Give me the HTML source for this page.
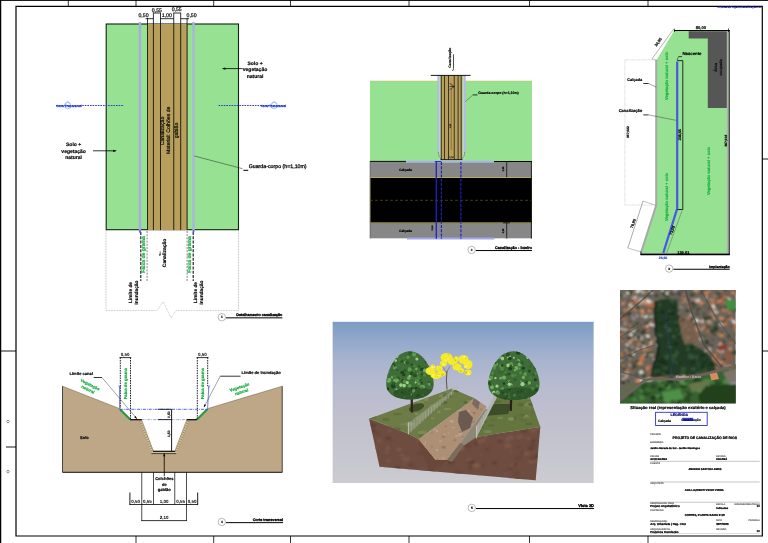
<!DOCTYPE html>
<html lang="pt-BR"><head><meta charset="utf-8"><title>Projeto de Canalização de Rios</title>
<style>
html,body{margin:0;padding:0;background:#fff;overflow:hidden}
svg{display:block;opacity:0.999;text-rendering:geometricPrecision;font-family:'Liberation Sans', sans-serif;}
</style></head><body>
<svg width="768" height="543" viewBox="0 0 768 543">
<defs>
<linearGradient id="sky" x1="0" y1="0" x2="0" y2="1">
<stop offset="0" stop-color="#7b9bc4"/><stop offset="0.12" stop-color="#93a9cb"/><stop offset="0.25" stop-color="#aab4cf"/><stop offset="0.4" stop-color="#b8bbcf"/><stop offset="0.6" stop-color="#c0c0ce"/><stop offset="1" stop-color="#cbcbd0"/>
</linearGradient>
<filter id="b1" x="-10%" y="-10%" width="120%" height="120%"><feGaussianBlur stdDeviation="0.6"/></filter>
<filter id="b3" x="-5%" y="-5%" width="110%" height="110%"><feGaussianBlur stdDeviation="0.85"/></filter>
<filter id="b2" x="-10%" y="-10%" width="120%" height="120%"><feGaussianBlur stdDeviation="1.2"/></filter>
</defs>
<rect x="0" y="0" width="768" height="543" fill="#fff" stroke="none" stroke-width="0"/>
<line x1="0" y1="0.4" x2="768" y2="0.4" stroke="#000" stroke-width="1.0"/>
<line x1="0.6" y1="0" x2="0.6" y2="543" stroke="#000" stroke-width="1.3"/>
<path d="M16 6.3 L762.3 6.3 L762.3 536 L16 536 Z" fill="none" stroke="#000" stroke-width="1.2"/>
<line x1="68.3" y1="0" x2="68.3" y2="6.3" stroke="#000" stroke-width="0.8"/>
<line x1="136" y1="0" x2="136" y2="6.3" stroke="#000" stroke-width="0.8"/>
<line x1="213.7" y1="0" x2="213.7" y2="6.3" stroke="#000" stroke-width="0.8"/>
<line x1="290.5" y1="0" x2="290.5" y2="6.3" stroke="#000" stroke-width="0.8"/>
<line x1="409" y1="0" x2="409" y2="6.3" stroke="#000" stroke-width="0.8"/>
<line x1="529.5" y1="0" x2="529.5" y2="6.3" stroke="#000" stroke-width="0.8"/>
<line x1="648" y1="0" x2="648" y2="6.3" stroke="#000" stroke-width="0.8"/>
<line x1="136" y1="536" x2="136" y2="543" stroke="#000" stroke-width="0.8"/>
<line x1="213.7" y1="536" x2="213.7" y2="543" stroke="#000" stroke-width="0.8"/>
<line x1="290.5" y1="536" x2="290.5" y2="543" stroke="#000" stroke-width="0.8"/>
<line x1="409" y1="536" x2="409" y2="543" stroke="#000" stroke-width="0.8"/>
<line x1="529.5" y1="536" x2="529.5" y2="543" stroke="#000" stroke-width="0.8"/>
<line x1="648" y1="536" x2="648" y2="543" stroke="#000" stroke-width="0.8"/>
<line x1="0" y1="351" x2="16" y2="351" stroke="#000" stroke-width="0.9"/>
<line x1="6" y1="447" x2="16" y2="447" stroke="#000" stroke-width="0.9"/>
<line x1="762" y1="159" x2="768" y2="159" stroke="#000" stroke-width="0.9"/>
<line x1="762" y1="351" x2="768" y2="351" stroke="#000" stroke-width="0.9"/>
<circle cx="8" cy="421.6" r="1.25" fill="none" stroke="#333" stroke-width="0.5"/>
<circle cx="8" cy="471.6" r="1.25" fill="none" stroke="#333" stroke-width="0.5"/>
<text x="761.5" y="8.4" font-size="2.85" text-anchor="end" fill="#1c1c90" font-weight="bold" stroke="#1c1c90" stroke-width="0.16">C:\Users\Projeto\Canalização.rvt</text>
<rect x="106.2" y="24" width="132.3" height="205.7" fill="#97e193" stroke="#102410" stroke-width="1.1"/>
<rect x="147.3" y="24" width="40" height="206" fill="#b8a05c" stroke="none" stroke-width="0"/>
<line x1="147.5" y1="24" x2="147.5" y2="230" stroke="#000" stroke-width="0.8"/>
<line x1="153.4" y1="24" x2="153.4" y2="230" stroke="#000" stroke-width="0.8"/>
<line x1="160.5" y1="24" x2="160.5" y2="230" stroke="#000" stroke-width="0.8"/>
<line x1="173.75" y1="24" x2="173.75" y2="230" stroke="#000" stroke-width="0.8"/>
<line x1="180.7" y1="24" x2="180.7" y2="230" stroke="#000" stroke-width="0.8"/>
<line x1="187.1" y1="24" x2="187.1" y2="230" stroke="#000" stroke-width="0.8"/>
<line x1="139.9" y1="22" x2="139.9" y2="232" stroke="#a9a9e6" stroke-width="2.3"/>
<line x1="193.5" y1="22" x2="193.5" y2="232" stroke="#a9b4e2" stroke-width="2.3"/>
<line x1="147.5" y1="18" x2="147.5" y2="24" stroke="#000" stroke-width="0.8"/>
<line x1="187.1" y1="18" x2="187.1" y2="24" stroke="#000" stroke-width="0.8"/>
<line x1="153.4" y1="12.6" x2="153.4" y2="24" stroke="#000" stroke-width="0.8"/>
<line x1="160.5" y1="12.6" x2="160.5" y2="24" stroke="#000" stroke-width="0.8"/>
<line x1="173.75" y1="12.6" x2="173.75" y2="24" stroke="#000" stroke-width="0.8"/>
<line x1="180.7" y1="12.6" x2="180.7" y2="24" stroke="#000" stroke-width="0.8"/>
<line x1="145.5" y1="18.7" x2="153.4" y2="18.7" stroke="#000" stroke-width="0.8"/>
<line x1="160.5" y1="18.7" x2="173.75" y2="18.7" stroke="#000" stroke-width="0.8"/>
<line x1="180.7" y1="18.7" x2="189" y2="18.7" stroke="#000" stroke-width="0.8"/>
<line x1="153.4" y1="13" x2="160.5" y2="13" stroke="#000" stroke-width="0.8"/>
<line x1="173.75" y1="13" x2="180.7" y2="13" stroke="#000" stroke-width="0.8"/>
<text x="143.5" y="17.4" font-size="5.2" text-anchor="middle" fill="#000" font-weight="normal" stroke="#000" stroke-width="0.18">0,50</text>
<text x="156.9" y="11.6" font-size="5.2" text-anchor="middle" fill="#000" font-weight="normal" stroke="#000" stroke-width="0.18">0,55</text>
<text x="166.8" y="17.4" font-size="5.2" text-anchor="middle" fill="#000" font-weight="normal" stroke="#000" stroke-width="0.18">1,00</text>
<text x="176.7" y="10.9" font-size="5.2" text-anchor="middle" fill="#000" font-weight="normal" stroke="#000" stroke-width="0.18">0,55</text>
<text x="191.6" y="17.4" font-size="5.2" text-anchor="middle" fill="#000" font-weight="normal" stroke="#000" stroke-width="0.18">0,50</text>
<text x="163.1" y="131" font-size="5.2" text-anchor="middle" fill="#000" font-weight="normal" transform="rotate(-90 163.1 131)" dominant-baseline="central" stroke="#000" stroke-width="0.18">Canalização</text>
<text x="169.3" y="130.3" font-size="5.2" text-anchor="middle" fill="#000" font-weight="normal" transform="rotate(-90 169.3 130.3)" dominant-baseline="central" stroke="#000" stroke-width="0.18">Material: Colhões de</text>
<text x="176.5" y="130.5" font-size="5.2" text-anchor="middle" fill="#000" font-weight="normal" transform="rotate(-90 176.5 130.5)" dominant-baseline="central" stroke="#000" stroke-width="0.18">gabião</text>
<text x="255" y="65.0" font-size="5" text-anchor="middle" fill="#000" font-weight="bold" stroke="#000" stroke-width="0.16">Solo +</text>
<text x="255" y="71.4" font-size="5" text-anchor="middle" fill="#000" font-weight="bold" stroke="#000" stroke-width="0.16">vegetação</text>
<text x="255" y="77.8" font-size="5" text-anchor="middle" fill="#000" font-weight="bold" stroke="#000" stroke-width="0.16">natural</text>
<line x1="223" y1="68.6" x2="242.5" y2="68.6" stroke="#000" stroke-width="0.8"/>
<path d="M221.8 68.6 L225.4 67.5 L225.4 69.7 Z" fill="#000" stroke="none" stroke-width="0"/>
<text x="73.6" y="146.2" font-size="5" text-anchor="middle" fill="#000" font-weight="bold" stroke="#000" stroke-width="0.16">Solo +</text>
<text x="73.6" y="152.5" font-size="5" text-anchor="middle" fill="#000" font-weight="bold" stroke="#000" stroke-width="0.16">vegetação</text>
<text x="73.6" y="158.79999999999998" font-size="5" text-anchor="middle" fill="#000" font-weight="bold" stroke="#000" stroke-width="0.16">natural</text>
<line x1="93" y1="150.8" x2="115.5" y2="150.8" stroke="#000" stroke-width="0.8"/>
<path d="M116.8 150.8 L113.2 149.7 L113.2 151.9 Z" fill="#000" stroke="none" stroke-width="0"/>
<line x1="56.2" y1="105.5" x2="124" y2="105.5" stroke="#2a3bd8" stroke-width="1.1" stroke-dasharray="1.6 1"/>
<line x1="218.5" y1="105.5" x2="286" y2="105.5" stroke="#2a3bd8" stroke-width="1.1" stroke-dasharray="1.6 1"/>
<circle cx="67.7" cy="105.6" r="3.2" fill="none" stroke="#7ab0f0" stroke-width="0.7"/>
<path d="M65.3 103.4 L67.7 101.2 L70.10000000000001 103.4" fill="none" stroke="#7ab0f0" stroke-width="0.6"/>
<circle cx="274.2" cy="105.6" r="3.2" fill="none" stroke="#7ab0f0" stroke-width="0.7"/>
<path d="M271.8 103.4 L274.2 101.2 L276.59999999999997 103.4" fill="none" stroke="#7ab0f0" stroke-width="0.6"/>
<text x="56.2" y="106.6" font-size="3.0" text-anchor="start" fill="#2a3bd8" font-weight="bold" stroke="#2a3bd8" stroke-width="0.25">Corte Transversal</text>
<text x="286" y="106.6" font-size="3.0" text-anchor="end" fill="#2a3bd8" font-weight="bold" stroke="#2a3bd8" stroke-width="0.25">Corte Transversal</text>
<line x1="194.3" y1="156" x2="242.6" y2="168.7" stroke="#2a3a2a" stroke-width="0.55"/>
<line x1="243.3" y1="170.3" x2="248.2" y2="170.3" stroke="#000" stroke-width="1.0"/>
<text x="248.7" y="168" font-size="5.25" text-anchor="start" fill="#000" font-weight="normal" stroke="#000" stroke-width="0.25">Guarda-corpo (h=1,10m)</text>
<line x1="106" y1="230" x2="106" y2="310.5" stroke="#777" stroke-width="0.5" stroke-dasharray="0.8 0.8"/>
<line x1="238.5" y1="230" x2="238.5" y2="310.5" stroke="#777" stroke-width="0.5" stroke-dasharray="0.8 0.8"/>
<path d="M106 310.5 L157 310.5 L163.2 301.6 L171 318 L176 310.5 L238.5 310.5" fill="none" stroke="#888" stroke-width="0.5" stroke-dasharray="0.8 0.8"/>
<line x1="140.8" y1="232" x2="140.8" y2="281" stroke="#111" stroke-width="1.1" stroke-dasharray="3 1.3"/>
<line x1="193.2" y1="232" x2="193.2" y2="281" stroke="#111" stroke-width="1.1" stroke-dasharray="3 1.3"/>
<line x1="147.1" y1="231" x2="147.1" y2="282" stroke="#666" stroke-width="0.8" stroke-dasharray="2 1.2"/>
<line x1="187.1" y1="231" x2="187.1" y2="282" stroke="#666" stroke-width="0.8" stroke-dasharray="2 1.2"/>
<line x1="140" y1="230" x2="140" y2="233" stroke="#5555cc" stroke-width="1.2"/>
<line x1="193.5" y1="230" x2="193.5" y2="233" stroke="#5555cc" stroke-width="1.2"/>
<text x="144" y="254.5" font-size="5" text-anchor="middle" fill="#14a83a" font-weight="bold" transform="rotate(-90 144 254.5)" dominant-baseline="central" stroke="#14a83a" stroke-width="0.16">Faixa de grama</text>
<text x="189.8" y="254.5" font-size="5" text-anchor="middle" fill="#14a83a" font-weight="bold" transform="rotate(-90 189.8 254.5)" dominant-baseline="central" stroke="#14a83a" stroke-width="0.16">Faixa de grama</text>
<text x="165.2" y="253" font-size="4.9" text-anchor="middle" fill="#000" font-weight="bold" transform="rotate(-90 165.2 253)" dominant-baseline="central" stroke="#000" stroke-width="0.16">Canalização</text>
<text x="159.9" y="253.5" font-size="3.4" text-anchor="middle" fill="#000" font-weight="bold" transform="rotate(-90 159.9 253.5)" dominant-baseline="central" stroke="#000" stroke-width="0.16">&lt;--</text>
<text x="131.8" y="292.5" font-size="4.8" text-anchor="middle" fill="#000" font-weight="bold" transform="rotate(-90 131.8 292.5)" dominant-baseline="central" stroke="#000" stroke-width="0.16">Limite de</text>
<text x="137.5" y="292.5" font-size="4.8" text-anchor="middle" fill="#000" font-weight="bold" transform="rotate(-90 137.5 292.5)" dominant-baseline="central" stroke="#000" stroke-width="0.16">Inundação</text>
<text x="196.3" y="292.5" font-size="4.8" text-anchor="middle" fill="#000" font-weight="bold" transform="rotate(-90 196.3 292.5)" dominant-baseline="central" stroke="#000" stroke-width="0.16">Limite de</text>
<text x="202.3" y="292.5" font-size="4.8" text-anchor="middle" fill="#000" font-weight="bold" transform="rotate(-90 202.3 292.5)" dominant-baseline="central" stroke="#000" stroke-width="0.16">Inundação</text>
<circle cx="221.8" cy="317.2" r="3.7" fill="#fff" stroke="#777" stroke-width="0.5"/>
<text x="221.8" y="318.4" font-size="3.2" text-anchor="middle" fill="#000" font-weight="bold" stroke="#000" stroke-width="0.16">1</text>
<line x1="226.0" y1="317.84999999999997" x2="282.4" y2="317.84999999999997" stroke="#000" stroke-width="1.0"/>
<text x="282.4" y="316.2" font-size="3.7" text-anchor="end" fill="#000" font-weight="bold" stroke="#000" stroke-width="0.3">Detalhamento canalização</text>
<path d="M62.5 386.2 L119.75 408.7 L129.75 419.5 L141 419.5 L153.5 451.2 L174.75 451.2 L187.25 419.5 L197.25 419.5 L207.25 408.7 L282.25 386.2 L282.25 472.3 L62.5 472.3 Z" fill="#bda786" stroke="none" stroke-width="0"/>
<path d="M62.5 386.2 L119.75 408.7" fill="none" stroke="#6b5a3a" stroke-width="0.5"/>
<path d="M207.25 408.7 L282.25 386.2" fill="none" stroke="#6b5a3a" stroke-width="0.5"/>
<line x1="62.5" y1="386.2" x2="62.5" y2="472.3" stroke="#222" stroke-width="0.8"/>
<line x1="282.25" y1="386.2" x2="282.25" y2="472.3" stroke="#222" stroke-width="0.8"/>
<line x1="62.5" y1="472.3" x2="282.25" y2="472.3" stroke="#111" stroke-width="1.0"/>
<path d="M141.8 420.2 L153.2 450.8 L175 450.8 L186.6 420.2 L189.2 420.2 L177 453.6 L151.2 453.6 L139.2 420.2 Z" fill="#cdbd98" stroke="none" stroke-width="0"/>
<line x1="139.0" y1="421.9" x2="142.0" y2="420.4" stroke="#6b5a3a" stroke-width="0.45"/>
<line x1="189.4" y1="421.9" x2="186.4" y2="420.4" stroke="#6b5a3a" stroke-width="0.45"/>
<line x1="139.87692307692308" y1="424.17692307692306" x2="142.87692307692308" y2="422.67692307692306" stroke="#6b5a3a" stroke-width="0.45"/>
<line x1="188.52307692307693" y1="424.17692307692306" x2="185.52307692307693" y2="422.67692307692306" stroke="#6b5a3a" stroke-width="0.45"/>
<line x1="140.75384615384615" y1="426.45384615384614" x2="143.75384615384615" y2="424.95384615384614" stroke="#6b5a3a" stroke-width="0.45"/>
<line x1="187.64615384615385" y1="426.45384615384614" x2="184.64615384615385" y2="424.95384615384614" stroke="#6b5a3a" stroke-width="0.45"/>
<line x1="141.63076923076923" y1="428.7307692307692" x2="144.63076923076923" y2="427.2307692307692" stroke="#6b5a3a" stroke-width="0.45"/>
<line x1="186.76923076923077" y1="428.7307692307692" x2="183.76923076923077" y2="427.2307692307692" stroke="#6b5a3a" stroke-width="0.45"/>
<line x1="142.5076923076923" y1="431.0076923076923" x2="145.5076923076923" y2="429.5076923076923" stroke="#6b5a3a" stroke-width="0.45"/>
<line x1="185.8923076923077" y1="431.0076923076923" x2="182.8923076923077" y2="429.5076923076923" stroke="#6b5a3a" stroke-width="0.45"/>
<line x1="143.3846153846154" y1="433.28461538461534" x2="146.3846153846154" y2="431.78461538461534" stroke="#6b5a3a" stroke-width="0.45"/>
<line x1="185.01538461538462" y1="433.28461538461534" x2="182.01538461538462" y2="431.78461538461534" stroke="#6b5a3a" stroke-width="0.45"/>
<line x1="144.26153846153846" y1="435.5615384615384" x2="147.26153846153846" y2="434.0615384615384" stroke="#6b5a3a" stroke-width="0.45"/>
<line x1="184.13846153846154" y1="435.5615384615384" x2="181.13846153846154" y2="434.0615384615384" stroke="#6b5a3a" stroke-width="0.45"/>
<line x1="145.13846153846154" y1="437.8384615384615" x2="148.13846153846154" y2="436.3384615384615" stroke="#6b5a3a" stroke-width="0.45"/>
<line x1="183.26153846153846" y1="437.8384615384615" x2="180.26153846153846" y2="436.3384615384615" stroke="#6b5a3a" stroke-width="0.45"/>
<line x1="146.01538461538462" y1="440.1153846153846" x2="149.01538461538462" y2="438.6153846153846" stroke="#6b5a3a" stroke-width="0.45"/>
<line x1="182.3846153846154" y1="440.1153846153846" x2="179.3846153846154" y2="438.6153846153846" stroke="#6b5a3a" stroke-width="0.45"/>
<line x1="146.8923076923077" y1="442.39230769230767" x2="149.8923076923077" y2="440.89230769230767" stroke="#6b5a3a" stroke-width="0.45"/>
<line x1="181.5076923076923" y1="442.39230769230767" x2="178.5076923076923" y2="440.89230769230767" stroke="#6b5a3a" stroke-width="0.45"/>
<line x1="147.76923076923077" y1="444.66923076923075" x2="150.76923076923077" y2="443.16923076923075" stroke="#6b5a3a" stroke-width="0.45"/>
<line x1="180.63076923076923" y1="444.66923076923075" x2="177.63076923076923" y2="443.16923076923075" stroke="#6b5a3a" stroke-width="0.45"/>
<line x1="148.64615384615385" y1="446.94615384615383" x2="151.64615384615385" y2="445.44615384615383" stroke="#6b5a3a" stroke-width="0.45"/>
<line x1="179.75384615384615" y1="446.94615384615383" x2="176.75384615384615" y2="445.44615384615383" stroke="#6b5a3a" stroke-width="0.45"/>
<line x1="149.52307692307693" y1="449.2230769230769" x2="152.52307692307693" y2="447.7230769230769" stroke="#6b5a3a" stroke-width="0.45"/>
<line x1="178.87692307692308" y1="449.2230769230769" x2="175.87692307692308" y2="447.7230769230769" stroke="#6b5a3a" stroke-width="0.45"/>
<line x1="150.4" y1="451.5" x2="153.4" y2="450.0" stroke="#6b5a3a" stroke-width="0.45"/>
<line x1="178.0" y1="451.5" x2="175.0" y2="450.0" stroke="#6b5a3a" stroke-width="0.45"/>
<line x1="141.9" y1="420.3" x2="153.2" y2="450.9" stroke="#8a7850" stroke-width="0.5"/>
<line x1="186.5" y1="420.3" x2="175" y2="450.9" stroke="#8a7850" stroke-width="0.5"/>
<line x1="153" y1="451.3" x2="175.2" y2="451.3" stroke="#000" stroke-width="1.1"/>
<line x1="151.3" y1="453.6" x2="176.3" y2="453.6" stroke="#111" stroke-width="0.7"/>
<line x1="130" y1="419.7" x2="141.9" y2="419.7" stroke="#000" stroke-width="1.2"/>
<line x1="186.6" y1="419.7" x2="197.2" y2="419.7" stroke="#000" stroke-width="1.2"/>
<line x1="119.9" y1="409.2" x2="130.2" y2="419.4" stroke="#259a3a" stroke-width="2.1"/>
<line x1="207.3" y1="409.2" x2="197" y2="419.4" stroke="#259a3a" stroke-width="2.1"/>
<line x1="119.75" y1="409.3" x2="207.5" y2="409.3" stroke="#2a3bd8" stroke-width="0.8" stroke-dasharray="3 1 0.8 1"/>
<line x1="141.5" y1="419.6" x2="187" y2="419.6" stroke="#5a6ae0" stroke-width="0.6" stroke-dasharray="3 1 0.8 1"/>
<line x1="158" y1="409.3" x2="171.6" y2="409.3" stroke="#000" stroke-width="0.8"/>
<line x1="158" y1="419.6" x2="171.6" y2="419.6" stroke="#000" stroke-width="0.8"/>
<line x1="119.7" y1="386" x2="119.7" y2="409" stroke="#6a6ae8" stroke-width="0.9"/>
<line x1="208.8" y1="386" x2="207.6" y2="409" stroke="#6a6ae8" stroke-width="0.9"/>
<path d="M118.6 385 L119.7 388.5 L120.8 385" fill="none" stroke="#6a6ae8" stroke-width="0.5"/>
<path d="M207.7 385 L208.7 388.5 L209.9 385" fill="none" stroke="#6a6ae8" stroke-width="0.5"/>
<line x1="120.3" y1="357.5" x2="120.3" y2="408" stroke="#111" stroke-width="0.9" stroke-dasharray="1.6 0.9"/>
<line x1="130.5" y1="357.5" x2="130.5" y2="419" stroke="#111" stroke-width="0.9" stroke-dasharray="1.6 0.9"/>
<line x1="197.3" y1="357.5" x2="197.3" y2="419" stroke="#111" stroke-width="0.9" stroke-dasharray="1.6 0.9"/>
<line x1="207.7" y1="357.5" x2="207.7" y2="386" stroke="#111" stroke-width="0.9" stroke-dasharray="1.6 0.9"/>
<line x1="119.5" y1="357.6" x2="131.2" y2="357.6" stroke="#000" stroke-width="0.8"/>
<line x1="196.5" y1="357.6" x2="208.5" y2="357.6" stroke="#000" stroke-width="0.8"/>
<text x="125.2" y="356.2" font-size="4.5" text-anchor="middle" fill="#000" font-weight="bold" stroke="none">0,50</text>
<text x="202.4" y="356.2" font-size="4.5" text-anchor="middle" fill="#000" font-weight="bold" stroke="none">0,50</text>
<text x="125.6" y="383.7" font-size="4.3" text-anchor="middle" fill="#14a83a" font-weight="bold" transform="rotate(-90 125.6 383.7)" dominant-baseline="central" stroke="#14a83a" stroke-width="0.16">Faixa de grama</text>
<text x="202.6" y="383.7" font-size="4.3" text-anchor="middle" fill="#14a83a" font-weight="bold" transform="rotate(-90 202.6 383.7)" dominant-baseline="central" stroke="#14a83a" stroke-width="0.16">Faixa de grama</text>
<text x="69.5" y="374.5" font-size="4.05" text-anchor="start" fill="#000" font-weight="bold" stroke="#000" stroke-width="0.16">Limite canal</text>
<line x1="93.7" y1="377.5" x2="102" y2="377.5" stroke="#000" stroke-width="0.8"/>
<line x1="102" y1="377.5" x2="136.8" y2="418.7" stroke="#333" stroke-width="0.45"/>
<path d="M137.3 419.3 L134.2 417.3 L135.6 416.1 Z" fill="#000" stroke="none" stroke-width="0"/>
<text x="280.7" y="373.5" font-size="4.05" text-anchor="end" fill="#000" font-weight="bold" stroke="#000" stroke-width="0.16">Limite de inundação</text>
<line x1="220.2" y1="376.2" x2="240.5" y2="376.2" stroke="#000" stroke-width="0.8"/>
<line x1="220.2" y1="376.2" x2="204.2" y2="406.8" stroke="#333" stroke-width="0.45"/>
<path d="M203.8 407.6 L204.3 404.2 L206 405.1 Z" fill="#000" stroke="none" stroke-width="0"/>
<text x="89.5" y="386" font-size="4.2" text-anchor="middle" fill="#14a83a" font-weight="bold" transform="rotate(27 89.5 386)" stroke="#14a83a" stroke-width="0.16">Vegetação</text>
<text x="87.3" y="390.6" font-size="4.2" text-anchor="middle" fill="#14a83a" font-weight="bold" transform="rotate(27 87.3 390.6)" stroke="#14a83a" stroke-width="0.16">natural</text>
<text x="240" y="388.5" font-size="4.2" text-anchor="middle" fill="#14a83a" font-weight="bold" transform="rotate(-19 240 388.5)" stroke="#14a83a" stroke-width="0.16">Vegetação</text>
<text x="242" y="393.3" font-size="4.2" text-anchor="middle" fill="#14a83a" font-weight="bold" transform="rotate(-19 242 393.3)" stroke="#14a83a" stroke-width="0.16">natural</text>
<text x="84.4" y="439" font-size="4.0" text-anchor="middle" fill="#000" font-weight="bold" stroke="#000" stroke-width="0.16">Solo</text>
<line x1="171.6" y1="409.2" x2="171.6" y2="451" stroke="#000" stroke-width="0.9"/>
<text x="168.9" y="414.6" font-size="3.4" text-anchor="middle" fill="#000" font-weight="bold" transform="rotate(-90 168.9 414.6)" dominant-baseline="central" stroke="#000" stroke-width="0.16">0,50</text>
<text x="168.9" y="433.7" font-size="3.4" text-anchor="middle" fill="#000" font-weight="bold" transform="rotate(-90 168.9 433.7)" dominant-baseline="central" stroke="#000" stroke-width="0.16">1,50</text>
<line x1="164.25" y1="454" x2="164.25" y2="476.3" stroke="#000" stroke-width="0.8"/>
<path d="M164.25 453 L163.1 456.2 L165.4 456.2 Z" fill="#000" stroke="none" stroke-width="0"/>
<text x="164.3" y="480.2" font-size="4.05" text-anchor="middle" fill="#000" font-weight="bold" stroke="#000" stroke-width="0.16">Colchões</text>
<text x="164.3" y="485.5" font-size="4.05" text-anchor="middle" fill="#000" font-weight="bold" stroke="#000" stroke-width="0.16">de</text>
<text x="164.3" y="490.8" font-size="4.05" text-anchor="middle" fill="#000" font-weight="bold" stroke="#000" stroke-width="0.16">gabião</text>
<line x1="141.75" y1="472.3" x2="141.75" y2="520.8" stroke="#000" stroke-width="0.7"/>
<line x1="186.5" y1="472.3" x2="186.5" y2="520.8" stroke="#000" stroke-width="0.7"/>
<line x1="153.5" y1="472.3" x2="153.5" y2="504.5" stroke="#000" stroke-width="0.7"/>
<line x1="174.75" y1="472.3" x2="174.75" y2="504.5" stroke="#000" stroke-width="0.7"/>
<line x1="129.5" y1="504.5" x2="198" y2="504.5" stroke="#000" stroke-width="0.8"/>
<line x1="129.9" y1="492.5" x2="129.9" y2="504.8" stroke="#000" stroke-width="0.9"/>
<line x1="197.7" y1="492.5" x2="197.7" y2="504.8" stroke="#000" stroke-width="0.9"/>
<text x="135.7" y="502.5" font-size="4.5" text-anchor="middle" fill="#000" font-weight="bold" stroke="none">0,50</text>
<text x="147.5" y="502.5" font-size="4.5" text-anchor="middle" fill="#000" font-weight="bold" stroke="none">0,55</text>
<text x="164.2" y="502.5" font-size="4.5" text-anchor="middle" fill="#000" font-weight="bold" stroke="none">1,00</text>
<text x="180.6" y="502.5" font-size="4.5" text-anchor="middle" fill="#000" font-weight="bold" stroke="none">0,55</text>
<text x="192.2" y="502.5" font-size="4.5" text-anchor="middle" fill="#000" font-weight="bold" stroke="none">0,50</text>
<line x1="141.3" y1="520.6" x2="187" y2="520.6" stroke="#000" stroke-width="0.8"/>
<text x="164.2" y="519" font-size="4.5" text-anchor="middle" fill="#000" font-weight="bold" stroke="none">2,10</text>
<circle cx="221.8" cy="522" r="3.7" fill="#fff" stroke="#777" stroke-width="0.5"/>
<text x="221.8" y="523.2" font-size="3.2" text-anchor="middle" fill="#000" font-weight="bold" stroke="#000" stroke-width="0.16">4</text>
<line x1="226.0" y1="522.65" x2="283" y2="522.65" stroke="#000" stroke-width="1.0"/>
<text x="283" y="521.0" font-size="3.7" text-anchor="end" fill="#000" font-weight="bold" stroke="#000" stroke-width="0.3">Corte transversal</text>
<rect x="370" y="81" width="162" height="80" fill="#97e193" stroke="none" stroke-width="0"/>
<line x1="370" y1="81.1" x2="532" y2="81.1" stroke="#c9c06a" stroke-width="0.6"/>
<rect x="438.8" y="75.4" width="26" height="84.2" fill="#b5e0c0" stroke="none" stroke-width="0"/>
<rect x="440.6" y="75.4" width="21.8" height="84.2" fill="#b8a05c" stroke="none" stroke-width="0"/>
<line x1="438.3" y1="75.4" x2="438.3" y2="153" stroke="#b4b8ea" stroke-width="1.9"/>
<line x1="464.8" y1="75.4" x2="464.8" y2="153" stroke="#b4b8ea" stroke-width="1.9"/>
<path d="M438.3 152 Q438.6 157.5 441.3 159.6" fill="none" stroke="#4a7a4a" stroke-width="0.6"/>
<path d="M464.8 152 Q464.5 157.5 461.8 159.6" fill="none" stroke="#4a7a4a" stroke-width="0.6"/>
<line x1="441.3" y1="75.4" x2="441.3" y2="159.6" stroke="#111" stroke-width="0.75"/>
<line x1="444.5" y1="75.4" x2="444.5" y2="159.6" stroke="#111" stroke-width="0.75"/>
<line x1="448.5" y1="75.4" x2="448.5" y2="159.6" stroke="#111" stroke-width="0.75"/>
<line x1="454.25" y1="75.4" x2="454.25" y2="159.6" stroke="#111" stroke-width="0.75"/>
<line x1="458.1" y1="75.4" x2="458.1" y2="159.6" stroke="#111" stroke-width="0.75"/>
<line x1="461.2" y1="75.4" x2="461.2" y2="159.6" stroke="#111" stroke-width="0.75"/>
<line x1="430.7" y1="75.4" x2="470.6" y2="75.4" stroke="#000" stroke-width="0.9"/>
<line x1="440.6" y1="159.6" x2="462.4" y2="159.6" stroke="#000" stroke-width="0.8"/>
<text x="449.7" y="57.7" font-size="3.5" text-anchor="middle" fill="#000" font-weight="bold" transform="rotate(-90 449.7 57.7)" dominant-baseline="central" stroke="#000" stroke-width="0.16">Canalização</text>
<path d="M453.5 54.4 L453.5 68.5 Q453.4 70.3 452.3 71" fill="none" stroke="#000" stroke-width="0.7"/>
<path d="M449.6 83.6 A2.9 2.9 0 0 1 449.6 89.4" fill="none" stroke="#222" stroke-width="0.7"/>
<line x1="449.5" y1="86.5" x2="454" y2="86.5" stroke="#222" stroke-width="0.6"/>
<path d="M455 86.5 L452.8 85.3 L452.8 87.7 Z" fill="#222" stroke="none" stroke-width="0"/>
<line x1="451.3" y1="89" x2="451.3" y2="150" stroke="#4a3c12" stroke-width="0.4"/>
<text x="451.4" y="126" font-size="2.2" text-anchor="middle" fill="#2a2208" font-weight="bold" transform="rotate(-90 451.4 126)" dominant-baseline="central" stroke="#2a2208" stroke-width="0.16">1,00</text>
<text x="451.5" y="158.3" font-size="2.2" text-anchor="middle" fill="#2a2208" font-weight="bold" stroke="#2a2208" stroke-width="0.16">1,00</text>
<text x="478.2" y="94" font-size="3.5" text-anchor="start" fill="#000" font-weight="bold" stroke="#000" stroke-width="0.16">Guarda-corpo (h=1,10m)</text>
<line x1="472.8" y1="94.9" x2="477.5" y2="94.9" stroke="#000" stroke-width="0.8"/>
<line x1="472.8" y1="94.9" x2="465.3" y2="101.8" stroke="#333" stroke-width="0.45"/>
<rect x="370" y="161" width="161.6" height="16.5" fill="#878787" stroke="none" stroke-width="0"/>
<rect x="370" y="223" width="161.6" height="15.3" fill="#878787" stroke="none" stroke-width="0"/>
<rect x="370" y="177.2" width="162" height="46" fill="#000" stroke="none" stroke-width="0"/>
<line x1="370" y1="177.5" x2="532" y2="177.5" stroke="#b5ad58" stroke-width="1.0"/>
<line x1="370" y1="222.9" x2="532" y2="222.9" stroke="#b5ad58" stroke-width="1.0"/>
<line x1="370.4" y1="177.6" x2="370.4" y2="222.7" stroke="#b0a23a" stroke-width="0.6"/>
<line x1="531.6" y1="177.6" x2="531.6" y2="222.7" stroke="#b0a23a" stroke-width="0.6"/>
<line x1="370" y1="200.3" x2="532" y2="200.3" stroke="#5e5518" stroke-width="0.7" stroke-dasharray="3 2"/>
<line x1="406" y1="161.7" x2="494" y2="161.7" stroke="#adb2ea" stroke-width="2.0"/>
<line x1="407" y1="238.5" x2="494.4" y2="238.5" stroke="#a4a6ee" stroke-width="2.0"/>
<line x1="370" y1="161.4" x2="406" y2="161.4" stroke="#111" stroke-width="1.0"/>
<line x1="494" y1="161.5" x2="532" y2="161.5" stroke="#000" stroke-width="1.0"/>
<line x1="370" y1="161" x2="370" y2="238.6" stroke="#444" stroke-width="0.5"/>
<line x1="531.4" y1="161" x2="531.4" y2="238.6" stroke="#111" stroke-width="0.9"/>
<text x="405.5" y="171.2" font-size="3.4" text-anchor="middle" fill="#000" font-weight="bold" stroke="#000" stroke-width="0.16">Calçada</text>
<text x="405.5" y="231.6" font-size="3.4" text-anchor="middle" fill="#000" font-weight="bold" stroke="#000" stroke-width="0.16">Calçada</text>
<line x1="436.3" y1="161.5" x2="436.3" y2="238.8" stroke="#1c22c8" stroke-width="1.3"/>
<line x1="434.8" y1="161.6" x2="441.3" y2="161.6" stroke="#1c22c8" stroke-width="1.0"/>
<line x1="441.4" y1="162" x2="441.4" y2="238.8" stroke="#1c22c8" stroke-width="1.15" stroke-dasharray="3 1.2"/>
<line x1="460.9" y1="162" x2="460.9" y2="238.8" stroke="#1c22c8" stroke-width="1.15" stroke-dasharray="3 1.2"/>
<line x1="506.7" y1="161.2" x2="506.7" y2="177.2" stroke="#111" stroke-width="0.8"/>
<line x1="506.7" y1="223" x2="506.7" y2="238.6" stroke="#111" stroke-width="0.8"/>
<line x1="503" y1="222.8" x2="510" y2="222.8" stroke="#111" stroke-width="0.9"/>
<text x="503.4" y="169" font-size="2.4" text-anchor="middle" fill="#000" font-weight="bold" transform="rotate(-90 503.4 169)" dominant-baseline="central" stroke="#000" stroke-width="0.16">2,00</text>
<text x="503.4" y="231" font-size="2.4" text-anchor="middle" fill="#000" font-weight="bold" transform="rotate(-90 503.4 231)" dominant-baseline="central" stroke="#000" stroke-width="0.16">2,00</text>
<text x="432.8" y="228" font-size="2.2" text-anchor="middle" fill="#111" font-weight="bold" transform="rotate(-90 432.8 228)" dominant-baseline="central" stroke="#111" stroke-width="0.16">12,00</text>
<circle cx="471.6" cy="249.9" r="3.7" fill="#fff" stroke="#777" stroke-width="0.5"/>
<text x="471.6" y="251.1" font-size="3.2" text-anchor="middle" fill="#000" font-weight="bold" stroke="#000" stroke-width="0.16">2</text>
<line x1="475.8" y1="250.55" x2="532" y2="250.55" stroke="#000" stroke-width="1.0"/>
<text x="532" y="248.9" font-size="3.8" text-anchor="end" fill="#000" font-weight="bold" stroke="#000" stroke-width="0.3">Canalização - bueiro</text>
<path d="M674.3 30.5 L728.6 30.5 L728.6 253.2 L641.3 253.2 L656.7 205.4 L656.7 59.8 Z" fill="#97e193" stroke="none" stroke-width="0"/>
<path d="M656.2 59.8 L656.2 205.3 L641 252.6" fill="none" stroke="#a8a8a8" stroke-width="2.0"/>
<line x1="727.6" y1="31" x2="727.6" y2="253" stroke="#b0b0b0" stroke-width="1.6"/>
<path d="M688.7 31.3 L726.8 31.3 L726.8 108.1 L707.8 108.1 L707.8 38.6 L688.7 38.6 Z" fill="#565656" stroke="none" stroke-width="0"/>
<text x="715.3" y="67.4" font-size="3.9" text-anchor="middle" fill="#111" font-weight="bold" transform="rotate(-90 715.3 67.4)" dominant-baseline="central" stroke="#111" stroke-width="0.16">Área</text>
<text x="720.2" y="67.4" font-size="3.9" text-anchor="middle" fill="#111" font-weight="bold" transform="rotate(-90 720.2 67.4)" dominant-baseline="central" stroke="#111" stroke-width="0.16">ocupada</text>
<line x1="674" y1="30.5" x2="729.8" y2="30.5" stroke="#000" stroke-width="1.2"/>
<line x1="729.2" y1="30" x2="729.2" y2="254.5" stroke="#000" stroke-width="1.0"/>
<line x1="640.5" y1="254.3" x2="729.8" y2="254.3" stroke="#000" stroke-width="1.8"/>
<line x1="640.9" y1="251.5" x2="640.9" y2="255" stroke="#000" stroke-width="0.8"/>
<line x1="674.4" y1="28.8" x2="674.4" y2="32" stroke="#000" stroke-width="0.7"/>
<line x1="728.5" y1="28.5" x2="728.5" y2="32" stroke="#000" stroke-width="0.7"/>
<text x="700.9" y="28.6" font-size="4.1" text-anchor="middle" fill="#000" font-weight="bold" stroke="#000" stroke-width="0.16">80,00</text>
<line x1="652" y1="58.9" x2="674" y2="28.5" stroke="#555" stroke-width="0.45"/>
<line x1="652" y1="58.9" x2="656.5" y2="60.3" stroke="#777" stroke-width="0.35"/>
<text x="658.4" y="42.4" font-size="3.8" text-anchor="middle" fill="#000" font-weight="bold" transform="rotate(-54 658.4 42.4)" dominant-baseline="central" stroke="#000" stroke-width="0.16">34,55</text>
<text x="682.4" y="55" font-size="4.3" text-anchor="start" fill="#000" font-weight="bold" stroke="#000" stroke-width="0.16">Nascente</text>
<line x1="678.6" y1="56.6" x2="682" y2="56.6" stroke="#000" stroke-width="0.7"/>
<line x1="678.6" y1="56.6" x2="677" y2="60" stroke="#000" stroke-width="0.5"/>
<path d="M677.2 61.5 L677.2 208.7 L663.3 252.9" fill="none" stroke="#4758e6" stroke-width="2.2"/>
<path d="M677.2 60.6 L682.8 60.6 L682.8 209.5 L677.6 209.5" fill="none" stroke="#000" stroke-width="0.8"/>
<line x1="682.2" y1="210.4" x2="666.7" y2="252.9" stroke="#444" stroke-width="0.4"/>
<text x="679.8" y="134.7" font-size="3.6" text-anchor="middle" fill="#000" font-weight="bold" transform="rotate(-90 679.8 134.7)" dominant-baseline="central" stroke="#000" stroke-width="0.16">236,55</text>
<text x="672.5" y="230.4" font-size="3.8" text-anchor="middle" fill="#000" font-weight="bold" transform="rotate(-72.5 672.5 230.4)" dominant-baseline="central" stroke="#000" stroke-width="0.16">73,05</text>
<text x="666" y="76" font-size="4.1" text-anchor="middle" fill="#18b240" font-weight="bold" transform="rotate(-90 666 76)" dominant-baseline="central" stroke="#18b240" stroke-width="0.16">Vegetação natural + solo</text>
<text x="666" y="197" font-size="4.1" text-anchor="middle" fill="#18b240" font-weight="bold" transform="rotate(-90 666 197)" dominant-baseline="central" stroke="#18b240" stroke-width="0.16">Vegetação natural + solo</text>
<text x="708.4" y="171" font-size="4.1" text-anchor="middle" fill="#18b240" font-weight="bold" transform="rotate(-90 708.4 171)" dominant-baseline="central" stroke="#18b240" stroke-width="0.16">Vegetação natural + solo</text>
<text x="642.3" y="80.6" font-size="3.95" text-anchor="end" fill="#000" font-weight="bold" stroke="#000" stroke-width="0.16">Calçada</text>
<line x1="643.3" y1="83.5" x2="648.6" y2="83.5" stroke="#000" stroke-width="0.8"/>
<line x1="648.6" y1="83.5" x2="656.3" y2="87.2" stroke="#333" stroke-width="0.45"/>
<text x="642.3" y="112.4" font-size="4.1" text-anchor="end" fill="#000" font-weight="bold" stroke="#000" stroke-width="0.16">Canalização</text>
<line x1="643.3" y1="114.9" x2="648.6" y2="114.9" stroke="#000" stroke-width="0.8"/>
<line x1="648.6" y1="114.9" x2="676" y2="120.3" stroke="#333" stroke-width="0.45"/>
<line x1="624.9" y1="59.8" x2="624.9" y2="205" stroke="#999" stroke-width="0.4" stroke-dasharray="0.7 0.5"/>
<line x1="624.9" y1="59.8" x2="655" y2="59.8" stroke="#999" stroke-width="0.4" stroke-dasharray="0.7 0.5"/>
<line x1="624.9" y1="205" x2="655.5" y2="205" stroke="#999" stroke-width="0.4" stroke-dasharray="0.7 0.5"/>
<text x="627.9" y="132" font-size="3.3" text-anchor="middle" fill="#000" font-weight="bold" transform="rotate(-90 627.9 132)" dominant-baseline="central" stroke="#000" stroke-width="0.16">367,922</text>
<text x="726.4" y="140.6" font-size="3.3" text-anchor="middle" fill="#000" font-weight="bold" transform="rotate(-90 726.4 140.6)" dominant-baseline="central" stroke="#000" stroke-width="0.16">367,916</text>
<line x1="643" y1="201" x2="627.8" y2="248.1" stroke="#444" stroke-width="0.45"/>
<line x1="643" y1="201" x2="655.7" y2="205.4" stroke="#666" stroke-width="0.4"/>
<line x1="627.8" y1="248.1" x2="640" y2="251.7" stroke="#666" stroke-width="0.4"/>
<text x="633.4" y="223.6" font-size="3.8" text-anchor="middle" fill="#000" font-weight="bold" transform="rotate(-72 633.4 223.6)" dominant-baseline="central" stroke="#000" stroke-width="0.16">76,95</text>
<text x="683.3" y="253.5" font-size="4" text-anchor="middle" fill="#000" font-weight="bold" stroke="#000" stroke-width="0.16">139,01</text>
<text x="663" y="259.2" font-size="3.4" text-anchor="middle" fill="#2a3bd8" font-weight="bold" stroke="#2a3bd8" stroke-width="0.16">26,60</text>
<circle cx="669.2" cy="268.6" r="3.7" fill="#fff" stroke="#777" stroke-width="0.5"/>
<text x="669.2" y="269.8" font-size="3.2" text-anchor="middle" fill="#000" font-weight="bold" stroke="#000" stroke-width="0.16">3</text>
<line x1="673.4000000000001" y1="269.25" x2="729.7" y2="269.25" stroke="#000" stroke-width="1.0"/>
<text x="729.7" y="267.6" font-size="3.5" text-anchor="end" fill="#000" font-weight="bold" stroke="#000" stroke-width="0.3">Implantação</text>
<clipPath id="cph"><rect x="620" y="290" width="115.79999999999995" height="113.5"/></clipPath>
<clipPath id="cfo"><path d="M654 302 L664 298.5 L677 300 L678.5 319.5 L693 345 L706 352 L714 362 L716 371 L690 375 L650 377.5 L654 362 L657.5 349 L654.5 330 Z"/></clipPath>
<g clip-path="url(#cph)">
<rect x="620" y="290" width="115.79999999999995" height="113.5" fill="#6b635a" stroke="none" stroke-width="0"/>
<g filter="url(#b3)">
<path d="M671.3 340.3l4.7 -1.7l0.9 2.4l-4.7 1.7z" fill="#a9a39c"/>
<path d="M712.7 332.5l3.6 1.7l-0.8 1.8l-3.6 -1.7z" fill="#3f4f33"/>
<path d="M634.7 338.4l4.4 2.0l-1.2 2.6l-4.4 -2.0z" fill="#59524c"/>
<path d="M695.0 345.6l2.2 -1.2l0.8 1.4l-2.2 1.2z" fill="#d08a5c"/>
<path d="M622.2 370.2l3.8 1.0l-0.8 3.0l-3.8 -1.0z" fill="#59524c"/>
<path d="M687.6 306.3l2.4 -1.3l1.0 1.9l-2.4 1.3z" fill="#b86a48"/>
<path d="M671.9 314.0l4.6 -2.4l1.7 3.2l-4.6 2.4z" fill="#e6e2da"/>
<path d="M655.1 309.5l2.6 -1.4l0.8 1.5l-2.6 1.4z" fill="#4a5a3c"/>
<path d="M630.7 315.2l2.0 -1.0l0.8 1.4l-2.0 1.0z" fill="#8f8a84"/>
<path d="M642.7 373.1l3.2 1.5l-1.5 3.2l-3.2 -1.5z" fill="#2b3825"/>
<path d="M626.6 346.9l4.0 -2.1l1.0 1.9l-4.0 2.1z" fill="#3f4f33"/>
<path d="M657.2 378.1l4.2 -1.5l0.6 1.7l-4.2 1.5z" fill="#c77248"/>
<path d="M619.3 331.5l3.3 -1.2l1.0 2.8l-3.3 1.2z" fill="#59524c"/>
<path d="M677.9 380.1l4.0 1.9l-1.0 2.2l-4.0 -1.9z" fill="#c77248"/>
<path d="M664.5 380.6l1.9 0.5l-0.9 3.2l-1.9 -0.5z" fill="#c9794f"/>
<path d="M642.8 324.9l4.2 -2.2l1.4 2.5l-4.2 2.2z" fill="#d08a5c"/>
<path d="M734.5 307.9l2.7 0.7l-0.8 3.0l-2.7 -0.7z" fill="#3f4f33"/>
<path d="M663.5 294.9l2.4 -1.3l1.3 2.5l-2.4 1.3z" fill="#2e3c27"/>
<path d="M661.8 330.4l4.8 -1.7l0.9 2.4l-4.8 1.7z" fill="#4a5a3c"/>
<path d="M639.5 302.4l4.6 -1.7l1.1 3.0l-4.6 1.7z" fill="#8f8a84"/>
<path d="M636.7 346.8l3.4 1.6l-1.3 2.7l-3.4 -1.6z" fill="#b5a590"/>
<path d="M689.1 327.4l2.3 0.6l-0.4 1.6l-2.3 -0.6z" fill="#c4beb6"/>
<path d="M705.2 324.6l3.0 1.4l-1.4 3.1l-3.0 -1.4z" fill="#3f4f33"/>
<path d="M679.3 374.9l4.6 2.2l-0.8 1.7l-4.6 -2.2z" fill="#4d4842"/>
<path d="M695.0 345.6l2.1 -0.8l0.7 1.9l-2.1 0.8z" fill="#c9794f"/>
<path d="M626.1 326.5l2.7 0.7l-0.4 1.6l-2.7 -0.7z" fill="#2e3c27"/>
<path d="M680.6 379.0l2.1 1.0l-0.8 1.7l-2.1 -1.0z" fill="#33422b"/>
<path d="M695.4 352.6l3.4 -1.8l0.9 1.7l-3.4 1.8z" fill="#c9794f"/>
<path d="M673.9 321.4l2.6 -1.4l0.8 1.5l-2.6 1.4z" fill="#b5a590"/>
<path d="M625.9 317.1l2.2 1.0l-0.7 1.6l-2.2 -1.0z" fill="#4d4842"/>
<path d="M661.3 292.2l4.7 -1.7l1.1 2.9l-4.7 1.7z" fill="#33422b"/>
<path d="M659.4 352.1l4.4 2.1l-1.4 3.0l-4.4 -2.1z" fill="#c9794f"/>
<path d="M719.7 341.6l3.5 -1.9l1.1 2.1l-3.5 1.9z" fill="#b86a48"/>
<path d="M627.4 347.8l5.0 1.3l-0.9 3.2l-5.0 -1.3z" fill="#4a5a3c"/>
<path d="M728.1 352.9l3.1 -1.6l1.2 2.2l-3.1 1.6z" fill="#3a4a30"/>
<path d="M706.4 290.8l3.7 -1.3l0.9 2.4l-3.7 1.3z" fill="#c77248"/>
<path d="M676.6 345.5l4.4 -2.3l1.0 1.9l-4.4 2.3z" fill="#2e3c27"/>
<path d="M653.5 351.4l2.6 0.7l-0.5 1.9l-2.6 -0.7z" fill="#59524c"/>
<path d="M676.7 310.6l3.0 1.4l-0.9 1.9l-3.0 -1.4z" fill="#8f8a84"/>
<path d="M721.7 323.9l3.6 -1.3l0.8 2.1l-3.6 1.3z" fill="#cf7d52"/>
<path d="M676.5 366.3l4.6 1.2l-0.8 2.9l-4.6 -1.2z" fill="#a9a39c"/>
<path d="M631.3 332.1l4.5 2.1l-1.4 3.0l-4.5 -2.1z" fill="#3a4a30"/>
<path d="M676.2 317.5l4.2 2.0l-1.5 3.2l-4.2 -2.0z" fill="#33422b"/>
<path d="M626.8 290.9l4.6 1.2l-0.4 1.6l-4.6 -1.2z" fill="#2e3c27"/>
<path d="M654.4 362.0l1.9 0.9l-0.8 1.7l-1.9 -0.9z" fill="#8f8a84"/>
<path d="M620.9 365.6l2.4 -1.3l0.9 1.7l-2.4 1.3z" fill="#c77248"/>
<path d="M670.6 346.9l3.6 -1.9l1.5 2.8l-3.6 1.9z" fill="#8f8a84"/>
<path d="M641.5 332.4l2.3 1.1l-0.7 1.5l-2.3 -1.1z" fill="#4d4842"/>
<path d="M702.1 304.7l2.7 -1.0l0.8 2.2l-2.7 1.0z" fill="#4a5a3c"/>
<path d="M718.0 353.4l2.5 1.1l-1.0 2.2l-2.5 -1.1z" fill="#cf7d52"/>
<path d="M671.1 306.4l4.7 1.3l-0.4 1.6l-4.7 -1.3z" fill="#59524c"/>
<path d="M656.5 379.8l2.0 -1.1l1.6 2.9l-2.0 1.1z" fill="#8f8a84"/>
<path d="M646.5 324.5l2.2 0.6l-0.6 2.1l-2.2 -0.6z" fill="#e6e2da"/>
<path d="M725.2 368.0l2.8 1.3l-0.7 1.6l-2.8 -1.3z" fill="#33422b"/>
<path d="M682.8 359.8l3.1 -1.7l0.8 1.5l-3.1 1.7z" fill="#2b3825"/>
<path d="M712.2 304.2l2.9 -1.1l1.1 3.0l-2.9 1.1z" fill="#b5a590"/>
<path d="M635.5 336.3l3.9 1.8l-1.4 3.0l-3.9 -1.8z" fill="#b5a590"/>
<path d="M686.2 352.4l4.3 1.1l-0.6 2.4l-4.3 -1.1z" fill="#4d4842"/>
<path d="M693.3 336.9l4.5 1.2l-0.7 2.6l-4.5 -1.2z" fill="#4a5a3c"/>
<path d="M730.5 369.4l3.7 -1.4l0.8 2.1l-3.7 1.4z" fill="#4d4842"/>
<path d="M679.8 341.6l2.3 -1.2l1.3 2.4l-2.3 1.2z" fill="#4a5a3c"/>
<path d="M621.3 378.6l3.2 -1.7l1.1 2.1l-3.2 1.7z" fill="#b5a590"/>
<path d="M629.0 303.6l4.5 2.1l-1.1 2.3l-4.5 -2.1z" fill="#e6e2da"/>
<path d="M647.0 334.1l2.8 1.3l-1.4 3.1l-2.8 -1.3z" fill="#3a4a30"/>
<path d="M655.4 305.9l3.7 -1.4l1.2 3.2l-3.7 1.4z" fill="#c9794f"/>
<path d="M622.2 302.5l2.0 0.5l-0.6 2.1l-2.0 -0.5z" fill="#c4beb6"/>
<path d="M691.0 297.8l4.2 1.1l-0.5 1.8l-4.2 -1.1z" fill="#8f8a84"/>
<path d="M700.6 370.2l1.9 -0.7l1.0 2.7l-1.9 0.7z" fill="#4d4842"/>
<path d="M642.1 347.0l3.8 -1.4l0.9 2.5l-3.8 1.4z" fill="#c4beb6"/>
<path d="M725.8 346.7l3.0 0.8l-0.5 1.9l-3.0 -0.8z" fill="#8f8a84"/>
<path d="M643.7 381.3l4.5 -1.7l0.6 1.8l-4.5 1.7z" fill="#cf7d52"/>
<path d="M703.6 312.3l2.1 1.0l-1.4 3.0l-2.1 -1.0z" fill="#4d4842"/>
<path d="M711.1 299.8l2.9 -1.5l1.4 2.6l-2.9 1.5z" fill="#c77248"/>
<path d="M641.7 351.8l4.3 -2.3l1.7 3.1l-4.3 2.3z" fill="#3a4a30"/>
<path d="M692.8 320.1l4.6 -2.4l1.5 2.9l-4.6 2.4z" fill="#b5a590"/>
<path d="M630.5 291.5l3.4 1.6l-1.1 2.4l-3.4 -1.6z" fill="#cf7d52"/>
<path d="M640.3 298.7l2.5 0.7l-0.5 1.9l-2.5 -0.7z" fill="#c77248"/>
<path d="M686.3 300.6l3.7 -2.0l0.8 1.5l-3.7 2.0z" fill="#33422b"/>
<path d="M664.0 327.9l3.0 0.8l-0.5 2.0l-3.0 -0.8z" fill="#c9794f"/>
<path d="M692.7 291.8l2.6 0.7l-0.6 2.3l-2.6 -0.7z" fill="#2e3c27"/>
<path d="M665.7 306.2l2.2 -1.2l1.2 2.3l-2.2 1.2z" fill="#33422b"/>
<path d="M723.2 363.0l3.9 1.8l-1.4 3.0l-3.9 -1.8z" fill="#8f8a84"/>
<path d="M677.4 379.9l4.0 -2.1l1.0 1.9l-4.0 2.1z" fill="#a9a39c"/>
<path d="M714.0 325.9l4.7 1.3l-0.9 3.2l-4.7 -1.3z" fill="#2b3825"/>
<path d="M708.1 325.9l4.2 1.1l-0.5 1.7l-4.2 -1.1z" fill="#3f4f33"/>
<path d="M673.2 289.0l2.8 -1.5l1.4 2.5l-2.8 1.5z" fill="#c4beb6"/>
<path d="M650.2 377.9l2.7 1.2l-0.9 1.8l-2.7 -1.2z" fill="#a9a39c"/>
<path d="M680.8 324.4l4.6 -2.4l1.4 2.5l-4.6 2.4z" fill="#4a5a3c"/>
<path d="M733.5 290.1l3.8 1.0l-0.8 3.0l-3.8 -1.0z" fill="#59524c"/>
<path d="M665.3 292.7l2.3 -1.2l1.1 2.1l-2.3 1.2z" fill="#e6e2da"/>
<path d="M647.6 372.7l3.3 -1.8l1.2 2.3l-3.3 1.8z" fill="#59524c"/>
<path d="M713.4 295.1l3.5 -1.8l1.5 2.8l-3.5 1.8z" fill="#4a5a3c"/>
<path d="M727.6 303.0l3.2 1.5l-0.8 1.8l-3.2 -1.5z" fill="#4d4842"/>
<path d="M690.0 293.5l4.6 2.1l-1.0 2.2l-4.6 -2.1z" fill="#3f4f33"/>
<path d="M661.1 314.7l4.0 1.1l-0.7 2.6l-4.0 -1.1z" fill="#3f4f33"/>
<path d="M621.2 360.2l3.5 1.6l-1.2 2.6l-3.5 -1.6z" fill="#4a5a3c"/>
<path d="M624.2 317.5l3.2 0.8l-0.7 2.7l-3.2 -0.8z" fill="#b86a48"/>
<path d="M712.0 308.9l4.0 -1.5l0.7 2.0l-4.0 1.5z" fill="#d08a5c"/>
<path d="M679.7 375.6l4.1 -1.5l0.9 2.4l-4.1 1.5z" fill="#c77248"/>
<path d="M623.9 327.0l2.3 0.6l-0.9 3.2l-2.3 -0.6z" fill="#3a4a30"/>
<path d="M636.2 322.0l2.4 0.6l-0.6 2.4l-2.4 -0.6z" fill="#2b3825"/>
<path d="M660.9 357.6l4.5 1.2l-0.5 1.8l-4.5 -1.2z" fill="#cf7d52"/>
<path d="M646.1 298.6l4.7 1.3l-0.8 3.1l-4.7 -1.3z" fill="#e6e2da"/>
<path d="M650.0 352.1l3.7 1.0l-0.7 2.7l-3.7 -1.0z" fill="#c4beb6"/>
<path d="M640.4 311.3l4.5 -2.4l1.6 3.0l-4.5 2.4z" fill="#d08a5c"/>
<path d="M619.1 312.3l2.0 -0.7l0.6 1.6l-2.0 0.7z" fill="#4d4842"/>
<path d="M650.8 358.7l4.6 -1.7l0.7 1.8l-4.6 1.7z" fill="#2e3c27"/>
<path d="M675.0 321.1l2.9 -1.1l0.9 2.4l-2.9 1.1z" fill="#b86a48"/>
<path d="M712.5 329.8l4.4 -1.6l1.1 3.1l-4.4 1.6z" fill="#59524c"/>
<path d="M668.0 312.1l4.4 1.2l-0.6 2.3l-4.4 -1.2z" fill="#3f4f33"/>
<path d="M682.6 357.8l4.8 1.3l-0.6 2.4l-4.8 -1.3z" fill="#c77248"/>
<path d="M672.4 318.3l3.4 1.6l-1.0 2.2l-3.4 -1.6z" fill="#59524c"/>
<path d="M653.2 360.5l2.0 -1.1l1.0 1.8l-2.0 1.1z" fill="#3f4f33"/>
<path d="M676.3 359.4l2.9 -1.0l1.2 3.2l-2.9 1.0z" fill="#2e3c27"/>
<path d="M695.4 318.6l4.4 2.1l-0.9 2.0l-4.4 -2.1z" fill="#e6e2da"/>
<path d="M669.6 363.1l2.7 1.3l-0.9 2.0l-2.7 -1.3z" fill="#3a4a30"/>
<path d="M647.3 321.8l2.9 1.3l-1.0 2.1l-2.9 -1.3z" fill="#4a5a3c"/>
<path d="M711.8 357.1l3.0 -1.1l0.8 2.2l-3.0 1.1z" fill="#a9a39c"/>
<path d="M638.8 359.0l4.3 -2.3l1.0 1.9l-4.3 2.3z" fill="#c4beb6"/>
<path d="M678.7 338.9l3.5 1.6l-1.5 3.2l-3.5 -1.6z" fill="#b86a48"/>
<path d="M686.6 316.6l3.6 1.0l-0.6 2.2l-3.6 -1.0z" fill="#c77248"/>
<path d="M723.9 295.9l3.7 1.7l-0.8 1.7l-3.7 -1.7z" fill="#c4beb6"/>
<path d="M701.9 333.7l4.4 2.1l-1.0 2.1l-4.4 -2.1z" fill="#4a5a3c"/>
<path d="M659.3 363.5l2.8 1.3l-0.8 1.7l-2.8 -1.3z" fill="#4d4842"/>
<path d="M712.8 294.8l3.8 1.0l-0.4 1.6l-3.8 -1.0z" fill="#c9794f"/>
<path d="M712.9 366.0l4.3 -2.3l1.7 3.1l-4.3 2.3z" fill="#3a4a30"/>
<path d="M660.6 288.9l2.2 -0.8l1.2 3.2l-2.2 0.8z" fill="#c4beb6"/>
<path d="M705.3 380.7l3.0 -1.1l0.7 1.8l-3.0 1.1z" fill="#4a5a3c"/>
<path d="M668.1 315.3l4.9 1.3l-0.4 1.7l-4.9 -1.3z" fill="#c77248"/>
<path d="M653.8 302.5l4.5 2.1l-1.4 3.1l-4.5 -2.1z" fill="#c9794f"/>
<path d="M686.8 373.0l2.0 -0.7l0.6 1.7l-2.0 0.7z" fill="#2e3c27"/>
<path d="M643.6 310.0l4.0 -1.5l1.0 2.6l-4.0 1.5z" fill="#59524c"/>
<path d="M639.8 314.3l2.5 0.7l-0.8 3.0l-2.5 -0.7z" fill="#4d4842"/>
<path d="M729.0 339.5l4.3 2.0l-1.1 2.3l-4.3 -2.0z" fill="#33422b"/>
<path d="M695.8 360.2l2.1 1.0l-1.4 3.0l-2.1 -1.0z" fill="#d08a5c"/>
<path d="M643.6 300.6l4.4 1.2l-0.9 3.4l-4.4 -1.2z" fill="#d08a5c"/>
<path d="M695.5 310.2l2.0 0.5l-0.7 2.5l-2.0 -0.5z" fill="#59524c"/>
<path d="M711.9 354.7l3.7 -1.3l0.7 1.8l-3.7 1.3z" fill="#33422b"/>
<path d="M635.1 372.9l4.4 1.2l-0.5 1.8l-4.4 -1.2z" fill="#3a4a30"/>
<path d="M681.0 302.1l4.2 -1.5l0.5 1.5l-4.2 1.5z" fill="#cf7d52"/>
<path d="M627.7 313.2l3.9 1.8l-0.8 1.6l-3.9 -1.8z" fill="#59524c"/>
<path d="M627.8 358.0l3.3 -1.8l1.2 2.3l-3.3 1.8z" fill="#8f8a84"/>
<path d="M667.1 373.7l2.2 -0.8l1.1 3.1l-2.2 0.8z" fill="#d08a5c"/>
<path d="M682.0 337.2l2.4 0.6l-0.8 3.2l-2.4 -0.6z" fill="#33422b"/>
<path d="M654.6 295.1l2.6 -1.4l1.2 2.2l-2.6 1.4z" fill="#2e3c27"/>
<path d="M626.8 301.1l3.7 -1.9l1.4 2.6l-3.7 1.9z" fill="#59524c"/>
<path d="M619.5 323.3l3.8 -2.0l1.0 1.8l-3.8 2.0z" fill="#59524c"/>
<path d="M708.9 368.0l4.4 -1.6l1.0 2.9l-4.4 1.6z" fill="#3f4f33"/>
<path d="M692.0 375.7l4.0 1.9l-1.5 3.2l-4.0 -1.9z" fill="#4d4842"/>
<path d="M696.5 312.0l2.5 0.7l-0.8 3.0l-2.5 -0.7z" fill="#3f4f33"/>
<path d="M729.3 340.6l3.9 1.8l-1.0 2.1l-3.9 -1.8z" fill="#b86a48"/>
<path d="M630.0 346.1l2.3 -0.8l1.0 2.7l-2.3 0.8z" fill="#a9a39c"/>
<path d="M640.8 291.4l3.1 -1.6l1.4 2.7l-3.1 1.6z" fill="#c4beb6"/>
<path d="M621.8 380.3l3.3 0.9l-0.8 3.0l-3.3 -0.9z" fill="#2b3825"/>
<path d="M727.2 301.0l2.4 1.1l-0.8 1.7l-2.4 -1.1z" fill="#b5a590"/>
<path d="M657.0 326.5l2.0 0.5l-0.6 2.3l-2.0 -0.5z" fill="#c4beb6"/>
<path d="M695.8 344.9l2.0 0.5l-0.6 2.2l-2.0 -0.5z" fill="#3f4f33"/>
<path d="M694.7 297.9l3.1 0.8l-0.7 2.5l-3.1 -0.8z" fill="#c77248"/>
<path d="M690.0 302.8l4.2 -1.5l1.2 3.2l-4.2 1.5z" fill="#2e3c27"/>
<path d="M690.1 336.0l3.6 -1.3l0.7 1.9l-3.6 1.3z" fill="#c9794f"/>
<path d="M691.9 306.5l2.1 1.0l-0.9 1.9l-2.1 -1.0z" fill="#33422b"/>
<path d="M656.8 374.9l2.8 -1.5l1.2 2.2l-2.8 1.5z" fill="#59524c"/>
<path d="M732.7 300.7l4.3 -2.3l1.3 2.4l-4.3 2.3z" fill="#4d4842"/>
<path d="M725.8 303.8l4.2 1.1l-0.9 3.3l-4.2 -1.1z" fill="#cf7d52"/>
<path d="M632.4 365.1l2.7 -1.0l1.2 3.2l-2.7 1.0z" fill="#2e3c27"/>
<path d="M715.9 305.4l3.3 -1.8l0.8 1.5l-3.3 1.8z" fill="#4a5a3c"/>
<path d="M639.2 380.3l4.8 1.3l-0.8 2.8l-4.8 -1.3z" fill="#4a5a3c"/>
<path d="M690.5 347.9l4.0 1.9l-0.8 1.7l-4.0 -1.9z" fill="#59524c"/>
<path d="M621.9 337.4l2.3 0.6l-0.6 2.3l-2.3 -0.6z" fill="#3a4a30"/>
<path d="M633.5 310.8l4.4 -2.3l0.8 1.5l-4.4 2.3z" fill="#cf7d52"/>
<path d="M665.5 334.5l2.1 1.0l-1.0 2.1l-2.1 -1.0z" fill="#3f4f33"/>
<path d="M675.2 381.0l4.2 2.0l-1.4 3.0l-4.2 -2.0z" fill="#2b3825"/>
<path d="M631.8 298.7l4.5 2.1l-1.0 2.0l-4.5 -2.1z" fill="#2b3825"/>
<path d="M724.5 318.0l2.0 0.9l-1.3 2.8l-2.0 -0.9z" fill="#4a5a3c"/>
<path d="M688.4 358.3l2.6 -1.4l1.3 2.5l-2.6 1.4z" fill="#c4beb6"/>
<path d="M632.7 329.8l3.2 -1.7l1.1 2.1l-3.2 1.7z" fill="#b5a590"/>
<path d="M699.9 337.2l2.5 1.2l-0.9 2.0l-2.5 -1.2z" fill="#c4beb6"/>
<path d="M721.6 381.4l4.2 1.1l-0.9 3.2l-4.2 -1.1z" fill="#4d4842"/>
<path d="M667.6 363.3l2.4 -1.3l1.5 2.7l-2.4 1.3z" fill="#b86a48"/>
<path d="M629.6 362.1l2.2 1.0l-1.1 2.4l-2.2 -1.0z" fill="#c9794f"/>
<path d="M652.9 356.1l1.9 0.9l-0.8 1.8l-1.9 -0.9z" fill="#59524c"/>
<path d="M714.1 325.1l2.8 -1.5l1.3 2.4l-2.8 1.5z" fill="#3f4f33"/>
<path d="M621.7 372.0l2.7 1.3l-1.1 2.4l-2.7 -1.3z" fill="#8f8a84"/>
<path d="M641.9 368.3l4.1 1.1l-0.4 1.7l-4.1 -1.1z" fill="#2e3c27"/>
<path d="M723.9 289.5l3.8 -1.4l1.0 2.8l-3.8 1.4z" fill="#4d4842"/>
<path d="M692.5 305.9l4.3 -2.3l0.8 1.5l-4.3 2.3z" fill="#3f4f33"/>
<path d="M703.5 317.3l4.6 -1.7l1.1 3.1l-4.6 1.7z" fill="#33422b"/>
<path d="M700.0 375.7l3.2 -1.2l0.6 1.7l-3.2 1.2z" fill="#3f4f33"/>
<path d="M632.2 352.6l2.8 0.7l-0.8 2.9l-2.8 -0.7z" fill="#e6e2da"/>
<path d="M661.9 349.9l4.5 -1.7l1.0 2.6l-4.5 1.7z" fill="#3f4f33"/>
<path d="M723.5 304.9l2.4 -1.3l0.9 1.6l-2.4 1.3z" fill="#59524c"/>
<path d="M733.8 329.2l3.3 -1.7l1.2 2.4l-3.3 1.7z" fill="#c9794f"/>
<path d="M688.6 314.6l2.5 -1.3l1.5 2.8l-2.5 1.3z" fill="#a9a39c"/>
<path d="M651.6 358.7l2.5 -1.3l1.0 1.9l-2.5 1.3z" fill="#a9a39c"/>
<path d="M711.1 302.1l4.4 2.1l-1.2 2.6l-4.4 -2.1z" fill="#c9794f"/>
<path d="M727.5 334.7l2.5 0.7l-0.7 2.6l-2.5 -0.7z" fill="#33422b"/>
<path d="M695.5 361.2l3.4 -1.2l0.9 2.5l-3.4 1.2z" fill="#a9a39c"/>
<path d="M631.2 328.7l4.0 1.1l-0.7 2.6l-4.0 -1.1z" fill="#c4beb6"/>
<path d="M648.6 338.9l4.6 1.2l-0.7 2.7l-4.6 -1.2z" fill="#d08a5c"/>
<path d="M641.9 378.8l2.0 -0.7l0.9 2.3l-2.0 0.7z" fill="#33422b"/>
<path d="M635.9 289.7l3.3 1.5l-1.0 2.2l-3.3 -1.5z" fill="#e6e2da"/>
<path d="M718.9 290.9l2.2 -0.8l0.7 1.8l-2.2 0.8z" fill="#cf7d52"/>
<path d="M624.4 327.8l4.1 1.1l-0.8 3.1l-4.1 -1.1z" fill="#b5a590"/>
<path d="M628.4 364.7l2.4 -0.9l0.7 2.0l-2.4 0.9z" fill="#b5a590"/>
<path d="M699.4 365.7l4.1 1.9l-0.7 1.6l-4.1 -1.9z" fill="#59524c"/>
<path d="M660.9 308.2l4.6 2.2l-0.7 1.5l-4.6 -2.2z" fill="#cf7d52"/>
<path d="M635.0 330.6l4.1 -1.5l0.6 1.6l-4.1 1.5z" fill="#2b3825"/>
<path d="M722.9 301.2l3.0 1.4l-0.9 2.0l-3.0 -1.4z" fill="#b86a48"/>
<path d="M732.5 351.6l4.0 -1.5l1.2 3.3l-4.0 1.5z" fill="#3f4f33"/>
<path d="M647.8 339.6l2.6 -0.9l0.9 2.4l-2.6 0.9z" fill="#2e3c27"/>
<path d="M654.4 376.5l4.7 -1.7l0.7 1.9l-4.7 1.7z" fill="#4a5a3c"/>
<path d="M686.9 381.0l4.1 -1.5l0.9 2.6l-4.1 1.5z" fill="#59524c"/>
<path d="M719.3 375.5l2.4 -1.3l1.1 2.1l-2.4 1.3z" fill="#8f8a84"/>
<path d="M667.3 311.0l4.1 1.9l-1.4 2.9l-4.1 -1.9z" fill="#8f8a84"/>
<path d="M665.1 343.5l4.0 1.9l-1.1 2.3l-4.0 -1.9z" fill="#a9a39c"/>
<path d="M719.6 307.1l3.1 0.8l-0.5 1.7l-3.1 -0.8z" fill="#2e3c27"/>
<path d="M729.8 346.1l3.3 1.5l-1.3 2.8l-3.3 -1.5z" fill="#8f8a84"/>
<path d="M649.6 321.8l2.4 0.6l-0.9 3.4l-2.4 -0.6z" fill="#cf7d52"/>
<path d="M708.2 355.6l4.7 1.3l-0.4 1.6l-4.7 -1.3z" fill="#4a5a3c"/>
<path d="M671.0 367.9l2.8 -1.5l1.0 1.9l-2.8 1.5z" fill="#3f4f33"/>
<path d="M664.4 310.3l2.0 -0.7l0.7 1.8l-2.0 0.7z" fill="#d08a5c"/>
<path d="M642.6 326.4l3.4 0.9l-0.8 2.9l-3.4 -0.9z" fill="#33422b"/>
<path d="M703.5 350.3l2.4 0.6l-0.5 1.9l-2.4 -0.6z" fill="#4d4842"/>
<path d="M702.0 325.9l3.0 -1.1l1.1 3.1l-3.0 1.1z" fill="#c77248"/>
<path d="M652.4 320.3l2.4 -1.3l0.8 1.5l-2.4 1.3z" fill="#b5a590"/>
<path d="M684.7 363.6l4.5 -2.4l1.0 1.9l-4.5 2.4z" fill="#8f8a84"/>
<path d="M683.7 321.0l2.3 0.6l-0.8 3.0l-2.3 -0.6z" fill="#c4beb6"/>
<path d="M710.3 312.3l4.1 1.9l-0.8 1.7l-4.1 -1.9z" fill="#d08a5c"/>
<path d="M675.7 375.0l2.7 -1.0l1.0 2.8l-2.7 1.0z" fill="#a9a39c"/>
<path d="M727.0 306.9l4.2 -1.5l0.8 2.2l-4.2 1.5z" fill="#3a4a30"/>
<path d="M629.0 320.0l3.2 0.9l-0.5 1.8l-3.2 -0.9z" fill="#4d4842"/>
<path d="M654.3 373.5l4.3 -2.3l0.9 1.6l-4.3 2.3z" fill="#4a5a3c"/>
<path d="M650.0 323.3l4.5 1.2l-0.6 2.1l-4.5 -1.2z" fill="#e6e2da"/>
<path d="M626.5 291.3l2.9 0.8l-0.6 2.3l-2.9 -0.8z" fill="#e6e2da"/>
<path d="M714.0 370.9l3.9 1.0l-0.6 2.3l-3.9 -1.0z" fill="#2e3c27"/>
<path d="M621.7 354.1l2.4 -1.3l0.8 1.5l-2.4 1.3z" fill="#4d4842"/>
<path d="M666.4 326.9l2.6 1.2l-1.4 3.0l-2.6 -1.2z" fill="#4a5a3c"/>
<path d="M731.8 324.0l4.4 1.2l-0.8 2.9l-4.4 -1.2z" fill="#3f4f33"/>
<path d="M676.3 332.2l2.0 0.5l-0.7 2.7l-2.0 -0.5z" fill="#c4beb6"/>
<path d="M648.4 308.6l3.3 1.5l-1.5 3.1l-3.3 -1.5z" fill="#c9794f"/>
<path d="M646.2 334.2l3.9 1.1l-0.7 2.6l-3.9 -1.1z" fill="#e6e2da"/>
<path d="M658.8 370.9l2.7 1.3l-1.3 2.7l-2.7 -1.3z" fill="#a9a39c"/>
<path d="M731.5 365.1l2.3 1.1l-1.2 2.6l-2.3 -1.1z" fill="#3f4f33"/>
<path d="M661.5 314.7l4.1 -1.5l0.9 2.5l-4.1 1.5z" fill="#c4beb6"/>
<path d="M660.7 354.0l4.4 -2.3l1.4 2.7l-4.4 2.3z" fill="#b86a48"/>
<path d="M714.3 370.8l2.7 1.3l-1.4 3.0l-2.7 -1.3z" fill="#d08a5c"/>
<path d="M637.2 369.0l4.6 1.2l-0.4 1.6l-4.6 -1.2z" fill="#4a5a3c"/>
<path d="M677.8 362.5l3.1 0.8l-0.8 2.9l-3.1 -0.8z" fill="#2e3c27"/>
<path d="M702.3 318.6l2.9 -1.0l1.1 2.9l-2.9 1.0z" fill="#2b3825"/>
<path d="M693.5 299.7l4.1 -1.5l0.7 2.0l-4.1 1.5z" fill="#cf7d52"/>
<path d="M641.7 346.1l2.6 -1.4l1.4 2.6l-2.6 1.4z" fill="#b5a590"/>
<path d="M687.0 376.0l4.9 1.3l-0.5 1.8l-4.9 -1.3z" fill="#2b3825"/>
<path d="M647.7 350.2l3.0 -1.1l1.0 2.8l-3.0 1.1z" fill="#d08a5c"/>
<path d="M636.5 381.3l4.6 1.2l-0.5 1.9l-4.6 -1.2z" fill="#4d4842"/>
<path d="M735.0 299.2l2.8 1.3l-0.7 1.5l-2.8 -1.3z" fill="#a9a39c"/>
<path d="M662.0 316.9l4.4 1.2l-0.8 3.2l-4.4 -1.2z" fill="#c4beb6"/>
<path d="M664.1 345.8l4.0 1.9l-1.5 3.2l-4.0 -1.9z" fill="#8f8a84"/>
<path d="M682.3 362.8l2.2 -1.2l0.9 1.7l-2.2 1.2z" fill="#4d4842"/>
<path d="M728.0 311.5l3.4 0.9l-0.5 1.8l-3.4 -0.9z" fill="#c9794f"/>
<path d="M649.8 341.2l2.8 0.7l-0.6 2.3l-2.8 -0.7z" fill="#c4beb6"/>
<path d="M627.5 306.8l3.5 -1.3l0.9 2.6l-3.5 1.3z" fill="#b86a48"/>
<path d="M618.8 359.1l4.0 1.1l-0.4 1.6l-4.0 -1.1z" fill="#b5a590"/>
<path d="M634.5 361.8l4.6 -2.4l1.1 2.1l-4.6 2.4z" fill="#2b3825"/>
<path d="M659.4 340.3l3.7 1.0l-0.5 2.0l-3.7 -1.0z" fill="#e6e2da"/>
<path d="M640.2 315.2l2.5 -1.3l1.5 2.8l-2.5 1.3z" fill="#a9a39c"/>
<path d="M719.0 376.3l3.6 1.0l-0.8 2.8l-3.6 -1.0z" fill="#2e3c27"/>
<path d="M620.8 340.0l2.1 -0.8l0.9 2.4l-2.1 0.8z" fill="#b86a48"/>
<path d="M731.0 289.0l3.3 1.6l-1.4 2.9l-3.3 -1.6z" fill="#4a5a3c"/>
<path d="M654.3 337.7l3.6 -1.9l1.5 2.8l-3.6 1.9z" fill="#b5a590"/>
<path d="M665.4 353.9l2.5 -1.3l1.6 3.0l-2.5 1.3z" fill="#c9794f"/>
<path d="M685.9 309.2l3.1 0.8l-0.6 2.3l-3.1 -0.8z" fill="#2e3c27"/>
<path d="M691.8 330.1l2.9 0.8l-0.4 1.7l-2.9 -0.8z" fill="#c77248"/>
<path d="M649.2 308.0l2.4 -0.9l0.6 1.6l-2.4 0.9z" fill="#4d4842"/>
<path d="M653.9 307.3l3.0 0.8l-0.5 1.8l-3.0 -0.8z" fill="#2e3c27"/>
<path d="M639.5 290.1l2.9 -1.5l0.8 1.5l-2.9 1.5z" fill="#33422b"/>
<path d="M730.0 366.5l4.2 -1.5l0.6 1.5l-4.2 1.5z" fill="#33422b"/>
<path d="M625.8 343.1l3.5 1.6l-0.9 2.0l-3.5 -1.6z" fill="#c4beb6"/>
<path d="M676.8 361.0l4.3 -2.3l1.5 2.8l-4.3 2.3z" fill="#4a5a3c"/>
<path d="M729.6 318.1l2.3 -1.2l1.1 2.0l-2.3 1.2z" fill="#cf7d52"/>
<path d="M704.0 349.9l4.7 1.3l-0.4 1.7l-4.7 -1.3z" fill="#59524c"/>
<path d="M718.9 346.8l3.2 -1.7l1.3 2.4l-3.2 1.7z" fill="#c77248"/>
<path d="M716.7 352.5l3.1 1.5l-1.2 2.7l-3.1 -1.5z" fill="#4a5a3c"/>
<path d="M677.1 323.1l3.3 -1.8l0.8 1.5l-3.3 1.8z" fill="#3a4a30"/>
<path d="M691.9 329.8l3.8 1.0l-0.7 2.7l-3.8 -1.0z" fill="#cf7d52"/>
<path d="M681.3 318.7l2.6 -1.0l1.0 2.7l-2.6 1.0z" fill="#b5a590"/>
<path d="M734.6 325.6l4.3 2.0l-0.8 1.7l-4.3 -2.0z" fill="#c77248"/>
<path d="M645.6 366.6l3.6 -1.9l1.6 3.1l-3.6 1.9z" fill="#c77248"/>
<path d="M678.3 380.9l2.1 0.6l-0.9 3.2l-2.1 -0.6z" fill="#e6e2da"/>
<path d="M679.0 320.6l2.4 1.1l-0.7 1.5l-2.4 -1.1z" fill="#8f8a84"/>
<path d="M675.6 377.9l2.5 1.2l-0.8 1.6l-2.5 -1.2z" fill="#b5a590"/>
<path d="M721.3 294.7l3.2 -1.7l0.8 1.5l-3.2 1.7z" fill="#cf7d52"/>
<path d="M713.6 304.7l2.9 -1.0l1.2 3.2l-2.9 1.0z" fill="#3f4f33"/>
<path d="M631.8 305.0l2.9 1.4l-1.4 3.0l-2.9 -1.4z" fill="#b5a590"/>
<path d="M626.5 380.4l2.5 -0.9l1.0 2.7l-2.5 0.9z" fill="#4d4842"/>
<path d="M696.7 328.3l2.0 0.5l-0.6 2.2l-2.0 -0.5z" fill="#e6e2da"/>
<path d="M695.5 307.5l2.5 -0.9l1.1 2.9l-2.5 0.9z" fill="#59524c"/>
<path d="M622.9 314.0l2.7 0.7l-0.6 2.2l-2.7 -0.7z" fill="#3f4f33"/>
<path d="M641.1 381.0l4.1 1.1l-0.8 3.0l-4.1 -1.1z" fill="#3f4f33"/>
<path d="M708.7 306.7l2.2 0.6l-0.6 2.1l-2.2 -0.6z" fill="#2b3825"/>
<path d="M650.9 300.5l2.2 1.0l-0.8 1.6l-2.2 -1.0z" fill="#c4beb6"/>
<path d="M676.0 299.0l2.1 -1.1l1.6 3.0l-2.1 1.1z" fill="#59524c"/>
<path d="M644.6 332.6l2.5 -0.9l0.8 2.3l-2.5 0.9z" fill="#59524c"/>
<path d="M693.4 322.3l3.0 0.8l-0.7 2.7l-3.0 -0.8z" fill="#3f4f33"/>
<path d="M696.0 289.2l3.8 1.0l-0.4 1.6l-3.8 -1.0z" fill="#cf7d52"/>
<path d="M687.9 369.0l2.9 -1.5l1.0 1.9l-2.9 1.5z" fill="#c77248"/>
<path d="M682.3 297.3l4.7 1.3l-0.5 1.7l-4.7 -1.3z" fill="#c9794f"/>
<path d="M662.1 355.6l3.7 -1.9l1.1 2.0l-3.7 1.9z" fill="#cf7d52"/>
<path d="M673.3 321.8l3.1 -1.6l1.0 2.0l-3.1 1.6z" fill="#c4beb6"/>
<path d="M733.0 380.8l2.9 -1.5l1.5 2.9l-2.9 1.5z" fill="#d08a5c"/>
<path d="M625.8 331.2l3.1 -1.1l1.0 2.7l-3.1 1.1z" fill="#3a4a30"/>
<path d="M734.6 307.6l2.9 1.3l-0.8 1.7l-2.9 -1.3z" fill="#c77248"/>
<path d="M705.4 295.8l2.4 0.7l-0.8 2.8l-2.4 -0.7z" fill="#b5a590"/>
<path d="M709.4 299.2l3.4 0.9l-0.4 1.6l-3.4 -0.9z" fill="#c9794f"/>
<path d="M630.8 326.6l3.4 -1.8l1.7 3.1l-3.4 1.8z" fill="#3f4f33"/>
<path d="M735.7 340.7l2.0 -1.0l1.0 1.8l-2.0 1.0z" fill="#3a4a30"/>
<path d="M678.3 315.5l4.1 1.9l-0.9 1.9l-4.1 -1.9z" fill="#59524c"/>
<path d="M624.4 308.3l3.1 1.5l-1.1 2.5l-3.1 -1.5z" fill="#cf7d52"/>
<path d="M718.2 297.8l4.4 -1.6l0.7 1.8l-4.4 1.6z" fill="#2b3825"/>
<path d="M690.8 378.1l3.8 -2.0l0.9 1.6l-3.8 2.0z" fill="#c4beb6"/>
<path d="M636.1 364.5l4.1 -1.5l1.0 2.8l-4.1 1.5z" fill="#3f4f33"/>
<path d="M680.6 290.7l2.1 -1.1l1.0 1.9l-2.1 1.1z" fill="#4a5a3c"/>
<path d="M667.0 295.3l2.6 1.2l-0.8 1.7l-2.6 -1.2z" fill="#33422b"/>
<path d="M723.5 307.0l4.9 -1.8l0.9 2.6l-4.9 1.8z" fill="#3a4a30"/>
<path d="M727.2 297.1l3.9 1.0l-0.6 2.1l-3.9 -1.0z" fill="#c4beb6"/>
<path d="M661.3 328.1l3.2 1.5l-1.0 2.1l-3.2 -1.5z" fill="#33422b"/>
<path d="M671.1 292.6l4.2 2.0l-0.7 1.6l-4.2 -2.0z" fill="#4d4842"/>
<path d="M656.0 364.5l3.7 -2.0l1.4 2.7l-3.7 2.0z" fill="#33422b"/>
<path d="M660.4 376.9l3.2 -1.7l1.2 2.3l-3.2 1.7z" fill="#2e3c27"/>
<path d="M665.9 378.3l1.9 -0.7l1.0 2.6l-1.9 0.7z" fill="#2e3c27"/>
<path d="M731.5 352.9l4.1 -2.2l0.9 1.8l-4.1 2.2z" fill="#33422b"/>
<path d="M639.6 299.0l3.9 -2.1l1.1 2.0l-3.9 2.1z" fill="#8f8a84"/>
<path d="M647.7 313.3l4.4 1.2l-0.6 2.4l-4.4 -1.2z" fill="#4a5a3c"/>
<path d="M628.6 341.5l2.2 -0.8l0.8 2.2l-2.2 0.8z" fill="#e6e2da"/>
<path d="M656.7 317.7l4.5 1.2l-0.8 3.1l-4.5 -1.2z" fill="#d08a5c"/>
<path d="M735.8 333.8l3.1 -1.1l0.6 1.7l-3.1 1.1z" fill="#33422b"/>
<path d="M693.2 290.1l4.4 -2.3l1.5 2.7l-4.4 2.3z" fill="#b5a590"/>
<path d="M667.3 351.5l4.5 -2.4l1.6 3.0l-4.5 2.4z" fill="#a9a39c"/>
<path d="M710.0 329.2l4.0 1.9l-1.0 2.1l-4.0 -1.9z" fill="#2b3825"/>
<path d="M712.4 329.6l4.3 -2.3l1.4 2.7l-4.3 2.3z" fill="#2e3c27"/>
<path d="M696.5 339.2l2.3 0.6l-0.5 1.8l-2.3 -0.6z" fill="#4d4842"/>
<path d="M631.4 369.2l2.2 -0.8l0.8 2.1l-2.2 0.8z" fill="#c77248"/>
<path d="M636.3 313.6l3.0 1.4l-1.4 3.1l-3.0 -1.4z" fill="#8f8a84"/>
<path d="M697.4 374.8l3.2 1.5l-1.3 2.7l-3.2 -1.5z" fill="#3a4a30"/>
<path d="M709.7 297.8l4.2 1.1l-0.5 1.9l-4.2 -1.1z" fill="#8f8a84"/>
<path d="M619.7 365.0l3.7 1.7l-1.0 2.1l-3.7 -1.7z" fill="#59524c"/>
<path d="M685.6 366.8l2.9 1.3l-1.2 2.5l-2.9 -1.3z" fill="#4a5a3c"/>
<path d="M656.6 353.2l2.5 1.2l-0.9 1.9l-2.5 -1.2z" fill="#d08a5c"/>
<path d="M648.3 294.0l4.4 -1.6l0.8 2.2l-4.4 1.6z" fill="#2b3825"/>
<path d="M725.0 294.1l2.3 1.1l-1.0 2.2l-2.3 -1.1z" fill="#4a5a3c"/>
<path d="M675.3 309.6l4.3 1.1l-0.5 1.7l-4.3 -1.1z" fill="#3a4a30"/>
<path d="M717.8 291.3l3.8 1.8l-1.2 2.5l-3.8 -1.8z" fill="#33422b"/>
<path d="M675.7 329.8l4.9 1.3l-0.6 2.2l-4.9 -1.3z" fill="#c77248"/>
<path d="M647.1 302.6l5.0 1.3l-0.9 3.2l-5.0 -1.3z" fill="#c77248"/>
<path d="M637.2 305.8l2.5 0.7l-0.9 3.5l-2.5 -0.7z" fill="#33422b"/>
<path d="M660.9 376.9l4.2 1.1l-0.6 2.1l-4.2 -1.1z" fill="#c77248"/>
<path d="M647.4 289.9l3.6 1.0l-0.5 2.0l-3.6 -1.0z" fill="#3f4f33"/>
<path d="M647.8 300.3l3.4 0.9l-0.6 2.1l-3.4 -0.9z" fill="#e6e2da"/>
<path d="M729.1 302.2l3.1 -1.1l1.1 3.0l-3.1 1.1z" fill="#b86a48"/>
<path d="M682.1 356.6l3.6 1.0l-0.8 2.8l-3.6 -1.0z" fill="#3f4f33"/>
<path d="M624.4 375.6l3.0 -1.1l1.1 3.0l-3.0 1.1z" fill="#b5a590"/>
<path d="M671.3 322.6l4.2 1.1l-0.9 3.4l-4.2 -1.1z" fill="#2e3c27"/>
<path d="M722.3 295.0l3.3 -1.8l1.3 2.4l-3.3 1.8z" fill="#3f4f33"/>
<path d="M724.2 297.5l3.7 1.0l-0.5 1.8l-3.7 -1.0z" fill="#3f4f33"/>
<path d="M659.7 301.2l4.7 -1.7l1.0 2.8l-4.7 1.7z" fill="#c9794f"/>
<path d="M666.7 301.4l4.3 -2.3l1.7 3.1l-4.3 2.3z" fill="#2b3825"/>
<path d="M680.1 305.3l3.3 1.6l-1.0 2.1l-3.3 -1.6z" fill="#8f8a84"/>
<path d="M721.6 297.5l2.2 1.0l-0.8 1.8l-2.2 -1.0z" fill="#c9794f"/>
<path d="M683.7 378.9l3.7 1.0l-0.5 1.8l-3.7 -1.0z" fill="#e6e2da"/>
<path d="M657.5 353.6l4.7 -1.7l1.2 3.3l-4.7 1.7z" fill="#2b3825"/>
<path d="M728.1 289.9l3.4 0.9l-0.7 2.7l-3.4 -0.9z" fill="#a9a39c"/>
<path d="M628.2 336.5l4.5 -2.4l0.8 1.5l-4.5 2.4z" fill="#3f4f33"/>
<path d="M720.4 377.5l2.0 -0.7l0.6 1.6l-2.0 0.7z" fill="#3a4a30"/>
<path d="M717.7 359.7l4.0 1.1l-0.5 1.7l-4.0 -1.1z" fill="#b86a48"/>
<path d="M730.9 308.2l3.2 0.8l-0.5 2.0l-3.2 -0.8z" fill="#33422b"/>
<path d="M643.8 324.6l4.3 -2.3l1.0 1.8l-4.3 2.3z" fill="#2e3c27"/>
<path d="M680.0 319.4l3.9 -1.4l0.9 2.4l-3.9 1.4z" fill="#2b3825"/>
<path d="M638.7 302.0l2.7 0.7l-0.7 2.5l-2.7 -0.7z" fill="#a9a39c"/>
<path d="M646.1 349.2l2.7 0.7l-0.7 2.6l-2.7 -0.7z" fill="#c9794f"/>
<path d="M639.7 309.7l2.8 -1.0l0.8 2.1l-2.8 1.0z" fill="#d08a5c"/>
<path d="M711.1 338.5l2.1 -0.8l1.1 2.9l-2.1 0.8z" fill="#59524c"/>
<path d="M643.7 326.7l5.0 1.3l-0.6 2.3l-5.0 -1.3z" fill="#b86a48"/>
<path d="M725.3 380.6l3.0 -1.1l0.6 1.8l-3.0 1.1z" fill="#33422b"/>
<path d="M734.9 307.3l4.3 -2.3l1.3 2.4l-4.3 2.3z" fill="#b5a590"/>
<path d="M732.8 373.3l1.9 -1.0l0.8 1.5l-1.9 1.0z" fill="#2b3825"/>
<path d="M725.7 301.4l2.5 -0.9l1.1 3.2l-2.5 0.9z" fill="#33422b"/>
<path d="M658.3 375.0l2.2 -1.2l1.4 2.7l-2.2 1.2z" fill="#8f8a84"/>
<path d="M646.0 353.6l2.5 1.2l-1.4 3.0l-2.5 -1.2z" fill="#2e3c27"/>
<path d="M661.9 299.2l2.5 -1.3l1.6 3.1l-2.5 1.3z" fill="#a9a39c"/>
<path d="M703.5 351.2l2.1 -1.1l1.1 2.0l-2.1 1.1z" fill="#e6e2da"/>
<path d="M680.1 338.5l3.7 1.0l-0.8 3.0l-3.7 -1.0z" fill="#b86a48"/>
<path d="M627.6 308.8l2.1 -0.8l0.8 2.1l-2.1 0.8z" fill="#a9a39c"/>
<path d="M731.7 347.7l2.1 1.0l-1.1 2.3l-2.1 -1.0z" fill="#2e3c27"/>
<path d="M689.0 367.1l3.2 1.5l-0.8 1.8l-3.2 -1.5z" fill="#c9794f"/>
<path d="M669.7 342.6l3.3 -1.8l1.0 1.9l-3.3 1.8z" fill="#a9a39c"/>
<path d="M665.3 364.9l4.6 2.1l-0.7 1.5l-4.6 -2.1z" fill="#b5a590"/>
<path d="M690.1 293.9l2.0 -0.7l0.8 2.1l-2.0 0.7z" fill="#3f4f33"/>
<path d="M732.5 319.5l4.3 2.0l-1.2 2.5l-4.3 -2.0z" fill="#e6e2da"/>
<path d="M691.5 317.6l2.8 1.3l-1.4 3.1l-2.8 -1.3z" fill="#2b3825"/>
<path d="M681.6 331.0l2.9 -1.0l1.2 3.2l-2.9 1.0z" fill="#a9a39c"/>
<path d="M673.2 340.5l4.8 1.3l-0.8 3.0l-4.8 -1.3z" fill="#c4beb6"/>
<path d="M683.4 325.7l3.7 -2.0l1.1 2.0l-3.7 2.0z" fill="#c9794f"/>
<path d="M658.9 340.3l3.3 1.5l-1.5 3.1l-3.3 -1.5z" fill="#c9794f"/>
<path d="M696.1 325.5l3.3 1.5l-1.4 3.0l-3.3 -1.5z" fill="#d08a5c"/>
<path d="M628.6 334.5l3.1 -1.7l1.4 2.5l-3.1 1.7z" fill="#e6e2da"/>
<path d="M681.4 292.7l2.6 1.2l-0.7 1.5l-2.6 -1.2z" fill="#d08a5c"/>
<path d="M648.0 372.4l3.2 -1.7l1.2 2.2l-3.2 1.7z" fill="#b86a48"/>
<path d="M675.7 333.1l2.8 0.8l-0.8 3.2l-2.8 -0.8z" fill="#8f8a84"/>
<path d="M694.2 352.5l3.2 -1.2l0.8 2.1l-3.2 1.2z" fill="#c4beb6"/>
<path d="M711.9 354.5l4.3 -1.6l1.1 3.0l-4.3 1.6z" fill="#c77248"/>
<path d="M714.0 316.4l2.5 -1.3l1.6 3.0l-2.5 1.3z" fill="#3a4a30"/>
<path d="M695.5 332.0l3.7 1.7l-1.2 2.7l-3.7 -1.7z" fill="#b86a48"/>
<path d="M733.0 302.9l2.6 1.2l-0.9 2.0l-2.6 -1.2z" fill="#3f4f33"/>
<path d="M647.9 345.1l4.2 -1.5l0.7 2.0l-4.2 1.5z" fill="#d08a5c"/>
<path d="M669.4 326.1l2.9 -1.5l1.5 2.7l-2.9 1.5z" fill="#e6e2da"/>
<path d="M729.1 347.8l3.5 0.9l-0.6 2.3l-3.5 -0.9z" fill="#d08a5c"/>
<path d="M620.7 303.1l4.0 -2.1l1.0 1.8l-4.0 2.1z" fill="#cf7d52"/>
<path d="M678.8 317.5l2.8 0.7l-0.5 1.9l-2.8 -0.7z" fill="#c77248"/>
<path d="M656.9 374.7l4.7 1.3l-0.6 2.1l-4.7 -1.3z" fill="#59524c"/>
<path d="M709.2 319.2l2.6 1.2l-1.1 2.4l-2.6 -1.2z" fill="#b86a48"/>
<path d="M622.2 368.6l3.5 -1.3l0.9 2.4l-3.5 1.3z" fill="#3f4f33"/>
<path d="M641.5 342.3l2.4 -1.3l1.1 2.0l-2.4 1.3z" fill="#33422b"/>
<path d="M624.1 321.2l3.3 1.6l-1.5 3.2l-3.3 -1.6z" fill="#8f8a84"/>
<path d="M665.9 310.0l3.1 -1.7l1.7 3.1l-3.1 1.7z" fill="#2b3825"/>
<path d="M669.0 352.1l4.3 1.1l-0.7 2.6l-4.3 -1.1z" fill="#4d4842"/>
<path d="M667.4 289.1l2.0 -1.1l0.9 1.7l-2.0 1.1z" fill="#cf7d52"/>
<path d="M639.6 378.6l4.4 1.2l-0.7 2.7l-4.4 -1.2z" fill="#e6e2da"/>
<path d="M708.3 348.6l3.9 1.8l-1.1 2.3l-3.9 -1.8z" fill="#c77248"/>
<path d="M730.1 306.1l2.5 -1.3l1.6 3.0l-2.5 1.3z" fill="#c9794f"/>
<path d="M649.7 352.9l3.1 1.4l-0.8 1.7l-3.1 -1.4z" fill="#b5a590"/>
<path d="M685.5 357.6l3.0 1.4l-1.2 2.6l-3.0 -1.4z" fill="#d08a5c"/>
<path d="M628.2 340.7l2.5 1.2l-1.2 2.5l-2.5 -1.2z" fill="#c9794f"/>
<path d="M663.1 357.5l4.1 -1.5l1.0 2.7l-4.1 1.5z" fill="#c4beb6"/>
<path d="M718.4 333.5l3.4 -1.8l1.0 2.0l-3.4 1.8z" fill="#33422b"/>
<path d="M653.8 308.7l4.3 2.0l-1.1 2.4l-4.3 -2.0z" fill="#4a5a3c"/>
<path d="M720.5 305.9l2.0 0.5l-0.5 1.7l-2.0 -0.5z" fill="#59524c"/>
<path d="M642.4 350.0l2.5 -0.9l0.8 2.3l-2.5 0.9z" fill="#c9794f"/>
<path d="M666.4 316.4l4.1 1.9l-1.1 2.3l-4.1 -1.9z" fill="#4d4842"/>
<path d="M671.6 323.2l4.4 2.1l-1.5 3.2l-4.4 -2.1z" fill="#b86a48"/>
<path d="M705.3 315.7l3.9 1.8l-1.5 3.2l-3.9 -1.8z" fill="#2b3825"/>
<path d="M643.1 315.9l3.8 1.0l-0.5 1.7l-3.8 -1.0z" fill="#4a5a3c"/>
<path d="M620.0 326.9l4.0 1.9l-0.9 1.9l-4.0 -1.9z" fill="#c4beb6"/>
<path d="M719.8 316.0l4.6 2.1l-1.3 2.8l-4.6 -2.1z" fill="#d08a5c"/>
<path d="M676.7 292.8l2.4 -1.3l1.4 2.6l-2.4 1.3z" fill="#33422b"/>
<path d="M706.0 342.1l2.5 1.2l-1.3 2.7l-2.5 -1.2z" fill="#4d4842"/>
<path d="M636.5 290.4l3.9 -2.1l1.3 2.4l-3.9 2.1z" fill="#e6e2da"/>
<path d="M707.2 320.1l4.6 2.1l-1.0 2.0l-4.6 -2.1z" fill="#b5a590"/>
<path d="M652.1 363.4l3.0 -1.6l0.9 1.7l-3.0 1.6z" fill="#59524c"/>
<path d="M672.5 340.1l3.3 0.9l-0.4 1.6l-3.3 -0.9z" fill="#2e3c27"/>
<path d="M669.0 292.8l1.9 -0.7l0.9 2.5l-1.9 0.7z" fill="#2e3c27"/>
<path d="M715.6 323.5l2.5 -1.4l1.1 2.0l-2.5 1.4z" fill="#4d4842"/>
<path d="M662.1 349.5l2.3 -0.8l0.8 2.1l-2.3 0.8z" fill="#8f8a84"/>
<path d="M639.0 299.0l2.1 -0.8l1.1 3.0l-2.1 0.8z" fill="#e6e2da"/>
<path d="M620.5 293.4l3.7 1.0l-0.8 2.8l-3.7 -1.0z" fill="#33422b"/>
<path d="M642.9 353.8l4.0 -1.4l0.8 2.1l-4.0 1.4z" fill="#b5a590"/>
<path d="M700.6 290.6l4.8 1.3l-0.8 3.1l-4.8 -1.3z" fill="#3a4a30"/>
<path d="M734.3 308.9l2.5 -0.9l1.0 2.7l-2.5 0.9z" fill="#33422b"/>
<path d="M710.8 370.9l2.4 -0.9l0.7 1.8l-2.4 0.9z" fill="#b5a590"/>
<path d="M659.8 354.0l2.5 -0.9l1.2 3.2l-2.5 0.9z" fill="#b5a590"/>
<path d="M660.9 309.4l3.8 -2.0l0.8 1.5l-3.8 2.0z" fill="#4d4842"/>
<path d="M728.9 290.3l2.8 1.3l-1.2 2.5l-2.8 -1.3z" fill="#4d4842"/>
<path d="M719.6 293.9l2.2 -0.8l0.6 1.5l-2.2 0.8z" fill="#4d4842"/>
<path d="M650.1 350.4l3.8 1.8l-0.9 2.0l-3.8 -1.8z" fill="#3f4f33"/>
<path d="M644.0 289.9l2.7 0.7l-0.4 1.6l-2.7 -0.7z" fill="#3f4f33"/>
<path d="M648.7 289.5l2.9 0.8l-0.7 2.7l-2.9 -0.8z" fill="#a9a39c"/>
<path d="M631.3 367.1l3.4 0.9l-0.7 2.5l-3.4 -0.9z" fill="#4d4842"/>
<path d="M722.5 358.5l3.8 -1.4l1.0 2.7l-3.8 1.4z" fill="#2b3825"/>
<path d="M714.2 321.9l2.7 -1.0l0.9 2.3l-2.7 1.0z" fill="#3f4f33"/>
<path d="M620.6 316.1l1.9 0.9l-1.3 2.9l-1.9 -0.9z" fill="#3f4f33"/>
<path d="M679.5 322.4l4.5 2.1l-1.1 2.5l-4.5 -2.1z" fill="#2e3c27"/>
<path d="M705.7 330.5l3.1 -1.1l0.9 2.5l-3.1 1.1z" fill="#b86a48"/>
<path d="M630.9 338.0l3.0 0.8l-0.6 2.4l-3.0 -0.8z" fill="#d08a5c"/>
<path d="M719.5 336.3l4.6 -2.4l0.8 1.5l-4.6 2.4z" fill="#c9794f"/>
<path d="M720.1 362.7l3.9 1.8l-1.3 2.8l-3.9 -1.8z" fill="#4d4842"/>
<path d="M734.6 371.8l3.4 -1.8l1.3 2.4l-3.4 1.8z" fill="#a9a39c"/>
<path d="M626.1 357.6l2.5 1.2l-1.1 2.4l-2.5 -1.2z" fill="#4d4842"/>
<path d="M713.7 380.5l4.4 -2.3l1.3 2.5l-4.4 2.3z" fill="#c4beb6"/>
<path d="M703.0 374.4l3.8 1.0l-0.5 2.0l-3.8 -1.0z" fill="#33422b"/>
<path d="M638.9 371.3l3.5 -1.3l1.2 3.3l-3.5 1.3z" fill="#e6e2da"/>
<path d="M640.2 362.5l2.6 0.7l-0.5 1.9l-2.6 -0.7z" fill="#d08a5c"/>
<path d="M703.5 354.9l4.3 -1.5l1.0 2.7l-4.3 1.5z" fill="#b5a590"/>
<path d="M694.0 380.0l4.3 -1.6l1.2 3.2l-4.3 1.6z" fill="#33422b"/>
<path d="M692.8 345.5l4.8 1.3l-0.4 1.6l-4.8 -1.3z" fill="#4a5a3c"/>
<path d="M721.5 349.4l2.9 1.4l-1.2 2.6l-2.9 -1.4z" fill="#b5a590"/>
<path d="M695.1 291.3l3.7 -1.3l0.7 2.0l-3.7 1.3z" fill="#b86a48"/>
<path d="M625.8 305.4l2.4 -1.3l1.0 1.9l-2.4 1.3z" fill="#4a5a3c"/>
<path d="M728.2 317.9l1.8 0.9l-1.0 2.2l-1.8 -0.9z" fill="#c77248"/>
<path d="M680.5 292.6l2.0 0.5l-0.9 3.4l-2.0 -0.5z" fill="#4d4842"/>
<path d="M656.9 301.9l3.7 -1.3l1.2 3.2l-3.7 1.3z" fill="#8f8a84"/>
<path d="M676.9 334.7l4.2 -1.5l0.9 2.6l-4.2 1.5z" fill="#59524c"/>
<path d="M640.3 355.8l2.0 -1.1l1.6 2.9l-2.0 1.1z" fill="#cf7d52"/>
<path d="M640.3 331.7l4.4 -1.6l1.0 2.7l-4.4 1.6z" fill="#2e3c27"/>
<path d="M703.1 292.8l4.4 -1.6l0.6 1.8l-4.4 1.6z" fill="#d08a5c"/>
<path d="M723.6 310.6l3.6 -1.9l0.9 1.7l-3.6 1.9z" fill="#cf7d52"/>
<path d="M717.7 344.2l4.4 -2.3l0.8 1.5l-4.4 2.3z" fill="#c4beb6"/>
<path d="M651.8 305.9l2.2 -0.8l0.7 1.9l-2.2 0.8z" fill="#b86a48"/>
<path d="M637.9 338.1l2.8 -1.5l0.9 1.7l-2.8 1.5z" fill="#4a5a3c"/>
<path d="M618.7 316.7l5.0 1.3l-0.4 1.6l-5.0 -1.3z" fill="#c9794f"/>
<path d="M667.8 361.7l4.6 1.2l-0.6 2.1l-4.6 -1.2z" fill="#cf7d52"/>
<path d="M636.9 362.8l4.3 -2.3l1.6 3.0l-4.3 2.3z" fill="#d08a5c"/>
<path d="M649.1 315.8l2.5 -1.3l1.7 3.2l-2.5 1.3z" fill="#a9a39c"/>
<path d="M692.0 368.9l2.7 -1.5l1.0 1.9l-2.7 1.5z" fill="#2b3825"/>
<path d="M720.0 321.9l3.8 1.0l-0.9 3.4l-3.8 -1.0z" fill="#c4beb6"/>
<path d="M716.9 349.3l4.6 2.1l-0.8 1.7l-4.6 -2.1z" fill="#b5a590"/>
<path d="M684.4 300.3l4.3 1.2l-0.4 1.7l-4.3 -1.2z" fill="#8f8a84"/>
<path d="M656.0 344.7l2.3 -1.2l1.2 2.2l-2.3 1.2z" fill="#e6e2da"/>
<path d="M640.0 335.3l3.8 1.0l-0.7 2.6l-3.8 -1.0z" fill="#8f8a84"/>
<path d="M662.8 344.8l3.8 -2.0l0.9 1.6l-3.8 2.0z" fill="#33422b"/>
<path d="M693.6 331.9l3.3 1.5l-0.7 1.5l-3.3 -1.5z" fill="#c4beb6"/>
<path d="M712.4 304.6l3.2 1.5l-1.1 2.3l-3.2 -1.5z" fill="#e6e2da"/>
<path d="M655.4 325.2l2.7 1.3l-1.3 2.8l-2.7 -1.3z" fill="#4d4842"/>
<path d="M698.8 302.2l4.2 -1.5l1.2 3.3l-4.2 1.5z" fill="#cf7d52"/>
<path d="M690.6 303.2l2.0 -0.7l0.8 2.3l-2.0 0.7z" fill="#4d4842"/>
<path d="M704.1 341.5l3.7 -2.0l1.7 3.1l-3.7 2.0z" fill="#2e3c27"/>
<path d="M629.6 291.3l3.4 0.9l-0.8 3.1l-3.4 -0.9z" fill="#4d4842"/>
<path d="M671.7 366.2l4.4 -2.4l0.8 1.5l-4.4 2.4z" fill="#b5a590"/>
<path d="M645.0 290.8l2.4 0.7l-0.4 1.7l-2.4 -0.7z" fill="#cf7d52"/>
<path d="M629.0 353.5l4.6 1.2l-0.9 3.3l-4.6 -1.2z" fill="#2e3c27"/>
<path d="M722.1 339.8l3.7 1.0l-0.9 3.2l-3.7 -1.0z" fill="#3f4f33"/>
<path d="M670.3 314.7l3.0 1.4l-0.9 1.8l-3.0 -1.4z" fill="#b5a590"/>
<path d="M718.4 333.1l4.7 1.3l-0.5 1.8l-4.7 -1.3z" fill="#d08a5c"/>
<path d="M681.5 321.6l3.1 0.8l-0.5 1.7l-3.1 -0.8z" fill="#b86a48"/>
<path d="M671.7 335.3l4.1 1.9l-1.0 2.2l-4.1 -1.9z" fill="#4a5a3c"/>
<path d="M698.4 367.9l2.0 1.0l-0.8 1.7l-2.0 -1.0z" fill="#4d4842"/>
<path d="M627.4 351.4l2.2 1.0l-0.8 1.7l-2.2 -1.0z" fill="#c77248"/>
<path d="M688.9 359.4l3.3 0.9l-0.6 2.1l-3.3 -0.9z" fill="#4a5a3c"/>
<path d="M722.6 307.9l1.8 0.9l-1.4 3.1l-1.8 -0.9z" fill="#cf7d52"/>
<path d="M633.6 300.7l4.3 -2.3l1.5 2.7l-4.3 2.3z" fill="#cf7d52"/>
<path d="M643.2 329.7l3.5 -1.8l0.8 1.5l-3.5 1.8z" fill="#33422b"/>
<path d="M701.1 327.7l2.2 0.6l-0.7 2.6l-2.2 -0.6z" fill="#b5a590"/>
<path d="M665.3 374.1l4.2 -1.5l1.1 3.1l-4.2 1.5z" fill="#b5a590"/>
<path d="M676.3 316.7l2.9 -1.6l1.5 2.8l-2.9 1.6z" fill="#2b3825"/>
<path d="M726.8 376.7l3.6 1.7l-0.9 2.0l-3.6 -1.7z" fill="#d08a5c"/>
<path d="M714.2 310.3l4.5 1.2l-0.7 2.5l-4.5 -1.2z" fill="#c4beb6"/>
<path d="M638.2 336.3l4.6 1.2l-0.7 2.7l-4.6 -1.2z" fill="#c4beb6"/>
<path d="M657.7 327.3l3.8 1.8l-1.3 2.8l-3.8 -1.8z" fill="#b86a48"/>
<path d="M631.9 296.9l2.3 1.1l-1.4 2.9l-2.3 -1.1z" fill="#b5a590"/>
<path d="M660.9 322.5l2.4 -0.9l1.2 3.3l-2.4 0.9z" fill="#cf7d52"/>
<path d="M628.6 335.3l3.3 1.5l-1.5 3.2l-3.3 -1.5z" fill="#2b3825"/>
<path d="M645.8 379.6l4.3 -2.3l1.5 2.8l-4.3 2.3z" fill="#e6e2da"/>
<path d="M659.5 320.9l4.4 -1.6l1.1 3.0l-4.4 1.6z" fill="#3f4f33"/>
<path d="M663.5 348.1l2.5 -1.3l1.0 2.0l-2.5 1.3z" fill="#a9a39c"/>
<path d="M726.5 316.3l3.0 -1.1l0.6 1.7l-3.0 1.1z" fill="#3a4a30"/>
<path d="M723.1 295.9l2.6 -1.0l1.1 2.9l-2.6 1.0z" fill="#c77248"/>
<path d="M721.4 321.0l3.4 0.9l-0.5 1.9l-3.4 -0.9z" fill="#2b3825"/>
<path d="M713.0 316.6l3.4 0.9l-0.5 2.0l-3.4 -0.9z" fill="#b5a590"/>
<path d="M640.6 299.2l2.0 -1.1l1.5 2.8l-2.0 1.1z" fill="#c4beb6"/>
<path d="M671.4 344.0l2.7 1.3l-0.7 1.5l-2.7 -1.3z" fill="#59524c"/>
<path d="M659.7 378.9l2.8 -1.5l1.6 3.0l-2.8 1.5z" fill="#cf7d52"/>
<path d="M658.3 346.9l2.3 -1.2l1.4 2.6l-2.3 1.2z" fill="#a9a39c"/>
<path d="M666.4 302.6l5.0 1.3l-0.7 2.7l-5.0 -1.3z" fill="#b86a48"/>
<path d="M707.3 348.4l3.1 -1.6l1.5 2.8l-3.1 1.6z" fill="#a9a39c"/>
<path d="M679.1 369.5l4.1 1.9l-1.3 2.8l-4.1 -1.9z" fill="#b86a48"/>
<path d="M714.4 357.7l4.6 1.2l-0.9 3.4l-4.6 -1.2z" fill="#c77248"/>
<path d="M669.7 331.5l3.7 1.0l-0.6 2.1l-3.7 -1.0z" fill="#c77248"/>
<path d="M717.6 363.1l1.8 -0.9l1.3 2.4l-1.8 0.9z" fill="#8f8a84"/>
<path d="M626.2 313.0l4.2 -1.5l1.0 2.6l-4.2 1.5z" fill="#2b3825"/>
<path d="M656.7 349.2l3.0 -1.6l0.8 1.5l-3.0 1.6z" fill="#59524c"/>
<path d="M630.6 300.9l2.4 1.1l-1.1 2.4l-2.4 -1.1z" fill="#c9794f"/>
<path d="M731.2 308.0l3.7 1.7l-1.2 2.6l-3.7 -1.7z" fill="#59524c"/>
<path d="M639.0 358.7l4.3 -1.6l1.2 3.3l-4.3 1.6z" fill="#c77248"/>
<path d="M661.1 328.0l4.3 -2.3l0.8 1.6l-4.3 2.3z" fill="#b5a590"/>
<path d="M717.3 372.9l2.2 0.6l-0.6 2.1l-2.2 -0.6z" fill="#2b3825"/>
<path d="M731.1 290.5l4.3 1.2l-0.8 3.1l-4.3 -1.2z" fill="#cf7d52"/>
<path d="M636.1 337.2l3.4 -1.8l1.6 3.1l-3.4 1.8z" fill="#2b3825"/>
<path d="M696.8 309.0l2.9 -1.1l0.6 1.7l-2.9 1.1z" fill="#2e3c27"/>
<path d="M631.4 361.4l2.0 0.9l-1.3 2.7l-2.0 -0.9z" fill="#33422b"/>
<path d="M638.8 297.8l1.9 -0.7l1.1 2.9l-1.9 0.7z" fill="#a9a39c"/>
<path d="M703.3 361.9l2.2 0.6l-0.5 1.9l-2.2 -0.6z" fill="#b5a590"/>
<path d="M708.6 356.9l2.9 0.8l-0.6 2.4l-2.9 -0.8z" fill="#b86a48"/>
<path d="M673.6 362.2l2.7 0.7l-0.8 3.1l-2.7 -0.7z" fill="#33422b"/>
<path d="M731.0 375.7l2.4 -0.9l1.2 3.4l-2.4 0.9z" fill="#c4beb6"/>
<path d="M632.3 316.3l3.3 0.9l-0.8 3.2l-3.3 -0.9z" fill="#8f8a84"/>
<path d="M628.3 326.9l4.4 1.2l-0.4 1.6l-4.4 -1.2z" fill="#3f4f33"/>
<path d="M725.5 363.4l3.0 1.4l-0.7 1.6l-3.0 -1.4z" fill="#b86a48"/>
<path d="M666.5 325.7l3.5 1.7l-1.0 2.2l-3.5 -1.7z" fill="#b86a48"/>
<path d="M709.3 316.7l2.8 0.7l-0.6 2.1l-2.8 -0.7z" fill="#2e3c27"/>
<path d="M620.0 351.1l2.8 1.3l-1.1 2.3l-2.8 -1.3z" fill="#b86a48"/>
<path d="M649.8 292.8l2.6 -1.4l1.0 1.9l-2.6 1.4z" fill="#c4beb6"/>
<path d="M621.5 332.9l2.0 0.5l-0.9 3.2l-2.0 -0.5z" fill="#c9794f"/>
<path d="M670.3 337.1l1.9 0.9l-0.8 1.6l-1.9 -0.9z" fill="#c77248"/>
<path d="M658.5 358.2l3.4 -1.2l1.1 3.0l-3.4 1.2z" fill="#3f4f33"/>
<path d="M672.4 337.9l3.4 -1.8l1.2 2.3l-3.4 1.8z" fill="#4d4842"/>
<path d="M688.5 372.9l2.0 0.9l-1.1 2.3l-2.0 -0.9z" fill="#c9794f"/>
<path d="M729.7 303.4l3.4 1.6l-0.8 1.7l-3.4 -1.6z" fill="#c77248"/>
<path d="M704.6 316.7l4.5 -1.7l0.6 1.5l-4.5 1.7z" fill="#4a5a3c"/>
<path d="M721.5 360.7l2.6 1.2l-0.7 1.6l-2.6 -1.2z" fill="#d08a5c"/>
<path d="M687.3 353.5l2.1 -0.8l0.8 2.3l-2.1 0.8z" fill="#33422b"/>
<path d="M638.1 342.2l2.9 1.4l-1.1 2.3l-2.9 -1.4z" fill="#cf7d52"/>
<path d="M650.2 350.9l2.1 1.0l-1.0 2.1l-2.1 -1.0z" fill="#3a4a30"/>
<path d="M673.7 328.7l3.7 -1.3l1.2 3.3l-3.7 1.3z" fill="#c4beb6"/>
<path d="M641.3 373.4l3.4 0.9l-0.8 2.9l-3.4 -0.9z" fill="#3f4f33"/>
<path d="M694.9 300.1l4.4 -2.3l1.7 3.2l-4.4 2.3z" fill="#c4beb6"/>
<path d="M629.7 299.1l2.0 -1.1l1.6 3.0l-2.0 1.1z" fill="#59524c"/>
<path d="M731.9 378.8l4.1 1.1l-0.7 2.5l-4.1 -1.1z" fill="#3a4a30"/>
<path d="M707.9 377.4l3.7 -1.3l1.0 2.8l-3.7 1.3z" fill="#cf7d52"/>
<path d="M648.3 376.9l2.3 -1.2l1.4 2.7l-2.3 1.2z" fill="#d08a5c"/>
<path d="M727.0 366.6l4.2 -2.2l1.5 2.9l-4.2 2.2z" fill="#d08a5c"/>
<path d="M623.1 293.7l3.9 1.8l-1.1 2.3l-3.9 -1.8z" fill="#8f8a84"/>
<path d="M696.3 352.9l2.8 -1.5l1.4 2.5l-2.8 1.5z" fill="#4a5a3c"/>
<path d="M703.2 363.0l3.2 1.5l-0.8 1.8l-3.2 -1.5z" fill="#59524c"/>
<path d="M698.2 339.3l2.1 1.0l-0.7 1.5l-2.1 -1.0z" fill="#c4beb6"/>
<path d="M716.4 300.8l4.8 -1.7l1.1 3.0l-4.8 1.7z" fill="#c9794f"/>
<path d="M696.9 354.0l2.4 -0.9l0.8 2.1l-2.4 0.9z" fill="#2e3c27"/>
<path d="M627.8 347.8l2.8 -1.5l1.7 3.2l-2.8 1.5z" fill="#59524c"/>
<path d="M689.4 363.6l4.6 2.1l-1.4 2.9l-4.6 -2.1z" fill="#59524c"/>
<path d="M709.5 344.2l3.8 1.0l-0.5 1.9l-3.8 -1.0z" fill="#2e3c27"/>
<path d="M625.3 348.3l2.8 1.3l-1.1 2.3l-2.8 -1.3z" fill="#8f8a84"/>
<path d="M718.5 360.2l4.7 2.2l-1.1 2.3l-4.7 -2.2z" fill="#c9794f"/>
<path d="M683.3 373.8l2.1 0.6l-0.7 2.6l-2.1 -0.6z" fill="#e6e2da"/>
<path d="M625.6 369.9l3.4 -1.8l1.4 2.7l-3.4 1.8z" fill="#b86a48"/>
<path d="M688.4 327.5l4.3 -1.6l0.8 2.1l-4.3 1.6z" fill="#3a4a30"/>
<path d="M653.4 318.3l3.5 1.0l-0.6 2.4l-3.5 -1.0z" fill="#33422b"/>
<path d="M675.5 337.0l2.5 -1.3l1.3 2.4l-2.5 1.3z" fill="#2b3825"/>
<path d="M659.2 314.6l4.3 -1.6l1.1 3.0l-4.3 1.6z" fill="#3f4f33"/>
<path d="M705.3 293.2l2.3 -0.8l1.1 2.9l-2.3 0.8z" fill="#c77248"/>
<path d="M691.5 344.5l2.3 0.6l-0.9 3.4l-2.3 -0.6z" fill="#d08a5c"/>
<path d="M733.6 324.0l2.1 0.6l-0.8 2.8l-2.1 -0.6z" fill="#c77248"/>
<path d="M643.7 316.3l3.7 -1.3l0.8 2.1l-3.7 1.3z" fill="#e6e2da"/>
<path d="M724.3 321.4l3.6 1.7l-1.4 2.9l-3.6 -1.7z" fill="#c77248"/>
<path d="M678.4 352.4l2.4 -1.3l1.4 2.7l-2.4 1.3z" fill="#cf7d52"/>
<path d="M625.2 370.9l4.2 2.0l-1.1 2.3l-4.2 -2.0z" fill="#b5a590"/>
<path d="M621.3 353.4l1.9 0.9l-1.1 2.4l-1.9 -0.9z" fill="#c77248"/>
<path d="M656.7 304.5l3.1 -1.1l1.0 2.9l-3.1 1.1z" fill="#2b3825"/>
<path d="M678.7 366.0l4.6 1.2l-0.8 2.9l-4.6 -1.2z" fill="#2e3c27"/>
<path d="M628.1 325.0l2.3 -1.2l1.6 3.0l-2.3 1.2z" fill="#b86a48"/>
<path d="M706.5 379.8l3.7 -1.3l0.6 1.6l-3.7 1.3z" fill="#d08a5c"/>
<path d="M701.2 319.2l3.1 0.8l-0.9 3.5l-3.1 -0.8z" fill="#c4beb6"/>
<path d="M628.0 289.7l4.3 2.0l-0.8 1.7l-4.3 -2.0z" fill="#2b3825"/>
<path d="M661.4 376.9l2.7 1.3l-1.4 2.9l-2.7 -1.3z" fill="#c77248"/>
<path d="M672.6 321.2l3.7 -1.4l0.9 2.5l-3.7 1.4z" fill="#cf7d52"/>
<path d="M645.4 352.2l4.4 -1.6l1.0 2.9l-4.4 1.6z" fill="#3f4f33"/>
<path d="M636.4 378.4l4.5 2.1l-1.5 3.1l-4.5 -2.1z" fill="#d08a5c"/>
<path d="M714.6 367.5l2.4 -1.3l0.9 1.7l-2.4 1.3z" fill="#c9794f"/>
<path d="M721.7 321.1l2.1 -0.8l0.8 2.2l-2.1 0.8z" fill="#2b3825"/>
<path d="M646.1 367.8l2.6 0.7l-0.6 2.2l-2.6 -0.7z" fill="#d08a5c"/>
<path d="M632.7 297.3l3.9 -2.0l1.2 2.2l-3.9 2.0z" fill="#c4beb6"/>
<path d="M685.9 365.0l2.6 1.2l-1.1 2.4l-2.6 -1.2z" fill="#4d4842"/>
<path d="M646.4 330.0l2.3 -0.8l0.9 2.4l-2.3 0.8z" fill="#c77248"/>
<path d="M674.8 314.3l3.6 1.0l-0.5 1.7l-3.6 -1.0z" fill="#2b3825"/>
<path d="M719.4 337.4l2.0 0.9l-1.2 2.6l-2.0 -0.9z" fill="#4a5a3c"/>
<path d="M618 406 L618 401 L634 390 L645 381 L680 381 L706 375 L737 366 L737 406 Z" fill="#386232" stroke="none" stroke-width="0"/>
<ellipse cx="733.7" cy="382.5" rx="4.0" ry="2.9" fill="#4a8540"/>
<ellipse cx="713.1" cy="392.7" rx="3.0" ry="2.9" fill="#1f381b"/>
<ellipse cx="724.9" cy="403.5" rx="3.5" ry="1.9" fill="#35602e"/>
<ellipse cx="666.3" cy="390.3" rx="3.9" ry="2.6" fill="#35602e"/>
<ellipse cx="676.6" cy="401.1" rx="4.4" ry="2.6" fill="#1f381b"/>
<ellipse cx="645.0" cy="385.5" rx="3.1" ry="1.9" fill="#2a4a25"/>
<ellipse cx="670.9" cy="379.7" rx="3.0" ry="2.7" fill="#223a1c"/>
<ellipse cx="732.2" cy="396.8" rx="2.6" ry="2.1" fill="#223a1c"/>
<ellipse cx="734.4" cy="400.4" rx="3.4" ry="2.1" fill="#35602e"/>
<ellipse cx="662.4" cy="403.3" rx="3.2" ry="1.4" fill="#2a4a25"/>
<ellipse cx="678.4" cy="397.9" rx="3.5" ry="1.8" fill="#4a8540"/>
<ellipse cx="635.9" cy="398.8" rx="4.5" ry="2.1" fill="#4a8540"/>
<ellipse cx="717.2" cy="392.1" rx="1.6" ry="1.7" fill="#2a4a25"/>
<ellipse cx="631.1" cy="396.6" rx="3.6" ry="1.5" fill="#35602e"/>
<ellipse cx="667.4" cy="401.6" rx="3.1" ry="1.4" fill="#57944a"/>
<ellipse cx="715.9" cy="387.0" rx="2.7" ry="1.7" fill="#2a4a25"/>
<ellipse cx="733.2" cy="390.5" rx="2.4" ry="1.4" fill="#223a1c"/>
<ellipse cx="706.1" cy="398.3" rx="4.6" ry="1.7" fill="#57944a"/>
<ellipse cx="730.5" cy="392.0" rx="4.3" ry="1.1" fill="#223a1c"/>
<ellipse cx="705.0" cy="397.2" rx="2.3" ry="1.2" fill="#57944a"/>
<ellipse cx="709.9" cy="379.9" rx="2.5" ry="1.7" fill="#1f381b"/>
<ellipse cx="728.0" cy="398.8" rx="3.6" ry="2.9" fill="#35602e"/>
<ellipse cx="692.1" cy="392.0" rx="1.9" ry="2.2" fill="#3f6f36"/>
<ellipse cx="652.9" cy="403.2" rx="4.5" ry="2.4" fill="#2a4a25"/>
<ellipse cx="662.5" cy="387.9" rx="3.3" ry="2.2" fill="#223a1c"/>
<ellipse cx="684.0" cy="394.6" rx="2.5" ry="2.2" fill="#57944a"/>
<ellipse cx="728.5" cy="376.6" rx="3.3" ry="1.9" fill="#2a4a25"/>
<ellipse cx="640.6" cy="397.7" rx="3.9" ry="2.4" fill="#4a8540"/>
<ellipse cx="715.7" cy="376.2" rx="2.1" ry="2.4" fill="#4a8540"/>
<ellipse cx="687.8" cy="394.8" rx="3.1" ry="1.3" fill="#1f381b"/>
<ellipse cx="678.7" cy="390.4" rx="2.5" ry="1.2" fill="#57944a"/>
<ellipse cx="727.9" cy="384.2" rx="3.4" ry="2.5" fill="#223a1c"/>
<ellipse cx="653.4" cy="386.2" rx="3.2" ry="2.8" fill="#2a4a25"/>
<ellipse cx="683.6" cy="385.8" rx="4.9" ry="2.0" fill="#35602e"/>
<ellipse cx="735.3" cy="393.1" rx="3.0" ry="1.2" fill="#2a4a25"/>
<ellipse cx="656.7" cy="396.7" rx="4.2" ry="1.9" fill="#57944a"/>
<ellipse cx="705.9" cy="392.6" rx="3.8" ry="2.1" fill="#3f6f36"/>
<ellipse cx="630.5" cy="394.6" rx="3.0" ry="2.9" fill="#2a4a25"/>
<ellipse cx="675.7" cy="380.6" rx="2.5" ry="1.1" fill="#3f6f36"/>
<ellipse cx="637.8" cy="398.3" rx="2.1" ry="2.0" fill="#35602e"/>
<ellipse cx="735.4" cy="378.4" rx="1.5" ry="3.0" fill="#1f381b"/>
<ellipse cx="725.2" cy="388.3" rx="4.9" ry="2.7" fill="#1f381b"/>
<ellipse cx="662.8" cy="383.9" rx="3.6" ry="3.0" fill="#4a8540"/>
<ellipse cx="714.7" cy="376.1" rx="2.6" ry="2.9" fill="#2a4a25"/>
<ellipse cx="689.4" cy="383.5" rx="4.7" ry="1.5" fill="#2a4a25"/>
<ellipse cx="659.9" cy="389.6" rx="2.3" ry="1.9" fill="#1f381b"/>
<ellipse cx="668.9" cy="392.5" rx="3.1" ry="2.3" fill="#223a1c"/>
<ellipse cx="693.6" cy="401.7" rx="2.3" ry="3.0" fill="#35602e"/>
<ellipse cx="683.3" cy="385.2" rx="3.0" ry="3.0" fill="#223a1c"/>
<ellipse cx="677.5" cy="403.3" rx="2.8" ry="3.0" fill="#223a1c"/>
<ellipse cx="665.6" cy="387.6" rx="3.3" ry="2.1" fill="#35602e"/>
<ellipse cx="684.9" cy="402.1" rx="1.8" ry="3.0" fill="#57944a"/>
<ellipse cx="714.8" cy="383.6" rx="4.3" ry="2.9" fill="#2a4a25"/>
<ellipse cx="731.4" cy="385.0" rx="2.9" ry="1.9" fill="#2a4a25"/>
<ellipse cx="715.1" cy="393.0" rx="3.6" ry="2.8" fill="#57944a"/>
<ellipse cx="698.0" cy="382.6" rx="2.8" ry="2.4" fill="#3f6f36"/>
<ellipse cx="668.0" cy="387.8" rx="2.2" ry="2.0" fill="#57944a"/>
<ellipse cx="713.2" cy="383.5" rx="1.8" ry="1.5" fill="#2a4a25"/>
<ellipse cx="641.7" cy="389.9" rx="2.3" ry="2.4" fill="#4a8540"/>
<ellipse cx="687.9" cy="396.6" rx="2.7" ry="3.0" fill="#2a4a25"/>
<ellipse cx="672.7" cy="390.0" rx="2.4" ry="2.5" fill="#35602e"/>
<ellipse cx="734.8" cy="399.5" rx="1.8" ry="2.1" fill="#4a8540"/>
<ellipse cx="708.8" cy="388.3" rx="3.1" ry="2.7" fill="#35602e"/>
<ellipse cx="684.2" cy="382.4" rx="4.0" ry="2.7" fill="#57944a"/>
<ellipse cx="711.0" cy="382.8" rx="4.5" ry="1.2" fill="#4a8540"/>
<ellipse cx="645.8" cy="393.2" rx="2.5" ry="2.9" fill="#223a1c"/>
<ellipse cx="670.2" cy="398.4" rx="2.4" ry="1.0" fill="#1f381b"/>
<ellipse cx="733.8" cy="383.3" rx="3.8" ry="2.8" fill="#2a4a25"/>
<ellipse cx="699.6" cy="384.7" rx="4.5" ry="1.4" fill="#3f6f36"/>
<ellipse cx="661.0" cy="397.8" rx="3.3" ry="1.3" fill="#223a1c"/>
<ellipse cx="704.8" cy="383.0" rx="1.6" ry="1.6" fill="#2a4a25"/>
<ellipse cx="680.3" cy="395.7" rx="3.3" ry="1.7" fill="#2a4a25"/>
<ellipse cx="702.7" cy="389.5" rx="4.1" ry="1.9" fill="#223a1c"/>
<ellipse cx="689.0" cy="378.2" rx="2.0" ry="2.3" fill="#3f6f36"/>
<ellipse cx="725.1" cy="402.5" rx="4.0" ry="2.5" fill="#3f6f36"/>
<ellipse cx="677.4" cy="380.7" rx="1.7" ry="1.5" fill="#1f381b"/>
<ellipse cx="710.2" cy="397.1" rx="3.1" ry="1.0" fill="#57944a"/>
<ellipse cx="686.0" cy="381.1" rx="2.3" ry="2.5" fill="#35602e"/>
<ellipse cx="653.3" cy="397.7" rx="3.1" ry="2.3" fill="#1f381b"/>
<ellipse cx="685.3" cy="393.8" rx="3.1" ry="2.7" fill="#2a4a25"/>
<ellipse cx="662.4" cy="381.5" rx="4.4" ry="2.5" fill="#4a8540"/>
<ellipse cx="699.9" cy="391.2" rx="3.5" ry="1.1" fill="#57944a"/>
<ellipse cx="653.3" cy="393.5" rx="3.4" ry="2.2" fill="#35602e"/>
<ellipse cx="669.7" cy="382.6" rx="4.7" ry="1.0" fill="#223a1c"/>
<ellipse cx="686.5" cy="400.7" rx="4.2" ry="2.6" fill="#2a4a25"/>
<ellipse cx="704.0" cy="402.7" rx="3.9" ry="2.0" fill="#1f381b"/>
<ellipse cx="713.0" cy="387.8" rx="1.5" ry="1.6" fill="#223a1c"/>
<ellipse cx="675.1" cy="402.2" rx="1.8" ry="3.0" fill="#35602e"/>
<ellipse cx="712.1" cy="394.0" rx="1.7" ry="1.6" fill="#35602e"/>
<ellipse cx="728.7" cy="394.5" rx="4.7" ry="2.8" fill="#35602e"/>
<ellipse cx="707.5" cy="382.2" rx="4.4" ry="1.6" fill="#3f6f36"/>
<ellipse cx="697.2" cy="379.9" rx="4.2" ry="3.0" fill="#223a1c"/>
<ellipse cx="689.7" cy="394.1" rx="3.2" ry="1.8" fill="#2a4a25"/>
<ellipse cx="729.1" cy="390.3" rx="3.6" ry="2.9" fill="#4a8540"/>
<ellipse cx="698.6" cy="377.3" rx="3.1" ry="1.4" fill="#3f6f36"/>
<ellipse cx="708.3" cy="393.3" rx="2.4" ry="1.9" fill="#223a1c"/>
<ellipse cx="674.0" cy="385.7" rx="2.0" ry="1.5" fill="#2a4a25"/>
<ellipse cx="680.8" cy="396.3" rx="4.4" ry="1.3" fill="#2a4a25"/>
<ellipse cx="663.4" cy="385.0" rx="4.1" ry="2.4" fill="#3f6f36"/>
<ellipse cx="642.6" cy="387.9" rx="2.1" ry="2.5" fill="#2a4a25"/>
<ellipse cx="663.8" cy="385.2" rx="2.4" ry="1.3" fill="#3f6f36"/>
<ellipse cx="696.5" cy="384.0" rx="2.4" ry="1.4" fill="#3f6f36"/>
<ellipse cx="726.9" cy="381.7" rx="4.0" ry="2.7" fill="#4a8540"/>
<ellipse cx="725.8" cy="401.6" rx="2.1" ry="1.9" fill="#2a4a25"/>
<ellipse cx="666.3" cy="385.9" rx="1.8" ry="1.8" fill="#1f381b"/>
<ellipse cx="676.2" cy="399.2" rx="2.0" ry="2.3" fill="#4a8540"/>
<ellipse cx="647.2" cy="393.0" rx="3.5" ry="2.5" fill="#2a4a25"/>
<ellipse cx="648.1" cy="390.5" rx="2.7" ry="1.5" fill="#3f6f36"/>
<ellipse cx="682.0" cy="394.4" rx="4.4" ry="2.3" fill="#4a8540"/>
<ellipse cx="710.3" cy="398.6" rx="3.7" ry="2.3" fill="#4a8540"/>
<ellipse cx="663.6" cy="382.4" rx="2.5" ry="1.2" fill="#2a4a25"/>
<ellipse cx="707.8" cy="380.4" rx="4.7" ry="2.0" fill="#4a8540"/>
<ellipse cx="681.7" cy="394.6" rx="2.5" ry="2.6" fill="#35602e"/>
<ellipse cx="678.6" cy="390.4" rx="2.5" ry="2.4" fill="#3f6f36"/>
<ellipse cx="731.5" cy="394.0" rx="4.0" ry="1.9" fill="#35602e"/>
<ellipse cx="718.1" cy="383.2" rx="3.4" ry="2.5" fill="#2a4a25"/>
<ellipse cx="689.6" cy="389.1" rx="4.8" ry="1.9" fill="#35602e"/>
<ellipse cx="735.6" cy="390.6" rx="2.5" ry="1.2" fill="#2a4a25"/>
<ellipse cx="708.4" cy="389.2" rx="2.3" ry="1.6" fill="#223a1c"/>
<ellipse cx="707.0" cy="385.3" rx="1.5" ry="1.1" fill="#1f381b"/>
<path d="M662 392 L680 389 L684 399 L664 401 Z" fill="#4f9046" stroke="none" stroke-width="0"/>
<path d="M688 384 L708 380 L711 388 L692 392 Z" fill="#66774c" stroke="none" stroke-width="0"/>
<path d="M618 392 L632 382 L640 385 L626 397 L618 403 Z" fill="#5f6a50" stroke="none" stroke-width="0"/>
<path d="M723 372 L737 368 L737 384 L729 386 Z" fill="#7d746a" stroke="none" stroke-width="0"/>
<path d="M730 383 L737 382 L737 397 L732 398 Z" fill="#9aa3a8" stroke="none" stroke-width="0"/>
<path d="M706 386 L737 384 L737 404 L700 404 L698 396 Z" fill="#24401f" stroke="none" stroke-width="0"/>
<path d="M654 302 L664 298.5 L677 300 L678.5 319.5 L693 345 L706 352 L714 362 L716 371 L690 375 L650 377.5 L654 362 L657.5 349 L654.5 330 Z" fill="#223a25" stroke="none" stroke-width="0"/>
<g clip-path="url(#cfo)">
<ellipse cx="652.5" cy="374.9" rx="2.1" ry="2.3" fill="#233b22"/>
<ellipse cx="686.7" cy="352.5" rx="2.2" ry="2.1" fill="#1c321b"/>
<ellipse cx="692.7" cy="305.8" rx="1.9" ry="1.9" fill="#233b22"/>
<ellipse cx="706.0" cy="337.2" rx="2.1" ry="1.1" fill="#2d4f2e"/>
<ellipse cx="666.5" cy="355.2" rx="3.0" ry="2.4" fill="#2d4f2e"/>
<ellipse cx="702.3" cy="324.5" rx="2.5" ry="2.4" fill="#182a17"/>
<ellipse cx="676.4" cy="329.7" rx="1.1" ry="1.7" fill="#325536"/>
<ellipse cx="668.5" cy="342.5" rx="1.3" ry="1.1" fill="#36593a"/>
<ellipse cx="691.9" cy="334.5" rx="1.1" ry="2.1" fill="#36593a"/>
<ellipse cx="703.4" cy="321.0" rx="1.8" ry="1.3" fill="#1c321b"/>
<ellipse cx="663.4" cy="361.6" rx="2.9" ry="2.2" fill="#182a17"/>
<ellipse cx="698.3" cy="329.2" rx="1.9" ry="1.2" fill="#2d4f2e"/>
<ellipse cx="708.7" cy="311.8" rx="1.3" ry="1.4" fill="#2d4f2e"/>
<ellipse cx="662.7" cy="311.4" rx="2.8" ry="1.1" fill="#1c321b"/>
<ellipse cx="664.4" cy="356.4" rx="1.8" ry="1.6" fill="#36593a"/>
<ellipse cx="713.1" cy="349.9" rx="2.9" ry="2.0" fill="#325536"/>
<ellipse cx="704.9" cy="374.6" rx="2.5" ry="2.0" fill="#233b22"/>
<ellipse cx="690.8" cy="307.4" rx="1.6" ry="1.0" fill="#36593a"/>
<ellipse cx="696.4" cy="312.5" rx="3.0" ry="2.0" fill="#1c321b"/>
<ellipse cx="688.4" cy="348.4" rx="1.8" ry="2.2" fill="#325536"/>
<ellipse cx="692.8" cy="316.4" rx="2.5" ry="2.2" fill="#1c321b"/>
<ellipse cx="676.2" cy="362.4" rx="2.5" ry="1.0" fill="#325536"/>
<ellipse cx="661.7" cy="323.6" rx="2.5" ry="1.5" fill="#1c321b"/>
<ellipse cx="665.2" cy="333.1" rx="1.2" ry="2.2" fill="#2d4f2e"/>
<ellipse cx="716.0" cy="370.7" rx="2.6" ry="1.8" fill="#182a17"/>
<ellipse cx="701.0" cy="343.2" rx="2.0" ry="2.4" fill="#325536"/>
<ellipse cx="681.4" cy="333.7" rx="3.0" ry="1.5" fill="#36593a"/>
<ellipse cx="679.8" cy="309.1" rx="2.8" ry="2.2" fill="#325536"/>
<ellipse cx="673.5" cy="300.3" rx="1.9" ry="2.3" fill="#182a17"/>
<ellipse cx="695.1" cy="373.4" rx="2.5" ry="1.2" fill="#182a17"/>
<ellipse cx="695.3" cy="333.1" rx="2.7" ry="2.4" fill="#2d4f2e"/>
<ellipse cx="712.2" cy="321.1" rx="1.6" ry="1.1" fill="#1c321b"/>
<ellipse cx="703.5" cy="358.3" rx="2.6" ry="1.1" fill="#2d4f2e"/>
<ellipse cx="669.1" cy="335.0" rx="2.0" ry="2.2" fill="#233b22"/>
<ellipse cx="692.9" cy="326.7" rx="1.1" ry="1.0" fill="#325536"/>
<ellipse cx="691.2" cy="346.4" rx="3.0" ry="1.7" fill="#182a17"/>
<ellipse cx="679.8" cy="304.9" rx="1.4" ry="1.2" fill="#2d4f2e"/>
<ellipse cx="682.9" cy="327.3" rx="3.0" ry="2.4" fill="#182a17"/>
<ellipse cx="663.1" cy="332.8" rx="2.5" ry="1.3" fill="#233b22"/>
<ellipse cx="690.4" cy="356.9" rx="2.1" ry="2.3" fill="#36593a"/>
<ellipse cx="717.1" cy="361.4" rx="1.0" ry="1.5" fill="#233b22"/>
<ellipse cx="659.4" cy="375.7" rx="2.3" ry="2.3" fill="#1c321b"/>
<ellipse cx="701.7" cy="340.5" rx="2.0" ry="1.5" fill="#182a17"/>
<ellipse cx="717.3" cy="317.4" rx="2.7" ry="1.4" fill="#325536"/>
<ellipse cx="650.6" cy="376.4" rx="2.1" ry="1.3" fill="#325536"/>
<ellipse cx="707.6" cy="370.2" rx="1.9" ry="1.9" fill="#233b22"/>
<ellipse cx="651.7" cy="371.4" rx="1.2" ry="1.9" fill="#233b22"/>
<ellipse cx="692.8" cy="356.9" rx="2.6" ry="2.3" fill="#325536"/>
<ellipse cx="712.3" cy="340.5" rx="1.6" ry="1.2" fill="#1c321b"/>
<ellipse cx="654.9" cy="315.2" rx="2.1" ry="1.2" fill="#325536"/>
<ellipse cx="659.7" cy="304.5" rx="1.8" ry="2.0" fill="#325536"/>
<ellipse cx="691.9" cy="330.0" rx="1.2" ry="1.1" fill="#1c321b"/>
<ellipse cx="712.8" cy="315.6" rx="2.2" ry="1.3" fill="#182a17"/>
<ellipse cx="660.1" cy="361.0" rx="2.4" ry="1.5" fill="#182a17"/>
<ellipse cx="690.9" cy="363.5" rx="1.2" ry="1.9" fill="#1c321b"/>
<ellipse cx="654.0" cy="345.1" rx="1.4" ry="1.6" fill="#325536"/>
<ellipse cx="651.0" cy="339.1" rx="1.6" ry="1.6" fill="#1c321b"/>
<ellipse cx="697.7" cy="344.8" rx="2.2" ry="1.4" fill="#325536"/>
<ellipse cx="697.8" cy="302.2" rx="1.9" ry="1.2" fill="#182a17"/>
<ellipse cx="669.8" cy="348.2" rx="2.3" ry="1.6" fill="#1c321b"/>
<ellipse cx="697.4" cy="374.0" rx="1.9" ry="2.3" fill="#36593a"/>
<ellipse cx="662.7" cy="312.3" rx="1.5" ry="1.9" fill="#182a17"/>
<ellipse cx="689.0" cy="298.1" rx="1.5" ry="1.0" fill="#2d4f2e"/>
<ellipse cx="697.2" cy="367.5" rx="2.7" ry="1.3" fill="#36593a"/>
<ellipse cx="671.1" cy="346.0" rx="2.0" ry="1.4" fill="#182a17"/>
<ellipse cx="714.1" cy="330.0" rx="1.2" ry="1.1" fill="#325536"/>
<ellipse cx="689.5" cy="304.9" rx="2.9" ry="1.2" fill="#2d4f2e"/>
<ellipse cx="715.7" cy="347.9" rx="1.8" ry="1.6" fill="#1c321b"/>
<ellipse cx="662.3" cy="359.5" rx="2.0" ry="1.0" fill="#2d4f2e"/>
<ellipse cx="691.5" cy="323.5" rx="2.8" ry="2.2" fill="#36593a"/>
<ellipse cx="684.0" cy="362.1" rx="2.8" ry="1.5" fill="#233b22"/>
<ellipse cx="657.7" cy="309.3" rx="1.7" ry="1.2" fill="#2d4f2e"/>
<ellipse cx="678.5" cy="307.1" rx="1.1" ry="1.7" fill="#36593a"/>
<ellipse cx="704.2" cy="301.3" rx="2.8" ry="2.0" fill="#182a17"/>
<ellipse cx="697.1" cy="357.3" rx="2.0" ry="2.2" fill="#36593a"/>
<ellipse cx="705.2" cy="372.1" rx="2.1" ry="2.3" fill="#325536"/>
<ellipse cx="670.4" cy="313.2" rx="2.2" ry="1.3" fill="#182a17"/>
<ellipse cx="674.9" cy="337.7" rx="1.4" ry="1.9" fill="#233b22"/>
<ellipse cx="676.9" cy="352.4" rx="1.7" ry="2.3" fill="#325536"/>
<ellipse cx="676.6" cy="324.3" rx="2.2" ry="1.9" fill="#182a17"/>
<ellipse cx="691.7" cy="338.4" rx="1.5" ry="2.0" fill="#182a17"/>
<ellipse cx="712.9" cy="318.8" rx="1.9" ry="2.3" fill="#36593a"/>
<ellipse cx="712.6" cy="377.0" rx="1.5" ry="2.1" fill="#1c321b"/>
<ellipse cx="712.8" cy="316.1" rx="2.8" ry="1.2" fill="#325536"/>
<ellipse cx="665.0" cy="368.1" rx="2.8" ry="1.1" fill="#36593a"/>
<ellipse cx="715.7" cy="321.3" rx="1.1" ry="1.7" fill="#182a17"/>
<ellipse cx="684.2" cy="322.4" rx="2.6" ry="2.4" fill="#2d4f2e"/>
<ellipse cx="656.4" cy="348.1" rx="1.6" ry="1.7" fill="#36593a"/>
<ellipse cx="701.9" cy="322.0" rx="1.6" ry="2.0" fill="#2d4f2e"/>
<ellipse cx="691.6" cy="327.6" rx="1.2" ry="2.0" fill="#1c321b"/>
<ellipse cx="705.4" cy="307.9" rx="1.1" ry="1.4" fill="#182a17"/>
<ellipse cx="655.6" cy="350.9" rx="1.0" ry="2.2" fill="#1c321b"/>
<ellipse cx="702.7" cy="356.9" rx="1.3" ry="2.3" fill="#233b22"/>
<ellipse cx="684.5" cy="338.6" rx="2.9" ry="2.2" fill="#36593a"/>
<ellipse cx="687.1" cy="377.6" rx="2.6" ry="1.8" fill="#1c321b"/>
<ellipse cx="694.9" cy="302.1" rx="1.2" ry="1.4" fill="#2d4f2e"/>
<ellipse cx="696.8" cy="368.2" rx="1.6" ry="1.6" fill="#1c321b"/>
<ellipse cx="672.7" cy="311.6" rx="1.0" ry="1.1" fill="#1c321b"/>
<ellipse cx="705.7" cy="346.3" rx="2.0" ry="2.0" fill="#2d4f2e"/>
<ellipse cx="662.8" cy="358.2" rx="2.7" ry="1.2" fill="#182a17"/>
<ellipse cx="696.1" cy="316.3" rx="1.2" ry="1.8" fill="#2d4f2e"/>
<ellipse cx="665.2" cy="353.9" rx="2.3" ry="1.6" fill="#233b22"/>
<ellipse cx="689.1" cy="307.2" rx="2.0" ry="1.1" fill="#2d4f2e"/>
<ellipse cx="702.5" cy="355.3" rx="3.0" ry="1.6" fill="#1c321b"/>
<ellipse cx="655.2" cy="340.2" rx="1.6" ry="1.6" fill="#1c321b"/>
<ellipse cx="687.0" cy="350.3" rx="1.7" ry="1.5" fill="#325536"/>
<ellipse cx="664.2" cy="357.0" rx="1.1" ry="1.0" fill="#233b22"/>
<ellipse cx="673.8" cy="336.6" rx="1.9" ry="2.1" fill="#36593a"/>
<ellipse cx="682.1" cy="344.5" rx="2.7" ry="1.6" fill="#233b22"/>
<ellipse cx="667.1" cy="355.7" rx="1.5" ry="1.4" fill="#2d4f2e"/>
<ellipse cx="673.0" cy="313.8" rx="1.8" ry="1.3" fill="#182a17"/>
<ellipse cx="708.2" cy="352.4" rx="2.4" ry="2.2" fill="#2d4f2e"/>
<ellipse cx="659.0" cy="313.0" rx="2.1" ry="1.5" fill="#233b22"/>
<ellipse cx="662.1" cy="368.9" rx="1.0" ry="1.0" fill="#1c321b"/>
<ellipse cx="672.9" cy="332.3" rx="1.6" ry="1.9" fill="#1c321b"/>
<ellipse cx="651.0" cy="343.6" rx="1.6" ry="1.2" fill="#325536"/>
<ellipse cx="707.7" cy="307.0" rx="1.6" ry="2.1" fill="#325536"/>
<ellipse cx="656.5" cy="308.0" rx="2.5" ry="1.5" fill="#233b22"/>
<ellipse cx="716.5" cy="375.2" rx="2.5" ry="1.7" fill="#36593a"/>
<ellipse cx="677.5" cy="306.8" rx="2.7" ry="2.4" fill="#233b22"/>
<ellipse cx="705.5" cy="317.4" rx="2.2" ry="1.1" fill="#1c321b"/>
<ellipse cx="664.1" cy="374.7" rx="2.5" ry="1.9" fill="#36593a"/>
<ellipse cx="651.6" cy="372.9" rx="1.6" ry="2.0" fill="#233b22"/>
<ellipse cx="683.9" cy="305.1" rx="2.7" ry="1.6" fill="#36593a"/>
<ellipse cx="708.0" cy="312.0" rx="2.5" ry="2.0" fill="#233b22"/>
<ellipse cx="703.5" cy="348.7" rx="2.9" ry="2.1" fill="#36593a"/>
<ellipse cx="682.6" cy="302.9" rx="2.5" ry="2.2" fill="#233b22"/>
<ellipse cx="710.7" cy="330.5" rx="2.2" ry="1.7" fill="#182a17"/>
<ellipse cx="706.1" cy="325.0" rx="1.9" ry="2.2" fill="#325536"/>
<ellipse cx="697.0" cy="340.4" rx="2.1" ry="1.2" fill="#233b22"/>
<ellipse cx="705.4" cy="368.7" rx="2.0" ry="1.9" fill="#2d4f2e"/>
<ellipse cx="711.8" cy="337.8" rx="2.4" ry="1.8" fill="#325536"/>
<ellipse cx="676.3" cy="323.0" rx="2.6" ry="2.3" fill="#233b22"/>
<ellipse cx="654.6" cy="343.6" rx="1.6" ry="1.2" fill="#36593a"/>
<ellipse cx="655.9" cy="321.8" rx="2.4" ry="1.5" fill="#233b22"/>
<ellipse cx="679.8" cy="363.0" rx="1.2" ry="1.6" fill="#1c321b"/>
<ellipse cx="675.8" cy="358.5" rx="2.3" ry="2.2" fill="#233b22"/>
<ellipse cx="663.2" cy="330.6" rx="2.3" ry="2.0" fill="#233b22"/>
<ellipse cx="689.7" cy="343.9" rx="2.7" ry="2.4" fill="#2d4f2e"/>
<ellipse cx="699.9" cy="357.0" rx="2.4" ry="1.1" fill="#1c321b"/>
<ellipse cx="701.2" cy="371.1" rx="1.7" ry="1.3" fill="#2d4f2e"/>
<ellipse cx="655.6" cy="341.0" rx="1.7" ry="1.1" fill="#233b22"/>
<ellipse cx="658.7" cy="371.1" rx="1.1" ry="2.0" fill="#325536"/>
<ellipse cx="691.6" cy="337.6" rx="1.5" ry="1.4" fill="#182a17"/>
<ellipse cx="689.5" cy="354.8" rx="2.6" ry="1.4" fill="#325536"/>
<ellipse cx="672.6" cy="332.6" rx="2.0" ry="2.2" fill="#233b22"/>
<ellipse cx="669.0" cy="302.2" rx="2.4" ry="1.3" fill="#233b22"/>
<ellipse cx="699.1" cy="340.1" rx="1.6" ry="1.8" fill="#2d4f2e"/>
<ellipse cx="691.6" cy="335.1" rx="1.8" ry="2.4" fill="#1c321b"/>
<ellipse cx="711.7" cy="364.4" rx="2.2" ry="1.3" fill="#182a17"/>
<ellipse cx="656.9" cy="303.9" rx="2.4" ry="1.7" fill="#182a17"/>
<ellipse cx="670.0" cy="347.2" rx="2.7" ry="1.4" fill="#36593a"/>
<ellipse cx="675.9" cy="375.9" rx="2.3" ry="1.9" fill="#182a17"/>
<ellipse cx="673.3" cy="305.3" rx="1.1" ry="1.8" fill="#233b22"/>
<ellipse cx="713.9" cy="326.8" rx="2.8" ry="1.0" fill="#233b22"/>
<ellipse cx="664.0" cy="306.0" rx="1.3" ry="2.1" fill="#233b22"/>
<ellipse cx="694.2" cy="352.7" rx="1.3" ry="2.2" fill="#233b22"/>
<ellipse cx="666.1" cy="327.2" rx="1.0" ry="2.0" fill="#36593a"/>
<ellipse cx="652.3" cy="339.7" rx="2.1" ry="2.0" fill="#233b22"/>
<ellipse cx="705.7" cy="308.0" rx="2.2" ry="1.5" fill="#182a17"/>
<ellipse cx="668.7" cy="321.3" rx="2.7" ry="1.5" fill="#2d4f2e"/>
<ellipse cx="683.5" cy="369.0" rx="3.0" ry="2.1" fill="#325536"/>
<ellipse cx="695.5" cy="357.3" rx="2.5" ry="1.1" fill="#2d4f2e"/>
<ellipse cx="704.3" cy="362.4" rx="1.9" ry="1.1" fill="#1c321b"/>
<ellipse cx="699.8" cy="304.2" rx="1.2" ry="1.2" fill="#182a17"/>
<ellipse cx="714.6" cy="376.8" rx="2.1" ry="1.0" fill="#2d4f2e"/>
<ellipse cx="666.7" cy="357.5" rx="2.3" ry="2.4" fill="#325536"/>
<ellipse cx="712.9" cy="365.6" rx="1.2" ry="1.8" fill="#233b22"/>
<ellipse cx="672.5" cy="300.7" rx="2.5" ry="2.1" fill="#36593a"/>
<ellipse cx="697.7" cy="331.8" rx="3.0" ry="1.6" fill="#182a17"/>
<ellipse cx="652.5" cy="315.9" rx="2.7" ry="2.0" fill="#36593a"/>
<ellipse cx="682.8" cy="372.7" rx="2.5" ry="2.3" fill="#2d4f2e"/>
<ellipse cx="710.5" cy="333.3" rx="1.9" ry="2.2" fill="#1c321b"/>
<ellipse cx="650.8" cy="323.6" rx="1.4" ry="1.9" fill="#233b22"/>
<ellipse cx="658.5" cy="366.8" rx="2.8" ry="1.2" fill="#1c321b"/>
<ellipse cx="669.5" cy="330.1" rx="2.5" ry="2.4" fill="#36593a"/>
<ellipse cx="709.3" cy="340.4" rx="2.6" ry="2.2" fill="#36593a"/>
<ellipse cx="697.8" cy="303.4" rx="1.3" ry="1.0" fill="#233b22"/>
<ellipse cx="698.1" cy="363.3" rx="1.4" ry="2.1" fill="#2d4f2e"/>
<ellipse cx="673.9" cy="356.0" rx="1.7" ry="2.3" fill="#36593a"/>
<ellipse cx="682.5" cy="375.6" rx="2.7" ry="2.3" fill="#325536"/>
<ellipse cx="658.2" cy="354.1" rx="1.9" ry="1.1" fill="#182a17"/>
<ellipse cx="693.8" cy="362.0" rx="1.6" ry="2.3" fill="#1c321b"/>
<ellipse cx="652.3" cy="369.1" rx="1.6" ry="1.9" fill="#1c321b"/>
<ellipse cx="654.2" cy="329.9" rx="1.8" ry="1.1" fill="#36593a"/>
<ellipse cx="707.1" cy="337.5" rx="1.1" ry="1.2" fill="#233b22"/>
<ellipse cx="665.6" cy="363.3" rx="1.7" ry="1.7" fill="#1c321b"/>
<ellipse cx="657.7" cy="347.7" rx="2.7" ry="1.3" fill="#1c321b"/>
<ellipse cx="700.5" cy="326.6" rx="2.3" ry="1.1" fill="#325536"/>
<ellipse cx="681.9" cy="331.9" rx="1.5" ry="1.6" fill="#325536"/>
<ellipse cx="671.5" cy="376.1" rx="2.7" ry="2.0" fill="#325536"/>
<ellipse cx="663.1" cy="309.0" rx="1.4" ry="2.2" fill="#233b22"/>
<ellipse cx="691.1" cy="336.2" rx="2.4" ry="1.5" fill="#325536"/>
<ellipse cx="700.7" cy="338.2" rx="2.0" ry="1.9" fill="#182a17"/>
<ellipse cx="696.6" cy="348.4" rx="2.7" ry="1.3" fill="#2d4f2e"/>
<ellipse cx="686.8" cy="344.6" rx="2.6" ry="1.0" fill="#2d4f2e"/>
<ellipse cx="688.3" cy="375.0" rx="1.9" ry="2.4" fill="#233b22"/>
<ellipse cx="703.2" cy="366.7" rx="1.6" ry="1.6" fill="#182a17"/>
<ellipse cx="681.1" cy="337.1" rx="1.9" ry="1.7" fill="#1c321b"/>
<ellipse cx="716.5" cy="340.6" rx="1.7" ry="2.0" fill="#2d4f2e"/>
<ellipse cx="693.5" cy="369.2" rx="2.9" ry="1.7" fill="#325536"/>
<ellipse cx="667.1" cy="298.0" rx="2.0" ry="1.4" fill="#2d4f2e"/>
<ellipse cx="689.6" cy="335.0" rx="2.9" ry="2.0" fill="#182a17"/>
<ellipse cx="692.0" cy="338.6" rx="2.2" ry="1.6" fill="#1c321b"/>
<ellipse cx="697.9" cy="331.0" rx="1.5" ry="2.2" fill="#1c321b"/>
<ellipse cx="687.1" cy="375.8" rx="1.6" ry="1.7" fill="#1c321b"/>
<ellipse cx="687.3" cy="308.5" rx="1.9" ry="2.1" fill="#182a17"/>
<ellipse cx="651.3" cy="342.1" rx="2.1" ry="1.4" fill="#36593a"/>
<ellipse cx="712.7" cy="316.1" rx="1.8" ry="2.0" fill="#1c321b"/>
<ellipse cx="651.8" cy="346.9" rx="2.2" ry="1.7" fill="#325536"/>
<ellipse cx="669.8" cy="311.2" rx="1.7" ry="1.4" fill="#325536"/>
<ellipse cx="663.0" cy="376.8" rx="1.6" ry="1.8" fill="#182a17"/>
<ellipse cx="673.5" cy="359.5" rx="2.5" ry="2.2" fill="#2d4f2e"/>
<ellipse cx="683.8" cy="342.5" rx="1.8" ry="2.0" fill="#233b22"/>
<ellipse cx="684.3" cy="348.5" rx="2.8" ry="1.7" fill="#233b22"/>
<ellipse cx="676.3" cy="355.2" rx="1.2" ry="1.7" fill="#36593a"/>
<ellipse cx="699.4" cy="331.4" rx="1.3" ry="1.4" fill="#1c321b"/>
<ellipse cx="667.1" cy="320.4" rx="2.5" ry="1.5" fill="#182a17"/>
<ellipse cx="652.6" cy="340.8" rx="1.8" ry="1.6" fill="#2d4f2e"/>
<ellipse cx="694.3" cy="314.5" rx="2.8" ry="2.2" fill="#182a17"/>
<ellipse cx="654.4" cy="371.3" rx="2.4" ry="1.9" fill="#2d4f2e"/>
<ellipse cx="679.8" cy="321.3" rx="2.2" ry="1.8" fill="#1c321b"/>
<ellipse cx="686.5" cy="338.9" rx="1.9" ry="2.3" fill="#182a17"/>
<ellipse cx="675.8" cy="344.0" rx="1.9" ry="1.9" fill="#182a17"/>
<ellipse cx="657.7" cy="304.5" rx="1.1" ry="1.1" fill="#325536"/>
<ellipse cx="705.1" cy="347.4" rx="2.0" ry="1.7" fill="#182a17"/>
<ellipse cx="716.0" cy="310.3" rx="2.6" ry="1.8" fill="#233b22"/>
<ellipse cx="660.9" cy="335.5" rx="1.9" ry="1.8" fill="#36593a"/>
<ellipse cx="666.7" cy="372.9" rx="2.4" ry="1.8" fill="#1c321b"/>
<ellipse cx="653.7" cy="317.7" rx="2.9" ry="1.6" fill="#2d4f2e"/>
<ellipse cx="707.1" cy="300.3" rx="2.0" ry="1.5" fill="#2d4f2e"/>
<ellipse cx="664.9" cy="326.3" rx="1.7" ry="1.7" fill="#2d4f2e"/>
<ellipse cx="676.0" cy="322.4" rx="2.8" ry="1.1" fill="#325536"/>
<ellipse cx="673.8" cy="307.5" rx="1.3" ry="1.2" fill="#182a17"/>
<ellipse cx="657.2" cy="349.7" rx="1.8" ry="2.2" fill="#1c321b"/>
<ellipse cx="711.9" cy="311.9" rx="2.7" ry="1.4" fill="#36593a"/>
<ellipse cx="687.2" cy="346.7" rx="1.1" ry="1.3" fill="#2d4f2e"/>
<ellipse cx="715.8" cy="345.3" rx="2.7" ry="2.3" fill="#325536"/>
<ellipse cx="657.7" cy="334.7" rx="1.5" ry="1.8" fill="#36593a"/>
<ellipse cx="680.8" cy="322.1" rx="1.1" ry="1.5" fill="#325536"/>
</g>
<path d="M655 302 L655.5 330 L658.5 349 L655 362 L651 376" fill="none" stroke="#141c12" stroke-width="1.6"/>
<path d="M678.5 321 L692.5 320.5 L700 341 L684.5 344.5 Z" fill="#77604c" stroke="none" stroke-width="0"/>
<rect x="691.8" y="338.9" width="1.6" height="1.2" fill="#6a5444"/>
<rect x="693.0" y="328.3" width="1.6" height="1.2" fill="#86705c"/>
<rect x="687.0" y="336.5" width="1.6" height="1.2" fill="#937f6a"/>
<rect x="692.3" y="329.8" width="1.6" height="1.2" fill="#6a5444"/>
<rect x="694.4" y="339.9" width="1.6" height="1.2" fill="#86705c"/>
<rect x="684.1" y="333.3" width="1.6" height="1.2" fill="#6a5444"/>
<rect x="688.5" y="328.7" width="1.6" height="1.2" fill="#937f6a"/>
<rect x="695.6" y="331.1" width="1.6" height="1.2" fill="#86705c"/>
<rect x="687.4" y="337.4" width="1.6" height="1.2" fill="#937f6a"/>
<rect x="692.6" y="329.3" width="1.6" height="1.2" fill="#6a5444"/>
<rect x="684.0" y="329.2" width="1.6" height="1.2" fill="#6a5444"/>
<rect x="684.5" y="325.2" width="1.6" height="1.2" fill="#937f6a"/>
<rect x="696.7" y="328.0" width="1.6" height="1.2" fill="#6a5444"/>
<rect x="686.6" y="337.3" width="1.6" height="1.2" fill="#937f6a"/>
<rect x="689.6" y="332.0" width="1.6" height="1.2" fill="#6a5444"/>
<rect x="690.0" y="330.3" width="1.6" height="1.2" fill="#86705c"/>
<rect x="685.3" y="323.3" width="1.6" height="1.2" fill="#86705c"/>
<rect x="681.0" y="330.0" width="1.6" height="1.2" fill="#937f6a"/>
<rect x="681.2" y="334.6" width="1.6" height="1.2" fill="#6a5444"/>
<rect x="682.8" y="327.3" width="1.6" height="1.2" fill="#937f6a"/>
<rect x="692.5" y="328.7" width="1.6" height="1.2" fill="#937f6a"/>
<rect x="685.2" y="340.1" width="1.6" height="1.2" fill="#937f6a"/>
<rect x="688.4" y="336.8" width="1.6" height="1.2" fill="#937f6a"/>
<rect x="683.6" y="333.7" width="1.6" height="1.2" fill="#86705c"/>
<rect x="690.8" y="328.2" width="1.6" height="1.2" fill="#6a5444"/>
<rect x="696.9" y="335.7" width="1.6" height="1.2" fill="#86705c"/>
<rect x="682.3" y="336.4" width="1.6" height="1.2" fill="#86705c"/>
<rect x="682.3" y="336.9" width="1.6" height="1.2" fill="#86705c"/>
<rect x="689.4" y="332.6" width="1.6" height="1.2" fill="#6a5444"/>
<rect x="684.3" y="337.6" width="1.6" height="1.2" fill="#6a5444"/>
<path d="M725 300.5 L736 299.5 L736 309.5 L727 310.5 Z" fill="#3f8f45" stroke="none" stroke-width="0"/>
<path d="M717 346 L726 344 L728 349 L719 351 Z" fill="#8e3a30" stroke="none" stroke-width="0"/>
<path d="M723 354 L731 352 L734 360 L726 362 Z" fill="#8a5a45" stroke="none" stroke-width="0"/>
</g>
<g filter="url(#b1)" opacity="0.75">
<path d="M685 288 L691 310 L704 345 L722 367" fill="none" stroke="#4c4743" stroke-width="1.5"/>
<path d="M655 288 L640 302 L618 321" fill="none" stroke="#4c4743" stroke-width="1.5"/>
<path d="M700 288 L716 318 L737 345" fill="none" stroke="#544f4a" stroke-width="1.1"/>
<path d="M618 338 L640 326 L653 318" fill="none" stroke="#544f4a" stroke-width="1.0"/>
<path d="M618 360 L640 350 L655 345" fill="none" stroke="#544f4a" stroke-width="1.0"/>
<path d="M618 371 L632 375 L645 380" fill="none" stroke="#544f4a" stroke-width="1.3"/>
</g>
<path d="M618 401.5 L634 389 L644.5 380.5 L652 378.8 L680.5 379.5 L705.5 374 L726 368.4 L738 365" fill="none" stroke="#6f625c" stroke-width="2.6"/>
<path d="M709.5 374 L717 372.5 L719 379 L711.5 380.5 Z" fill="#d58a62" stroke="none" stroke-width="0"/>
<path d="M665.6 315 L668 335 L672.5 361 L671 376" fill="none" stroke="#2b3fb5" stroke-width="0.7" stroke-dasharray="1 1"/>
<text x="688.5" y="378.4" font-size="3.6" text-anchor="middle" fill="#d8d4cc" font-weight="normal">Exutório / Bacia</text>
</g>
<text x="678" y="408.7" font-size="4.15" text-anchor="middle" fill="#000" font-weight="bold" stroke="#000" stroke-width="0.2">Situação real (representação exutório e calçada)</text>
<rect x="655.6" y="412.3" width="51.6" height="13.2" fill="#fff" stroke="#2733cf" stroke-width="0.9"/>
<text x="679.3" y="415.6" font-size="3.6" text-anchor="middle" fill="#10106a" font-weight="bold" stroke="#10106a" stroke-width="0.2">LEGENDA</text>
<text x="664.5" y="421.6" font-size="3.4" text-anchor="middle" fill="#000" font-weight="bold" stroke="#000" stroke-width="0.15">Calçada</text>
<rect x="682.3" y="417.8" width="11" height="3.2" fill="#3b49d0" stroke="none" stroke-width="0"/>
<text x="691" y="421" font-size="3.4" text-anchor="middle" fill="#0a0a50" font-weight="bold" stroke="#0a0a50" stroke-width="0.15">Canalização</text>
<text x="650.3" y="435.3" font-size="2.3" text-anchor="start" fill="#444" font-weight="normal" stroke="#666" stroke-width="0.12">PROJETO</text>
<text x="704.8" y="439.15000000000003" font-size="3.5" text-anchor="middle" fill="#000" font-weight="bold" stroke="#000" stroke-width="0.22">PROJETO DE CANALIZAÇÃO DE RIOS</text>
<text x="650.3" y="443.0" font-size="2.3" text-anchor="start" fill="#444" font-weight="normal" stroke="#666" stroke-width="0.12">ENDEREÇO</text>
<text x="650.3" y="448.55" font-size="2.5" text-anchor="start" fill="#000" font-weight="bold" stroke="#000" stroke-width="0.22">Jardim Morada do Sol - Jardim Flamingos</text>
<text x="650.3" y="456.6" font-size="2.3" text-anchor="start" fill="#444" font-weight="normal" stroke="#666" stroke-width="0.12">CIDADE</text>
<text x="716.2" y="456.6" font-size="2.3" text-anchor="start" fill="#444" font-weight="normal" stroke="#666" stroke-width="0.12">ESTADO</text>
<text x="650.3" y="459.85" font-size="2.6" text-anchor="start" fill="#000" font-weight="bold" stroke="#000" stroke-width="0.22">APUCARANA</text>
<text x="716.2" y="459.85" font-size="2.6" text-anchor="start" fill="#000" font-weight="bold" stroke="#000" stroke-width="0.22">PARANÁ</text>
<line x1="650.3" y1="461.3" x2="759.7" y2="461.3" stroke="#8a8a8a" stroke-width="0.5"/>
<text x="650.3" y="464.0" font-size="2.3" text-anchor="start" fill="#444" font-weight="normal" stroke="#666" stroke-width="0.12">CLIENTE</text>
<text x="705" y="470.35" font-size="2.6" text-anchor="middle" fill="#000" font-weight="bold" stroke="#000" stroke-width="0.22">ANDREIA SANTOS LEMOS</text>
<line x1="650.3" y1="482" x2="759.7" y2="482" stroke="#8a8a8a" stroke-width="0.5"/>
<text x="650.3" y="484.3" font-size="2.3" text-anchor="start" fill="#444" font-weight="normal" stroke="#666" stroke-width="0.12">ARQUITETO</text>
<text x="704.3" y="490.75" font-size="2.7" text-anchor="middle" fill="#000" font-weight="bold" stroke="#000" stroke-width="0.22">ANA LAURENTI VIDOR VIEIRA</text>
<line x1="650.3" y1="502.2" x2="759.7" y2="502.2" stroke="#8a8a8a" stroke-width="0.5"/>
<text x="650.3" y="504.40000000000003" font-size="2.3" text-anchor="start" fill="#444" font-weight="normal" stroke="#666" stroke-width="0.12">RESPONSÁVEL PELO</text>
<text x="716.2" y="504.6" font-size="2.3" text-anchor="start" fill="#444" font-weight="normal" stroke="#666" stroke-width="0.12">ESCALA</text>
<text x="759.7" y="504.6" font-size="2.3" text-anchor="end" fill="#444" font-weight="normal" stroke="#666" stroke-width="0.12">UNIDADE/ÁREA/FOLHA</text>
<text x="650.3" y="507.25" font-size="2.9" text-anchor="start" fill="#000" font-weight="bold" stroke="#000" stroke-width="0.22">Projeto Arquitetônico</text>
<text x="759.7" y="507.25" font-size="2.6" text-anchor="end" fill="#000" font-weight="bold" stroke="#000" stroke-width="0.22">02</text>
<text x="716.2" y="509.35" font-size="2.6" text-anchor="start" fill="#000" font-weight="bold" stroke="#000" stroke-width="0.22">Indicadas</text>
<text x="650.3" y="511.3" font-size="2.3" text-anchor="start" fill="#444" font-weight="normal" stroke="#666" stroke-width="0.12">CONTEÚDO</text>
<text x="704.8" y="516.3499999999999" font-size="2.75" text-anchor="middle" fill="#000" font-weight="bold" stroke="#000" stroke-width="0.22">CORTES, PLANTA BAIXA E 3D</text>
<text x="650.3" y="521.5999999999999" font-size="2.3" text-anchor="start" fill="#444" font-weight="normal" stroke="#666" stroke-width="0.12">RESPONSÁVEL</text>
<text x="716.2" y="521.3" font-size="2.3" text-anchor="start" fill="#444" font-weight="normal" stroke="#666" stroke-width="0.12">DATA</text>
<text x="759.7" y="521.3" font-size="2.3" text-anchor="end" fill="#444" font-weight="normal" stroke="#666" stroke-width="0.12">PRANCHA</text>
<text x="650.3" y="524.75" font-size="2.9" text-anchor="start" fill="#000" font-weight="bold" stroke="#000" stroke-width="0.22">Arq. Urbanista | Reg. CAU</text>
<text x="716.2" y="524.75" font-size="2.8" text-anchor="start" fill="#000" font-weight="bold" stroke="#000" stroke-width="0.22">SET/2023</text>
<text x="650.3" y="529.5" font-size="2.3" text-anchor="start" fill="#444" font-weight="normal" stroke="#666" stroke-width="0.12">ARQUIVO DIGITAL</text>
<text x="716.2" y="529.5" font-size="2.3" text-anchor="start" fill="#444" font-weight="normal" stroke="#666" stroke-width="0.12">REVISÃO</text>
<text x="650.3" y="532.75" font-size="2.9" text-anchor="start" fill="#000" font-weight="bold" stroke="#000" stroke-width="0.22">Prejuízos Inundação</text>
<text x="759.7" y="531.55" font-size="2.6" text-anchor="end" fill="#000" font-weight="bold" stroke="#000" stroke-width="0.22">00</text>
<line x1="650.3" y1="533.6" x2="759.7" y2="533.6" stroke="#bbb" stroke-width="0.5"/>
<clipPath id="c3d"><rect x="332.4" y="321.6" width="261.4" height="161.39999999999998"/></clipPath>
<g clip-path="url(#c3d)">
<rect x="332.4" y="321.6" width="261.4" height="161.39999999999998" fill="url(#sky)" stroke="none" stroke-width="0"/>
<path d="M369.1 418.8 L408 433.5 L418.6 439.2 L435.5 460 L447 460 L460.3 443 L476.5 437 L500.8 433 L540.3 427 L535.7 480.3 L379.5 466.8 Z" fill="#6e4c40" stroke="none" stroke-width="0"/>
<clipPath id="csf"><path d="M369.1 418.8 L408 433.5 L418.6 439.2 L435.5 460 L447 460 L460.3 443 L476.5 437 L500.8 433 L540.3 427 L535.7 480.3 L379.5 466.8 Z"/></clipPath>
<g clip-path="url(#csf)" filter="url(#b2)">
<ellipse cx="476.4" cy="465.5" rx="3.5" ry="2.4" fill="#80594b"/>
<ellipse cx="373.0" cy="447.8" rx="3.9" ry="2.0" fill="#7a5648"/>
<ellipse cx="387.7" cy="448.0" rx="2.1" ry="1.8" fill="#80594b"/>
<ellipse cx="411.4" cy="464.8" rx="2.5" ry="1.3" fill="#5f4036"/>
<ellipse cx="395.8" cy="469.0" rx="1.8" ry="1.9" fill="#7a5648"/>
<ellipse cx="391.0" cy="480.2" rx="1.5" ry="2.2" fill="#7a5648"/>
<ellipse cx="519.8" cy="436.5" rx="3.9" ry="1.8" fill="#7a5648"/>
<ellipse cx="399.6" cy="480.0" rx="2.0" ry="2.4" fill="#5f4036"/>
<ellipse cx="420.0" cy="441.1" rx="1.9" ry="1.2" fill="#664438"/>
<ellipse cx="425.7" cy="470.3" rx="3.0" ry="1.9" fill="#745044"/>
<ellipse cx="379.5" cy="440.7" rx="2.3" ry="2.0" fill="#7a5648"/>
<ellipse cx="451.7" cy="463.1" rx="1.6" ry="2.5" fill="#664438"/>
<ellipse cx="533.2" cy="440.9" rx="2.5" ry="1.8" fill="#5f4036"/>
<ellipse cx="431.7" cy="455.0" rx="1.5" ry="1.1" fill="#7a5648"/>
<ellipse cx="476.5" cy="479.1" rx="1.8" ry="1.4" fill="#5f4036"/>
<ellipse cx="427.9" cy="440.7" rx="2.8" ry="2.2" fill="#664438"/>
<ellipse cx="470.6" cy="468.0" rx="2.4" ry="1.4" fill="#5f4036"/>
<ellipse cx="532.6" cy="423.8" rx="2.4" ry="1.9" fill="#7a5648"/>
<ellipse cx="427.2" cy="477.1" rx="2.9" ry="1.5" fill="#745044"/>
<ellipse cx="421.3" cy="469.1" rx="3.1" ry="2.1" fill="#745044"/>
<ellipse cx="541.4" cy="428.3" rx="1.6" ry="2.5" fill="#80594b"/>
<ellipse cx="528.7" cy="420.0" rx="3.4" ry="1.5" fill="#745044"/>
<ellipse cx="447.3" cy="445.0" rx="1.6" ry="2.4" fill="#664438"/>
<ellipse cx="507.5" cy="439.4" rx="2.0" ry="2.5" fill="#80594b"/>
<ellipse cx="533.3" cy="458.3" rx="3.5" ry="1.2" fill="#5f4036"/>
<ellipse cx="432.9" cy="421.8" rx="2.6" ry="1.2" fill="#80594b"/>
<ellipse cx="516.3" cy="480.5" rx="2.6" ry="1.7" fill="#745044"/>
<ellipse cx="451.4" cy="436.6" rx="2.5" ry="1.2" fill="#5f4036"/>
<ellipse cx="511.0" cy="452.0" rx="1.9" ry="2.4" fill="#745044"/>
<ellipse cx="399.3" cy="449.5" rx="2.8" ry="1.8" fill="#80594b"/>
<ellipse cx="430.9" cy="468.3" rx="3.4" ry="2.0" fill="#664438"/>
<ellipse cx="500.2" cy="441.3" rx="3.3" ry="1.4" fill="#5f4036"/>
<ellipse cx="414.1" cy="480.8" rx="3.3" ry="2.4" fill="#745044"/>
<ellipse cx="481.0" cy="455.2" rx="1.5" ry="1.8" fill="#745044"/>
<ellipse cx="424.7" cy="435.5" rx="2.2" ry="1.8" fill="#745044"/>
<ellipse cx="428.5" cy="459.2" rx="3.3" ry="2.2" fill="#745044"/>
<ellipse cx="528.5" cy="429.0" rx="3.7" ry="1.7" fill="#745044"/>
<ellipse cx="534.4" cy="451.2" rx="2.8" ry="1.2" fill="#745044"/>
<ellipse cx="531.1" cy="448.5" rx="3.2" ry="2.1" fill="#5f4036"/>
<ellipse cx="397.9" cy="467.9" rx="3.0" ry="2.0" fill="#5f4036"/>
<ellipse cx="420.7" cy="453.4" rx="3.7" ry="1.4" fill="#664438"/>
<ellipse cx="402.0" cy="455.5" rx="3.1" ry="1.3" fill="#7a5648"/>
<ellipse cx="477.8" cy="420.7" rx="2.7" ry="1.3" fill="#664438"/>
<ellipse cx="523.2" cy="425.1" rx="3.9" ry="1.7" fill="#80594b"/>
<ellipse cx="374.2" cy="447.8" rx="2.5" ry="1.9" fill="#80594b"/>
<ellipse cx="403.6" cy="464.0" rx="2.4" ry="1.5" fill="#745044"/>
<ellipse cx="516.9" cy="473.4" rx="3.2" ry="1.8" fill="#664438"/>
<ellipse cx="463.7" cy="437.3" rx="2.2" ry="1.8" fill="#80594b"/>
<ellipse cx="419.0" cy="440.5" rx="1.8" ry="1.6" fill="#80594b"/>
<ellipse cx="479.8" cy="441.6" rx="1.9" ry="1.9" fill="#80594b"/>
<ellipse cx="451.0" cy="430.7" rx="1.8" ry="1.1" fill="#664438"/>
<ellipse cx="434.4" cy="438.9" rx="3.8" ry="1.8" fill="#745044"/>
<ellipse cx="477.5" cy="475.0" rx="2.4" ry="1.6" fill="#7a5648"/>
<ellipse cx="453.9" cy="448.7" rx="3.3" ry="1.6" fill="#7a5648"/>
<ellipse cx="471.7" cy="434.6" rx="4.0" ry="1.7" fill="#5f4036"/>
<ellipse cx="371.4" cy="478.5" rx="2.3" ry="2.4" fill="#7a5648"/>
<ellipse cx="451.0" cy="425.8" rx="3.1" ry="1.7" fill="#745044"/>
<ellipse cx="375.0" cy="426.7" rx="2.5" ry="1.7" fill="#80594b"/>
<ellipse cx="415.6" cy="477.9" rx="3.5" ry="1.4" fill="#745044"/>
<ellipse cx="514.8" cy="464.2" rx="2.2" ry="1.7" fill="#5f4036"/>
<ellipse cx="458.2" cy="473.3" rx="3.7" ry="2.3" fill="#664438"/>
<ellipse cx="500.3" cy="437.2" rx="2.8" ry="1.5" fill="#745044"/>
<ellipse cx="495.2" cy="419.7" rx="2.4" ry="2.0" fill="#80594b"/>
<ellipse cx="391.1" cy="418.2" rx="2.9" ry="2.0" fill="#664438"/>
<ellipse cx="522.5" cy="452.9" rx="1.5" ry="2.2" fill="#5f4036"/>
<ellipse cx="471.5" cy="462.1" rx="3.9" ry="2.0" fill="#5f4036"/>
<ellipse cx="450.8" cy="461.7" rx="3.3" ry="2.3" fill="#5f4036"/>
<ellipse cx="512.4" cy="422.2" rx="3.6" ry="2.0" fill="#5f4036"/>
<ellipse cx="469.3" cy="459.5" rx="2.7" ry="1.5" fill="#7a5648"/>
<ellipse cx="451.2" cy="453.1" rx="2.7" ry="1.5" fill="#7a5648"/>
<ellipse cx="442.0" cy="452.6" rx="1.6" ry="2.1" fill="#745044"/>
<ellipse cx="510.6" cy="468.7" rx="3.2" ry="1.0" fill="#5f4036"/>
<ellipse cx="538.3" cy="481.9" rx="3.3" ry="1.1" fill="#664438"/>
<ellipse cx="406.1" cy="459.3" rx="3.9" ry="2.1" fill="#7a5648"/>
<ellipse cx="541.0" cy="463.2" rx="2.6" ry="1.3" fill="#7a5648"/>
<ellipse cx="440.0" cy="428.3" rx="3.1" ry="1.1" fill="#664438"/>
<ellipse cx="482.9" cy="465.7" rx="2.2" ry="1.9" fill="#664438"/>
<ellipse cx="497.2" cy="474.2" rx="1.8" ry="1.6" fill="#745044"/>
<ellipse cx="487.3" cy="449.3" rx="2.4" ry="2.0" fill="#664438"/>
<ellipse cx="392.1" cy="436.9" rx="2.9" ry="2.0" fill="#745044"/>
<ellipse cx="526.4" cy="453.5" rx="3.1" ry="1.4" fill="#80594b"/>
<ellipse cx="409.0" cy="471.3" rx="2.2" ry="2.5" fill="#7a5648"/>
<ellipse cx="518.2" cy="447.0" rx="2.5" ry="1.2" fill="#664438"/>
<ellipse cx="482.0" cy="423.5" rx="3.2" ry="1.1" fill="#664438"/>
<ellipse cx="456.1" cy="447.0" rx="2.5" ry="1.7" fill="#745044"/>
<ellipse cx="386.7" cy="452.0" rx="2.9" ry="1.6" fill="#7a5648"/>
<ellipse cx="532.4" cy="445.5" rx="3.5" ry="2.1" fill="#664438"/>
<ellipse cx="537.2" cy="460.6" rx="3.6" ry="1.2" fill="#80594b"/>
<ellipse cx="433.4" cy="471.5" rx="2.2" ry="2.4" fill="#745044"/>
<ellipse cx="506.5" cy="442.2" rx="3.3" ry="1.5" fill="#745044"/>
<ellipse cx="508.0" cy="445.7" rx="3.6" ry="1.8" fill="#80594b"/>
<ellipse cx="540.8" cy="431.8" rx="2.0" ry="1.1" fill="#664438"/>
<ellipse cx="373.8" cy="431.0" rx="1.6" ry="2.3" fill="#5f4036"/>
<ellipse cx="483.1" cy="440.3" rx="2.6" ry="1.5" fill="#80594b"/>
<ellipse cx="528.4" cy="438.7" rx="2.7" ry="1.3" fill="#7a5648"/>
<ellipse cx="380.4" cy="473.6" rx="3.7" ry="1.7" fill="#80594b"/>
<ellipse cx="412.2" cy="435.8" rx="1.9" ry="1.4" fill="#7a5648"/>
<ellipse cx="373.8" cy="475.4" rx="2.4" ry="2.1" fill="#745044"/>
<ellipse cx="531.2" cy="462.0" rx="3.2" ry="1.7" fill="#7a5648"/>
<ellipse cx="388.5" cy="460.8" rx="2.2" ry="2.0" fill="#7a5648"/>
<ellipse cx="373.8" cy="463.7" rx="2.9" ry="2.0" fill="#80594b"/>
<ellipse cx="437.8" cy="480.3" rx="2.4" ry="1.5" fill="#5f4036"/>
<ellipse cx="430.9" cy="422.3" rx="4.0" ry="1.7" fill="#7a5648"/>
<ellipse cx="398.6" cy="431.4" rx="1.6" ry="1.9" fill="#745044"/>
<ellipse cx="369.1" cy="421.9" rx="3.4" ry="1.6" fill="#664438"/>
<ellipse cx="373.8" cy="471.5" rx="3.6" ry="1.8" fill="#664438"/>
<ellipse cx="492.7" cy="433.2" rx="3.5" ry="1.1" fill="#5f4036"/>
<ellipse cx="377.4" cy="433.6" rx="1.6" ry="1.6" fill="#664438"/>
<ellipse cx="376.3" cy="471.3" rx="2.6" ry="2.0" fill="#664438"/>
<ellipse cx="533.3" cy="430.4" rx="3.2" ry="2.0" fill="#7a5648"/>
<ellipse cx="460.4" cy="423.4" rx="2.3" ry="1.2" fill="#80594b"/>
<ellipse cx="539.4" cy="428.4" rx="1.7" ry="2.1" fill="#80594b"/>
<ellipse cx="371.0" cy="452.5" rx="2.7" ry="1.9" fill="#5f4036"/>
<ellipse cx="458.9" cy="426.5" rx="1.5" ry="2.1" fill="#5f4036"/>
<ellipse cx="523.1" cy="482.0" rx="2.9" ry="1.2" fill="#5f4036"/>
<ellipse cx="383.2" cy="467.4" rx="3.5" ry="1.5" fill="#7a5648"/>
<ellipse cx="461.4" cy="448.2" rx="3.2" ry="2.2" fill="#80594b"/>
<ellipse cx="483.9" cy="435.7" rx="2.7" ry="1.4" fill="#7a5648"/>
<ellipse cx="506.5" cy="474.5" rx="3.7" ry="1.1" fill="#745044"/>
<ellipse cx="434.1" cy="467.2" rx="1.5" ry="1.4" fill="#7a5648"/>
<ellipse cx="468.0" cy="446.3" rx="3.5" ry="2.0" fill="#664438"/>
<ellipse cx="494.7" cy="462.9" rx="2.2" ry="2.2" fill="#5f4036"/>
<ellipse cx="465.8" cy="438.6" rx="2.3" ry="1.2" fill="#5f4036"/>
<ellipse cx="485.6" cy="436.3" rx="1.7" ry="2.1" fill="#80594b"/>
<ellipse cx="372.9" cy="425.8" rx="3.9" ry="2.2" fill="#5f4036"/>
<ellipse cx="517.6" cy="478.8" rx="3.0" ry="1.3" fill="#5f4036"/>
<ellipse cx="389.8" cy="430.9" rx="2.4" ry="1.2" fill="#80594b"/>
<ellipse cx="511.9" cy="464.5" rx="1.7" ry="1.8" fill="#7a5648"/>
<ellipse cx="477.7" cy="427.2" rx="3.4" ry="1.7" fill="#5f4036"/>
<ellipse cx="388.6" cy="438.3" rx="3.8" ry="1.7" fill="#5f4036"/>
<ellipse cx="397.8" cy="421.1" rx="3.2" ry="1.2" fill="#5f4036"/>
<ellipse cx="536.7" cy="456.1" rx="1.8" ry="2.2" fill="#5f4036"/>
<ellipse cx="487.3" cy="431.3" rx="1.5" ry="2.4" fill="#7a5648"/>
<ellipse cx="451.9" cy="474.4" rx="2.5" ry="1.3" fill="#745044"/>
<ellipse cx="511.0" cy="437.4" rx="2.8" ry="2.1" fill="#7a5648"/>
<ellipse cx="431.8" cy="469.8" rx="3.5" ry="2.0" fill="#664438"/>
<ellipse cx="475.6" cy="443.7" rx="1.9" ry="2.2" fill="#5f4036"/>
<ellipse cx="434.4" cy="424.0" rx="2.5" ry="2.1" fill="#745044"/>
<ellipse cx="524.6" cy="430.8" rx="3.5" ry="1.5" fill="#5f4036"/>
<ellipse cx="518.2" cy="457.9" rx="3.5" ry="1.6" fill="#664438"/>
</g>
<path d="M418.6 439.2 L435.5 460 L447 460 L441 466 L430 470 L421 452 Z" fill="#6a4738" stroke="none" stroke-width="0"/>
<path d="M369.1 418.8 L452 388.4 L474.5 398.2 L418.6 439.2 L408 433.5 Z" fill="#6d7b47" stroke="none" stroke-width="0"/>
<path d="M476.5 437 L497.8 395.2 L529.2 395.2 L540.3 427 L500.8 433 Z" fill="#65753f" stroke="none" stroke-width="0"/>
<clipPath id="cgr"><path d="M369.1 418.8 L452 388.4 L474.5 398.2 L418.6 439.2 L408 433.5 Z M476.5 437 L497.8 395.2 L529.2 395.2 L540.3 427 L500.8 433 Z"/></clipPath>
<g clip-path="url(#cgr)" filter="url(#b1)">
<ellipse cx="386.0" cy="419.5" rx="3.7" ry="1.8" fill="#5f6f3c"/>
<ellipse cx="423.2" cy="389.4" rx="2.6" ry="1.3" fill="#586a38"/>
<ellipse cx="462.9" cy="423.9" rx="3.1" ry="1.7" fill="#808c58"/>
<ellipse cx="528.8" cy="424.0" rx="3.8" ry="1.4" fill="#586a38"/>
<ellipse cx="431.1" cy="418.9" rx="3.9" ry="1.4" fill="#6a7a42"/>
<ellipse cx="417.8" cy="389.4" rx="4.2" ry="1.5" fill="#586a38"/>
<ellipse cx="421.4" cy="436.3" rx="2.5" ry="1.7" fill="#5f6f3c"/>
<ellipse cx="374.6" cy="392.6" rx="4.9" ry="1.2" fill="#6a7a42"/>
<ellipse cx="487.7" cy="431.6" rx="4.1" ry="1.5" fill="#77864f"/>
<ellipse cx="452.1" cy="392.8" rx="1.9" ry="1.2" fill="#808c58"/>
<ellipse cx="441.7" cy="438.4" rx="3.8" ry="1.3" fill="#808c58"/>
<ellipse cx="524.5" cy="435.3" rx="3.6" ry="1.3" fill="#5f6f3c"/>
<ellipse cx="514.7" cy="434.2" rx="3.9" ry="2.0" fill="#77864f"/>
<ellipse cx="522.3" cy="399.1" rx="2.6" ry="1.1" fill="#808c58"/>
<ellipse cx="381.6" cy="437.4" rx="1.8" ry="1.3" fill="#77864f"/>
<ellipse cx="407.1" cy="391.3" rx="3.5" ry="1.8" fill="#808c58"/>
<ellipse cx="494.7" cy="409.7" rx="3.0" ry="1.4" fill="#77864f"/>
<ellipse cx="420.6" cy="402.6" rx="3.6" ry="2.0" fill="#77864f"/>
<ellipse cx="441.4" cy="395.8" rx="2.5" ry="1.5" fill="#808c58"/>
<ellipse cx="400.0" cy="397.9" rx="3.6" ry="1.6" fill="#6a7a42"/>
<ellipse cx="494.8" cy="391.2" rx="3.2" ry="1.8" fill="#5f6f3c"/>
<ellipse cx="423.4" cy="432.2" rx="3.8" ry="1.9" fill="#77864f"/>
<ellipse cx="523.5" cy="420.0" rx="4.3" ry="1.8" fill="#5f6f3c"/>
<ellipse cx="401.7" cy="396.1" rx="1.8" ry="1.0" fill="#808c58"/>
<ellipse cx="500.3" cy="417.9" rx="3.0" ry="1.2" fill="#77864f"/>
<ellipse cx="492.1" cy="436.1" rx="4.8" ry="1.6" fill="#5f6f3c"/>
<ellipse cx="431.6" cy="430.3" rx="2.2" ry="1.2" fill="#77864f"/>
<ellipse cx="447.8" cy="423.4" rx="4.1" ry="0.9" fill="#586a38"/>
<ellipse cx="531.8" cy="412.2" rx="1.5" ry="2.0" fill="#6a7a42"/>
<ellipse cx="391.1" cy="388.2" rx="2.8" ry="1.2" fill="#5f6f3c"/>
<ellipse cx="453.4" cy="436.8" rx="4.0" ry="0.8" fill="#586a38"/>
<ellipse cx="541.8" cy="427.0" rx="2.2" ry="1.2" fill="#77864f"/>
<ellipse cx="418.6" cy="413.9" rx="3.9" ry="1.7" fill="#808c58"/>
<ellipse cx="387.1" cy="409.2" rx="4.8" ry="0.9" fill="#586a38"/>
<ellipse cx="376.8" cy="409.9" rx="2.3" ry="1.6" fill="#5f6f3c"/>
<ellipse cx="393.4" cy="438.3" rx="3.4" ry="1.3" fill="#77864f"/>
<ellipse cx="462.2" cy="408.1" rx="4.8" ry="0.9" fill="#6a7a42"/>
<ellipse cx="390.4" cy="392.3" rx="4.4" ry="1.0" fill="#5f6f3c"/>
<ellipse cx="371.7" cy="417.2" rx="4.8" ry="1.8" fill="#5f6f3c"/>
<ellipse cx="377.2" cy="399.4" rx="4.9" ry="1.3" fill="#586a38"/>
<ellipse cx="458.3" cy="437.7" rx="3.6" ry="1.8" fill="#586a38"/>
<ellipse cx="456.4" cy="390.8" rx="2.9" ry="1.7" fill="#586a38"/>
<ellipse cx="517.7" cy="436.9" rx="3.8" ry="1.5" fill="#808c58"/>
<ellipse cx="374.3" cy="389.2" rx="4.2" ry="1.3" fill="#586a38"/>
<ellipse cx="527.3" cy="407.7" rx="5.0" ry="1.7" fill="#6a7a42"/>
<ellipse cx="393.8" cy="428.6" rx="3.0" ry="2.0" fill="#6a7a42"/>
<ellipse cx="405.7" cy="409.9" rx="2.4" ry="1.4" fill="#6a7a42"/>
<ellipse cx="368.4" cy="420.9" rx="4.2" ry="1.7" fill="#5f6f3c"/>
<ellipse cx="380.9" cy="407.8" rx="4.6" ry="1.9" fill="#77864f"/>
<ellipse cx="480.8" cy="426.9" rx="3.2" ry="1.2" fill="#586a38"/>
<ellipse cx="391.7" cy="400.3" rx="4.7" ry="1.9" fill="#5f6f3c"/>
<ellipse cx="370.5" cy="430.2" rx="1.8" ry="1.0" fill="#6a7a42"/>
<ellipse cx="426.1" cy="399.2" rx="2.5" ry="1.9" fill="#808c58"/>
<ellipse cx="383.7" cy="393.8" rx="3.8" ry="1.2" fill="#6a7a42"/>
<ellipse cx="525.7" cy="416.5" rx="3.1" ry="1.8" fill="#808c58"/>
<ellipse cx="392.4" cy="388.9" rx="1.5" ry="1.3" fill="#77864f"/>
<ellipse cx="451.7" cy="424.7" rx="1.5" ry="1.7" fill="#586a38"/>
<ellipse cx="408.4" cy="425.2" rx="2.3" ry="1.2" fill="#808c58"/>
<ellipse cx="409.5" cy="424.0" rx="4.6" ry="1.7" fill="#808c58"/>
<ellipse cx="419.8" cy="411.4" rx="3.8" ry="1.9" fill="#6a7a42"/>
<ellipse cx="467.0" cy="402.3" rx="3.5" ry="1.5" fill="#586a38"/>
<ellipse cx="539.9" cy="403.7" rx="2.1" ry="1.9" fill="#5f6f3c"/>
<ellipse cx="480.2" cy="390.9" rx="2.2" ry="1.5" fill="#5f6f3c"/>
<ellipse cx="528.9" cy="403.6" rx="3.4" ry="1.8" fill="#77864f"/>
<ellipse cx="447.4" cy="391.3" rx="1.5" ry="1.5" fill="#808c58"/>
<ellipse cx="447.0" cy="391.1" rx="1.8" ry="1.2" fill="#77864f"/>
<ellipse cx="433.1" cy="405.7" rx="4.4" ry="1.4" fill="#77864f"/>
<ellipse cx="497.0" cy="401.6" rx="4.4" ry="1.6" fill="#586a38"/>
<ellipse cx="396.9" cy="429.0" rx="4.0" ry="1.5" fill="#586a38"/>
<ellipse cx="527.2" cy="431.5" rx="3.6" ry="1.5" fill="#6a7a42"/>
<ellipse cx="465.7" cy="388.5" rx="1.7" ry="1.8" fill="#586a38"/>
<ellipse cx="485.3" cy="421.8" rx="1.6" ry="1.3" fill="#586a38"/>
<ellipse cx="493.5" cy="419.8" rx="3.6" ry="1.1" fill="#5f6f3c"/>
<ellipse cx="490.8" cy="425.4" rx="3.6" ry="0.9" fill="#586a38"/>
<ellipse cx="420.9" cy="415.3" rx="3.4" ry="1.8" fill="#6a7a42"/>
<ellipse cx="389.0" cy="427.2" rx="2.4" ry="1.2" fill="#5f6f3c"/>
<ellipse cx="520.9" cy="404.8" rx="3.8" ry="1.4" fill="#586a38"/>
<ellipse cx="395.0" cy="399.3" rx="2.4" ry="1.9" fill="#77864f"/>
<ellipse cx="447.6" cy="395.8" rx="5.0" ry="1.6" fill="#586a38"/>
<ellipse cx="476.2" cy="421.8" rx="2.1" ry="1.0" fill="#586a38"/>
<ellipse cx="397.5" cy="414.1" rx="4.8" ry="1.2" fill="#5f6f3c"/>
<ellipse cx="393.2" cy="401.9" rx="3.2" ry="1.4" fill="#77864f"/>
<ellipse cx="464.6" cy="422.4" rx="3.0" ry="1.7" fill="#6a7a42"/>
<ellipse cx="419.1" cy="393.6" rx="2.4" ry="1.2" fill="#808c58"/>
<ellipse cx="414.0" cy="420.7" rx="3.7" ry="1.9" fill="#5f6f3c"/>
<ellipse cx="488.0" cy="393.7" rx="1.8" ry="1.8" fill="#6a7a42"/>
<ellipse cx="514.9" cy="418.3" rx="1.7" ry="2.0" fill="#586a38"/>
<ellipse cx="398.0" cy="405.4" rx="4.2" ry="0.9" fill="#6a7a42"/>
<ellipse cx="521.6" cy="404.2" rx="2.5" ry="1.2" fill="#586a38"/>
<ellipse cx="378.9" cy="403.7" rx="2.1" ry="1.9" fill="#808c58"/>
<ellipse cx="438.8" cy="412.0" rx="1.8" ry="1.3" fill="#808c58"/>
<ellipse cx="462.2" cy="421.9" rx="3.9" ry="1.2" fill="#6a7a42"/>
<ellipse cx="532.6" cy="412.2" rx="1.9" ry="1.7" fill="#5f6f3c"/>
<ellipse cx="475.0" cy="392.9" rx="3.8" ry="1.6" fill="#586a38"/>
<ellipse cx="444.1" cy="402.2" rx="3.4" ry="2.0" fill="#586a38"/>
<ellipse cx="374.8" cy="433.9" rx="4.9" ry="1.0" fill="#77864f"/>
<ellipse cx="527.9" cy="404.9" rx="4.3" ry="1.4" fill="#77864f"/>
<ellipse cx="421.3" cy="432.5" rx="3.7" ry="1.2" fill="#808c58"/>
<ellipse cx="527.7" cy="417.8" rx="3.3" ry="1.1" fill="#6a7a42"/>
<ellipse cx="447.5" cy="409.0" rx="4.0" ry="0.9" fill="#808c58"/>
<ellipse cx="403.3" cy="424.1" rx="4.1" ry="0.9" fill="#77864f"/>
<ellipse cx="391.2" cy="396.7" rx="1.8" ry="1.3" fill="#808c58"/>
<ellipse cx="448.7" cy="423.2" rx="4.3" ry="1.4" fill="#6a7a42"/>
<ellipse cx="469.0" cy="401.1" rx="2.7" ry="0.9" fill="#808c58"/>
<ellipse cx="389.3" cy="427.7" rx="2.7" ry="1.5" fill="#586a38"/>
<ellipse cx="520.2" cy="415.1" rx="3.6" ry="1.5" fill="#5f6f3c"/>
<ellipse cx="520.6" cy="394.9" rx="3.0" ry="1.3" fill="#77864f"/>
<ellipse cx="418.4" cy="398.1" rx="4.8" ry="0.8" fill="#586a38"/>
<ellipse cx="532.2" cy="404.2" rx="4.5" ry="1.6" fill="#586a38"/>
<ellipse cx="511.0" cy="418.8" rx="3.1" ry="1.9" fill="#808c58"/>
<ellipse cx="455.9" cy="425.0" rx="3.7" ry="1.8" fill="#77864f"/>
<ellipse cx="468.4" cy="421.9" rx="3.4" ry="1.4" fill="#586a38"/>
<ellipse cx="513.7" cy="390.2" rx="3.4" ry="1.4" fill="#5f6f3c"/>
<ellipse cx="496.2" cy="396.8" rx="2.1" ry="1.4" fill="#586a38"/>
<ellipse cx="481.3" cy="408.0" rx="3.8" ry="1.1" fill="#6a7a42"/>
<ellipse cx="528.1" cy="398.7" rx="2.3" ry="0.9" fill="#808c58"/>
<ellipse cx="432.9" cy="418.3" rx="2.3" ry="0.9" fill="#808c58"/>
<ellipse cx="471.8" cy="427.4" rx="3.1" ry="1.6" fill="#5f6f3c"/>
<ellipse cx="523.2" cy="415.6" rx="1.5" ry="1.3" fill="#586a38"/>
<ellipse cx="370.5" cy="427.8" rx="1.9" ry="1.3" fill="#586a38"/>
<ellipse cx="416.5" cy="407.5" rx="8" ry="3.6" fill="#3f4f2a" transform="rotate(-18 416.5 407.5)"/>
<path d="M486 404 L512 404 L508 414 L484 416 Z" fill="#3d4d2a"/>
</g>
<path d="M418.6 439.2 L474.5 398.2 L486.6 406.4 L460.3 443 L447 460 L435.5 460 Z" fill="#ad8f76" stroke="none" stroke-width="0"/>
<clipPath id="cbd"><path d="M418.6 439.2 L474.5 398.2 L486.6 406.4 L460.3 443 L447 460 L435.5 460 Z"/></clipPath>
<g clip-path="url(#cbd)" filter="url(#b1)">
<ellipse cx="480.0" cy="427.6" rx="1.2" ry="0.7" fill="#98795f"/>
<ellipse cx="475.6" cy="436.7" rx="1.8" ry="1.3" fill="#a08268"/>
<ellipse cx="419.4" cy="453.7" rx="2.2" ry="0.8" fill="#b89a80"/>
<ellipse cx="466.1" cy="410.7" rx="1.5" ry="1.3" fill="#a08268"/>
<ellipse cx="433.2" cy="398.2" rx="1.4" ry="0.8" fill="#98795f"/>
<ellipse cx="445.0" cy="446.6" rx="1.0" ry="0.9" fill="#a08268"/>
<ellipse cx="433.0" cy="423.4" rx="1.4" ry="0.9" fill="#b89a80"/>
<ellipse cx="436.9" cy="431.1" rx="1.1" ry="1.2" fill="#c0a58c"/>
<ellipse cx="470.6" cy="452.9" rx="2.1" ry="1.2" fill="#98795f"/>
<ellipse cx="474.9" cy="454.7" rx="1.6" ry="1.3" fill="#98795f"/>
<ellipse cx="468.6" cy="410.8" rx="1.6" ry="1.2" fill="#b89a80"/>
<ellipse cx="431.3" cy="431.6" rx="2.0" ry="0.9" fill="#b89a80"/>
<ellipse cx="466.9" cy="425.3" rx="1.9" ry="1.1" fill="#a08268"/>
<ellipse cx="418.5" cy="407.4" rx="1.4" ry="0.7" fill="#b89a80"/>
<ellipse cx="466.4" cy="427.4" rx="2.0" ry="1.3" fill="#b89a80"/>
<ellipse cx="451.7" cy="421.2" rx="2.2" ry="1.2" fill="#c0a58c"/>
<ellipse cx="470.2" cy="428.1" rx="1.9" ry="1.0" fill="#c0a58c"/>
<ellipse cx="460.0" cy="431.8" rx="1.0" ry="0.9" fill="#98795f"/>
<ellipse cx="485.5" cy="399.0" rx="1.5" ry="0.7" fill="#b89a80"/>
<ellipse cx="471.6" cy="428.5" rx="0.9" ry="1.1" fill="#c0a58c"/>
<ellipse cx="424.5" cy="444.0" rx="1.4" ry="0.9" fill="#b89a80"/>
<ellipse cx="439.4" cy="440.7" rx="1.0" ry="1.0" fill="#b89a80"/>
<ellipse cx="470.8" cy="452.9" rx="1.8" ry="0.7" fill="#98795f"/>
<ellipse cx="453.4" cy="427.6" rx="1.4" ry="0.7" fill="#c0a58c"/>
<ellipse cx="460.5" cy="434.1" rx="2.2" ry="1.0" fill="#c0a58c"/>
<ellipse cx="475.4" cy="435.2" rx="0.9" ry="0.9" fill="#98795f"/>
<ellipse cx="424.6" cy="419.8" rx="2.1" ry="0.7" fill="#c0a58c"/>
<ellipse cx="478.1" cy="420.4" rx="0.9" ry="0.9" fill="#98795f"/>
<ellipse cx="440.6" cy="441.2" rx="1.4" ry="1.3" fill="#b89a80"/>
<ellipse cx="459.1" cy="454.0" rx="1.2" ry="1.0" fill="#c0a58c"/>
<ellipse cx="453.4" cy="403.9" rx="1.5" ry="1.3" fill="#98795f"/>
<ellipse cx="463.3" cy="436.8" rx="1.4" ry="0.9" fill="#a08268"/>
<ellipse cx="422.4" cy="418.3" rx="0.9" ry="1.2" fill="#98795f"/>
<ellipse cx="459.6" cy="435.2" rx="1.0" ry="1.0" fill="#c0a58c"/>
<ellipse cx="420.9" cy="404.9" rx="1.9" ry="1.3" fill="#b89a80"/>
<ellipse cx="481.6" cy="416.6" rx="1.2" ry="0.9" fill="#a08268"/>
<ellipse cx="420.4" cy="426.8" rx="1.0" ry="0.9" fill="#98795f"/>
<ellipse cx="476.1" cy="437.0" rx="2.0" ry="0.7" fill="#98795f"/>
<ellipse cx="486.8" cy="451.5" rx="0.9" ry="1.0" fill="#c0a58c"/>
<ellipse cx="443.6" cy="447.4" rx="2.1" ry="1.4" fill="#98795f"/>
<ellipse cx="445.7" cy="426.3" rx="1.2" ry="0.7" fill="#98795f"/>
<ellipse cx="442.7" cy="409.4" rx="2.2" ry="0.6" fill="#98795f"/>
<ellipse cx="439.8" cy="410.3" rx="1.0" ry="1.3" fill="#98795f"/>
<ellipse cx="426.2" cy="421.8" rx="1.1" ry="0.8" fill="#98795f"/>
<ellipse cx="434.8" cy="429.5" rx="1.6" ry="1.0" fill="#b89a80"/>
<ellipse cx="471.7" cy="417.3" rx="1.3" ry="1.1" fill="#a08268"/>
<ellipse cx="476.4" cy="398.8" rx="1.1" ry="0.6" fill="#98795f"/>
<ellipse cx="454.3" cy="400.9" rx="1.1" ry="1.4" fill="#c0a58c"/>
<ellipse cx="433.3" cy="426.7" rx="0.8" ry="0.7" fill="#a08268"/>
<ellipse cx="425.5" cy="441.7" rx="1.0" ry="1.3" fill="#b89a80"/>
<ellipse cx="471.3" cy="454.4" rx="1.6" ry="1.3" fill="#c0a58c"/>
<ellipse cx="472.0" cy="414.1" rx="1.0" ry="0.8" fill="#b89a80"/>
<ellipse cx="445.0" cy="413.2" rx="2.1" ry="1.3" fill="#c0a58c"/>
<ellipse cx="450.4" cy="412.6" rx="0.9" ry="1.2" fill="#a08268"/>
<ellipse cx="444.4" cy="434.1" rx="1.2" ry="0.6" fill="#c0a58c"/>
<ellipse cx="418.2" cy="407.3" rx="1.8" ry="1.3" fill="#c0a58c"/>
<ellipse cx="443.4" cy="458.3" rx="1.5" ry="1.3" fill="#b89a80"/>
<ellipse cx="458.9" cy="418.3" rx="1.3" ry="0.9" fill="#a08268"/>
<ellipse cx="477.0" cy="447.8" rx="1.2" ry="0.7" fill="#b89a80"/>
<ellipse cx="458.8" cy="410.5" rx="2.1" ry="1.1" fill="#b89a80"/>
<ellipse cx="433.8" cy="410.9" rx="1.7" ry="1.1" fill="#c0a58c"/>
<ellipse cx="476.1" cy="406.7" rx="1.9" ry="0.7" fill="#98795f"/>
<ellipse cx="433.3" cy="425.7" rx="1.2" ry="0.8" fill="#a08268"/>
<ellipse cx="458.7" cy="448.4" rx="1.7" ry="1.1" fill="#c0a58c"/>
<ellipse cx="457.2" cy="457.5" rx="2.2" ry="0.6" fill="#b89a80"/>
<ellipse cx="456.6" cy="436.1" rx="1.7" ry="0.8" fill="#c0a58c"/>
<ellipse cx="475.8" cy="451.7" rx="1.6" ry="0.9" fill="#a08268"/>
<ellipse cx="448.8" cy="433.3" rx="1.1" ry="0.7" fill="#b89a80"/>
<ellipse cx="481.0" cy="409.4" rx="1.6" ry="0.8" fill="#a08268"/>
<ellipse cx="437.1" cy="450.1" rx="1.2" ry="1.1" fill="#c0a58c"/>
<ellipse cx="466.0" cy="437.4" rx="0.8" ry="0.8" fill="#c0a58c"/>
<ellipse cx="473.6" cy="421.9" rx="1.9" ry="0.7" fill="#98795f"/>
<ellipse cx="451.5" cy="407.4" rx="1.7" ry="1.2" fill="#98795f"/>
<ellipse cx="482.8" cy="401.9" rx="2.2" ry="0.9" fill="#b89a80"/>
<ellipse cx="431.9" cy="446.6" rx="1.2" ry="1.0" fill="#a08268"/>
<ellipse cx="443.4" cy="436.8" rx="1.7" ry="1.1" fill="#98795f"/>
<ellipse cx="466.8" cy="442.7" rx="1.8" ry="0.8" fill="#b89a80"/>
<ellipse cx="437.5" cy="459.8" rx="1.4" ry="1.0" fill="#a08268"/>
<ellipse cx="470.8" cy="427.5" rx="2.1" ry="1.0" fill="#a08268"/>
<ellipse cx="486.4" cy="418.4" rx="1.8" ry="1.4" fill="#b89a80"/>
<ellipse cx="426.5" cy="426.1" rx="1.5" ry="1.1" fill="#b89a80"/>
<ellipse cx="477.3" cy="407.2" rx="1.5" ry="1.1" fill="#a08268"/>
<ellipse cx="484.1" cy="448.6" rx="2.0" ry="0.7" fill="#98795f"/>
<ellipse cx="448.4" cy="409.6" rx="1.0" ry="0.6" fill="#98795f"/>
<ellipse cx="454.7" cy="440.1" rx="1.7" ry="1.3" fill="#a08268"/>
<ellipse cx="485.0" cy="429.1" rx="1.5" ry="1.1" fill="#c0a58c"/>
<ellipse cx="421.4" cy="458.4" rx="1.2" ry="1.0" fill="#b89a80"/>
<ellipse cx="432.0" cy="432.6" rx="1.2" ry="1.4" fill="#a08268"/>
<ellipse cx="474.0" cy="413.2" rx="1.7" ry="1.1" fill="#98795f"/>
<ellipse cx="434.1" cy="424.1" rx="1.1" ry="0.9" fill="#c0a58c"/>
<path d="M459 412 L466 410 L473 418 L470 428 L462 432 L458 422 Z" fill="#6a5a50" stroke="none" stroke-width="0"/>
<path d="M474 398 L480 402 L478 410 L472 404 Z" fill="#7a6a5e" stroke="none" stroke-width="0"/>
</g>
<path d="M460.3 443 L485.6 408.4 L488 410 L476.5 437 L464 445.5 Z" fill="#8e8676" stroke="none" stroke-width="0"/>
<path d="M447 460 L460.3 443 L464 445.5 L452 462 Z" fill="#7d6c5a" stroke="none" stroke-width="0"/>
<path d="M408.4 434 L408.4 422.5 L452 390.5 L452 394 Z" fill="#a3a896" stroke="none" stroke-width="0" opacity="0.5"/>
<line x1="408.5" y1="434.0" x2="408.5" y2="424.0" stroke="#b4b8ac" stroke-width="0.45"/>
<line x1="411.3666666666667" y1="431.46666666666664" x2="411.3666666666667" y2="421.9" stroke="#b4b8ac" stroke-width="0.45"/>
<line x1="414.23333333333335" y1="428.93333333333334" x2="414.23333333333335" y2="419.8" stroke="#b4b8ac" stroke-width="0.45"/>
<line x1="417.1" y1="426.4" x2="417.1" y2="417.7" stroke="#b4b8ac" stroke-width="0.45"/>
<line x1="419.96666666666664" y1="423.8666666666667" x2="419.96666666666664" y2="415.6" stroke="#b4b8ac" stroke-width="0.45"/>
<line x1="422.8333333333333" y1="421.3333333333333" x2="422.8333333333333" y2="413.5" stroke="#b4b8ac" stroke-width="0.45"/>
<line x1="425.7" y1="418.8" x2="425.7" y2="411.40000000000003" stroke="#b4b8ac" stroke-width="0.45"/>
<line x1="428.56666666666666" y1="416.26666666666665" x2="428.56666666666666" y2="409.3" stroke="#b4b8ac" stroke-width="0.45"/>
<line x1="431.43333333333334" y1="413.73333333333335" x2="431.43333333333334" y2="407.2" stroke="#b4b8ac" stroke-width="0.45"/>
<line x1="434.3" y1="411.2" x2="434.3" y2="405.09999999999997" stroke="#b4b8ac" stroke-width="0.45"/>
<line x1="437.1666666666667" y1="408.6666666666667" x2="437.1666666666667" y2="403.0" stroke="#b4b8ac" stroke-width="0.45"/>
<line x1="440.0333333333333" y1="406.1333333333333" x2="440.0333333333333" y2="400.9" stroke="#b4b8ac" stroke-width="0.45"/>
<line x1="442.9" y1="403.6" x2="442.9" y2="398.8" stroke="#b4b8ac" stroke-width="0.45"/>
<line x1="445.76666666666665" y1="401.06666666666666" x2="445.76666666666665" y2="396.7" stroke="#b4b8ac" stroke-width="0.45"/>
<line x1="448.6333333333333" y1="398.5333333333333" x2="448.6333333333333" y2="394.59999999999997" stroke="#b4b8ac" stroke-width="0.45"/>
<line x1="451.5" y1="396.0" x2="451.5" y2="392.5" stroke="#b4b8ac" stroke-width="0.45"/>
<path d="M476.5 437 L476.5 426 L497.8 391 L497.8 396 Z" fill="#a9aca4" stroke="none" stroke-width="0" opacity="0.7"/>
<line x1="476.5" y1="437.0" x2="476.5" y2="427.0" stroke="#bcc0b8" stroke-width="0.5"/>
<line x1="478.8333333333333" y1="432.44444444444446" x2="478.8333333333333" y2="423.0" stroke="#bcc0b8" stroke-width="0.5"/>
<line x1="481.1666666666667" y1="427.8888888888889" x2="481.1666666666667" y2="419.0" stroke="#bcc0b8" stroke-width="0.5"/>
<line x1="483.5" y1="423.3333333333333" x2="483.5" y2="415.0" stroke="#bcc0b8" stroke-width="0.5"/>
<line x1="485.8333333333333" y1="418.77777777777777" x2="485.8333333333333" y2="411.0" stroke="#bcc0b8" stroke-width="0.5"/>
<line x1="488.1666666666667" y1="414.22222222222223" x2="488.1666666666667" y2="407.0" stroke="#bcc0b8" stroke-width="0.5"/>
<line x1="490.5" y1="409.6666666666667" x2="490.5" y2="403.0" stroke="#bcc0b8" stroke-width="0.5"/>
<line x1="492.8333333333333" y1="405.1111111111111" x2="492.8333333333333" y2="399.0" stroke="#bcc0b8" stroke-width="0.5"/>
<line x1="495.1666666666667" y1="400.55555555555554" x2="495.1666666666667" y2="395.0" stroke="#bcc0b8" stroke-width="0.5"/>
<line x1="497.5" y1="396.0" x2="497.5" y2="391.0" stroke="#bcc0b8" stroke-width="0.5"/>
<line x1="476.7" y1="425.5" x2="476.7" y2="438.5" stroke="#cfd2ca" stroke-width="0.8"/>
<line x1="408.4" y1="422" x2="408.4" y2="434.5" stroke="#c8ccc2" stroke-width="0.7"/>
<path d="M452 388 L458 385.5 L458 389 L452 391 Z" fill="#b5b8b8" stroke="none" stroke-width="0" opacity="0.8"/>
<path d="M410.6 398 L412.9 398 L412.9 412.5 L410.9 412.5 Z" fill="#2e221a" stroke="none" stroke-width="0"/>
<path d="M509.9 399 L512.3 399 L511.8 411 L509.8 411 Z" fill="#2a2018" stroke="none" stroke-width="0"/>
<path d="M446.9 371 Q445.8 380 447 389.5" fill="none" stroke="#6a5a48" stroke-width="1.1"/>
<path d="M446.7 373 L443 367 M446.7 372 L450 366" fill="none" stroke="#6a5a48" stroke-width="0.5"/>
<clipPath id="ct21"><path d="M409.8 351.2 C424.05 351.2 433.7 371.528 433.7 384.112 C433.7 394.76 423.1 399.6 409.8 399.6 C396.5 399.6 386.2 394.76 386.2 384.112 C386.2 371.528 395.55 351.2 409.8 351.2 Z"/></clipPath>
<path d="M409.8 351.2 C424.05 351.2 433.7 371.528 433.7 384.112 C433.7 394.76 423.1 399.6 409.8 399.6 C396.5 399.6 386.2 394.76 386.2 384.112 C386.2 371.528 395.55 351.2 409.8 351.2 Z" fill="#3f6c38"/>
<g clip-path="url(#ct21)">
<circle cx="394.0" cy="384.6" r="1.4" fill="#1f421b"/>
<circle cx="396.5" cy="389.6" r="1.0" fill="#9ccf88"/>
<circle cx="411.3" cy="389.4" r="1.3" fill="#28501f"/>
<circle cx="414.0" cy="354.6" r="2.1" fill="#5c9a4c"/>
<circle cx="419.2" cy="372.3" r="1.6" fill="#447a3a"/>
<circle cx="387.8" cy="367.1" r="1.7" fill="#2e5a28"/>
<circle cx="417.0" cy="396.6" r="0.9" fill="#28501f"/>
<circle cx="425.0" cy="357.2" r="1.4" fill="#28501f"/>
<circle cx="412.4" cy="367.8" r="0.9" fill="#2e5a28"/>
<circle cx="417.8" cy="373.9" r="0.8" fill="#5c9a4c"/>
<circle cx="395.6" cy="383.8" r="0.9" fill="#4f8a40"/>
<circle cx="408.8" cy="391.2" r="1.2" fill="#5c9a4c"/>
<circle cx="393.1" cy="377.1" r="1.2" fill="#1f421b"/>
<circle cx="407.6" cy="369.9" r="1.3" fill="#2e5a28"/>
<circle cx="387.5" cy="355.7" r="0.7" fill="#2e5a28"/>
<circle cx="389.5" cy="380.2" r="1.0" fill="#9ccf88"/>
<circle cx="415.1" cy="378.1" r="1.0" fill="#4f8a40"/>
<circle cx="394.3" cy="368.1" r="1.2" fill="#70aa5c"/>
<circle cx="414.6" cy="366.0" r="1.0" fill="#4f8a40"/>
<circle cx="430.0" cy="359.6" r="1.3" fill="#447a3a"/>
<circle cx="418.7" cy="383.9" r="1.3" fill="#5c9a4c"/>
<circle cx="433.2" cy="397.7" r="2.0" fill="#28501f"/>
<circle cx="409.5" cy="369.4" r="2.1" fill="#5c9a4c"/>
<circle cx="397.9" cy="378.4" r="1.9" fill="#2e5a28"/>
<circle cx="423.0" cy="374.6" r="0.8" fill="#1f421b"/>
<circle cx="398.5" cy="365.2" r="1.1" fill="#447a3a"/>
<circle cx="404.9" cy="393.3" r="2.2" fill="#356530"/>
<circle cx="421.6" cy="374.4" r="0.9" fill="#1f421b"/>
<circle cx="417.1" cy="395.3" r="0.7" fill="#2e5a28"/>
<circle cx="396.3" cy="391.8" r="2.0" fill="#356530"/>
<circle cx="414.8" cy="371.8" r="1.2" fill="#2e5a28"/>
<circle cx="411.6" cy="364.6" r="1.3" fill="#28501f"/>
<circle cx="392.2" cy="385.8" r="1.6" fill="#1f421b"/>
<circle cx="416.8" cy="392.4" r="1.1" fill="#447a3a"/>
<circle cx="405.5" cy="397.6" r="0.9" fill="#356530"/>
<circle cx="390.7" cy="355.7" r="1.7" fill="#28501f"/>
<circle cx="423.5" cy="354.7" r="1.7" fill="#4f8a40"/>
<circle cx="392.2" cy="377.3" r="1.3" fill="#70aa5c"/>
<circle cx="428.4" cy="381.3" r="1.0" fill="#356530"/>
<circle cx="404.1" cy="385.6" r="1.8" fill="#9ccf88"/>
<circle cx="414.9" cy="375.6" r="1.9" fill="#28501f"/>
<circle cx="386.6" cy="373.7" r="1.3" fill="#4f8a40"/>
<circle cx="413.1" cy="392.6" r="1.1" fill="#5c9a4c"/>
<circle cx="419.3" cy="366.4" r="1.1" fill="#28501f"/>
<circle cx="393.6" cy="386.3" r="1.9" fill="#1f421b"/>
<circle cx="424.3" cy="374.9" r="1.5" fill="#4f8a40"/>
<circle cx="389.1" cy="380.0" r="2.2" fill="#70aa5c"/>
<circle cx="400.9" cy="385.1" r="1.8" fill="#9ccf88"/>
<circle cx="395.2" cy="381.0" r="2.2" fill="#70aa5c"/>
<circle cx="403.1" cy="366.6" r="0.9" fill="#447a3a"/>
<circle cx="389.8" cy="354.7" r="1.5" fill="#2e5a28"/>
<circle cx="431.2" cy="384.1" r="1.4" fill="#2e5a28"/>
<circle cx="410.6" cy="393.6" r="1.0" fill="#4f8a40"/>
<circle cx="388.5" cy="372.2" r="1.1" fill="#5c9a4c"/>
<circle cx="414.2" cy="370.8" r="1.4" fill="#447a3a"/>
<circle cx="397.4" cy="369.9" r="1.0" fill="#2e5a28"/>
<circle cx="429.6" cy="382.9" r="1.4" fill="#28501f"/>
<circle cx="409.6" cy="385.9" r="1.9" fill="#5c9a4c"/>
<circle cx="416.0" cy="387.9" r="1.1" fill="#1f421b"/>
<circle cx="429.7" cy="369.9" r="1.9" fill="#447a3a"/>
<circle cx="432.0" cy="399.1" r="0.9" fill="#28501f"/>
<circle cx="395.8" cy="393.6" r="0.8" fill="#356530"/>
<circle cx="394.5" cy="376.5" r="1.8" fill="#447a3a"/>
<circle cx="408.2" cy="356.4" r="1.8" fill="#356530"/>
<circle cx="396.0" cy="367.4" r="1.1" fill="#5c9a4c"/>
<circle cx="431.4" cy="366.8" r="2.1" fill="#1f421b"/>
<circle cx="432.1" cy="394.7" r="1.0" fill="#9ccf88"/>
<circle cx="414.6" cy="364.6" r="0.9" fill="#447a3a"/>
<circle cx="404.9" cy="370.6" r="1.6" fill="#2e5a28"/>
<circle cx="399.5" cy="359.6" r="1.6" fill="#447a3a"/>
<circle cx="390.9" cy="398.4" r="0.8" fill="#5c9a4c"/>
<circle cx="424.7" cy="396.4" r="0.7" fill="#70aa5c"/>
<circle cx="410.0" cy="353.1" r="1.8" fill="#2e5a28"/>
<circle cx="397.6" cy="351.6" r="0.9" fill="#9ccf88"/>
<circle cx="432.4" cy="360.4" r="2.0" fill="#70aa5c"/>
<circle cx="403.8" cy="357.7" r="1.5" fill="#447a3a"/>
<circle cx="388.5" cy="360.3" r="2.0" fill="#447a3a"/>
<circle cx="397.8" cy="379.0" r="2.0" fill="#2e5a28"/>
<circle cx="387.0" cy="379.4" r="1.4" fill="#4f8a40"/>
<circle cx="425.8" cy="399.1" r="0.9" fill="#5c9a4c"/>
<circle cx="409.8" cy="376.7" r="1.6" fill="#9ccf88"/>
<circle cx="408.6" cy="389.9" r="0.9" fill="#70aa5c"/>
<circle cx="393.5" cy="365.1" r="2.0" fill="#28501f"/>
<circle cx="389.6" cy="354.5" r="0.8" fill="#9ccf88"/>
<circle cx="425.5" cy="368.6" r="0.8" fill="#70aa5c"/>
<circle cx="388.0" cy="375.2" r="0.9" fill="#447a3a"/>
<circle cx="391.1" cy="396.3" r="1.1" fill="#9ccf88"/>
<circle cx="395.7" cy="360.6" r="1.3" fill="#9ccf88"/>
<circle cx="401.6" cy="361.8" r="0.8" fill="#9ccf88"/>
<circle cx="402.9" cy="377.0" r="0.7" fill="#356530"/>
<circle cx="403.7" cy="374.4" r="1.9" fill="#2e5a28"/>
<circle cx="429.3" cy="384.1" r="1.7" fill="#5c9a4c"/>
<circle cx="417.0" cy="381.0" r="2.2" fill="#4f8a40"/>
<circle cx="404.7" cy="396.8" r="0.7" fill="#70aa5c"/>
<circle cx="402.9" cy="380.9" r="1.8" fill="#28501f"/>
<circle cx="416.9" cy="359.0" r="1.5" fill="#9ccf88"/>
<circle cx="405.8" cy="362.2" r="1.5" fill="#9ccf88"/>
<circle cx="423.0" cy="387.0" r="2.1" fill="#70aa5c"/>
<circle cx="397.6" cy="380.2" r="1.5" fill="#70aa5c"/>
<circle cx="424.9" cy="368.7" r="2.2" fill="#356530"/>
<circle cx="429.5" cy="397.4" r="2.2" fill="#28501f"/>
<circle cx="421.4" cy="387.1" r="2.1" fill="#5c9a4c"/>
<circle cx="411.0" cy="394.5" r="1.1" fill="#9ccf88"/>
<circle cx="393.9" cy="383.3" r="1.9" fill="#2e5a28"/>
<circle cx="421.9" cy="382.7" r="1.0" fill="#1f421b"/>
<circle cx="425.5" cy="362.0" r="1.1" fill="#2e5a28"/>
<circle cx="411.7" cy="373.4" r="1.9" fill="#28501f"/>
<circle cx="402.2" cy="372.5" r="1.8" fill="#1f421b"/>
<circle cx="420.9" cy="399.3" r="0.9" fill="#447a3a"/>
<circle cx="387.8" cy="388.8" r="1.6" fill="#1f421b"/>
<circle cx="433.6" cy="360.7" r="2.0" fill="#5c9a4c"/>
<circle cx="412.5" cy="388.2" r="0.7" fill="#28501f"/>
<circle cx="429.7" cy="357.6" r="1.4" fill="#70aa5c"/>
<circle cx="404.7" cy="381.6" r="2.0" fill="#4f8a40"/>
<circle cx="421.9" cy="369.3" r="1.8" fill="#1f421b"/>
<circle cx="408.0" cy="357.2" r="1.6" fill="#5c9a4c"/>
<circle cx="402.0" cy="392.3" r="1.1" fill="#1f421b"/>
<circle cx="392.4" cy="387.6" r="0.9" fill="#1f421b"/>
<circle cx="415.5" cy="382.5" r="1.0" fill="#9ccf88"/>
<circle cx="409.8" cy="385.7" r="0.7" fill="#5c9a4c"/>
<circle cx="429.0" cy="395.8" r="1.3" fill="#9ccf88"/>
<circle cx="395.4" cy="358.0" r="1.1" fill="#28501f"/>
<circle cx="425.4" cy="354.1" r="0.7" fill="#9ccf88"/>
<circle cx="420.6" cy="380.0" r="1.4" fill="#2e5a28"/>
<circle cx="411.7" cy="377.8" r="1.7" fill="#447a3a"/>
<circle cx="416.4" cy="368.9" r="1.3" fill="#70aa5c"/>
<circle cx="407.3" cy="382.6" r="1.6" fill="#9ccf88"/>
<circle cx="407.1" cy="362.5" r="2.0" fill="#2e5a28"/>
<circle cx="423.0" cy="394.9" r="1.2" fill="#4f8a40"/>
<circle cx="393.5" cy="351.9" r="1.2" fill="#1f421b"/>
<circle cx="401.8" cy="361.6" r="1.4" fill="#28501f"/>
<circle cx="395.8" cy="351.7" r="2.0" fill="#356530"/>
<circle cx="396.7" cy="356.6" r="1.7" fill="#9ccf88"/>
<circle cx="416.1" cy="357.1" r="1.0" fill="#4f8a40"/>
<circle cx="419.4" cy="377.3" r="1.9" fill="#4f8a40"/>
<circle cx="396.6" cy="378.7" r="1.0" fill="#5c9a4c"/>
<circle cx="413.6" cy="390.8" r="1.7" fill="#9ccf88"/>
<circle cx="424.8" cy="370.5" r="1.9" fill="#70aa5c"/>
<circle cx="418.8" cy="394.0" r="0.8" fill="#447a3a"/>
<circle cx="409.9" cy="394.3" r="1.0" fill="#2e5a28"/>
<circle cx="430.2" cy="355.1" r="1.9" fill="#1f421b"/>
<circle cx="420.4" cy="376.9" r="1.1" fill="#356530"/>
<circle cx="403.8" cy="375.0" r="1.3" fill="#1f421b"/>
<circle cx="424.3" cy="353.8" r="1.6" fill="#1f421b"/>
<circle cx="409.3" cy="390.9" r="1.8" fill="#356530"/>
<circle cx="393.3" cy="366.1" r="1.1" fill="#4f8a40"/>
<circle cx="418.4" cy="395.1" r="1.3" fill="#28501f"/>
<circle cx="427.3" cy="371.8" r="1.6" fill="#4f8a40"/>
<circle cx="408.7" cy="378.1" r="1.8" fill="#70aa5c"/>
<circle cx="388.4" cy="381.5" r="1.4" fill="#70aa5c"/>
<ellipse cx="414.55" cy="393.79200000000003" rx="21.375" ry="6.776000000000005" fill="#1f3f1c" opacity="0.45"/>
</g>
<clipPath id="ct22"><path d="M513.5 351.2 C528.86 351.2 539.5 371.69599999999997 539.5 384.384 C539.5 395.12 527.836 400 513.5 400 C499.164 400 488.3 395.12 488.3 384.384 C488.3 371.69599999999997 498.14 351.2 513.5 351.2 Z"/></clipPath>
<path d="M513.5 351.2 C528.86 351.2 539.5 371.69599999999997 539.5 384.384 C539.5 395.12 527.836 400 513.5 400 C499.164 400 488.3 395.12 488.3 384.384 C488.3 371.69599999999997 498.14 351.2 513.5 351.2 Z" fill="#3f6c38"/>
<g clip-path="url(#ct22)">
<circle cx="537.4" cy="358.0" r="1.6" fill="#28501f"/>
<circle cx="511.2" cy="385.5" r="1.9" fill="#70aa5c"/>
<circle cx="492.4" cy="364.3" r="1.2" fill="#28501f"/>
<circle cx="519.1" cy="396.7" r="1.8" fill="#447a3a"/>
<circle cx="490.8" cy="394.2" r="1.2" fill="#1f421b"/>
<circle cx="498.0" cy="392.7" r="2.1" fill="#9ccf88"/>
<circle cx="527.9" cy="398.1" r="1.7" fill="#28501f"/>
<circle cx="519.7" cy="363.8" r="1.2" fill="#447a3a"/>
<circle cx="528.3" cy="397.8" r="0.9" fill="#9ccf88"/>
<circle cx="530.6" cy="383.8" r="1.3" fill="#356530"/>
<circle cx="505.8" cy="395.2" r="2.1" fill="#447a3a"/>
<circle cx="514.2" cy="376.4" r="1.3" fill="#447a3a"/>
<circle cx="535.6" cy="360.2" r="1.3" fill="#70aa5c"/>
<circle cx="489.6" cy="379.3" r="1.5" fill="#9ccf88"/>
<circle cx="510.5" cy="384.1" r="1.3" fill="#9ccf88"/>
<circle cx="492.9" cy="372.9" r="1.3" fill="#4f8a40"/>
<circle cx="508.9" cy="396.6" r="1.5" fill="#5c9a4c"/>
<circle cx="508.8" cy="355.9" r="1.0" fill="#5c9a4c"/>
<circle cx="516.3" cy="368.2" r="2.1" fill="#70aa5c"/>
<circle cx="520.5" cy="372.8" r="1.5" fill="#4f8a40"/>
<circle cx="529.1" cy="382.8" r="1.7" fill="#5c9a4c"/>
<circle cx="493.5" cy="360.7" r="1.9" fill="#4f8a40"/>
<circle cx="535.5" cy="373.7" r="1.4" fill="#4f8a40"/>
<circle cx="515.1" cy="379.7" r="1.4" fill="#2e5a28"/>
<circle cx="491.7" cy="386.0" r="1.9" fill="#4f8a40"/>
<circle cx="519.5" cy="397.2" r="1.0" fill="#28501f"/>
<circle cx="506.2" cy="354.3" r="1.0" fill="#4f8a40"/>
<circle cx="523.7" cy="372.4" r="1.0" fill="#1f421b"/>
<circle cx="492.2" cy="360.5" r="2.2" fill="#4f8a40"/>
<circle cx="515.7" cy="374.9" r="1.0" fill="#4f8a40"/>
<circle cx="502.4" cy="356.0" r="1.6" fill="#2e5a28"/>
<circle cx="508.9" cy="356.9" r="2.0" fill="#9ccf88"/>
<circle cx="490.3" cy="369.6" r="1.0" fill="#28501f"/>
<circle cx="526.9" cy="382.2" r="1.8" fill="#28501f"/>
<circle cx="525.1" cy="373.9" r="2.0" fill="#5c9a4c"/>
<circle cx="494.1" cy="396.2" r="1.0" fill="#356530"/>
<circle cx="537.5" cy="366.8" r="1.4" fill="#28501f"/>
<circle cx="519.2" cy="353.3" r="1.8" fill="#2e5a28"/>
<circle cx="502.5" cy="388.7" r="1.6" fill="#5c9a4c"/>
<circle cx="538.8" cy="392.5" r="1.4" fill="#5c9a4c"/>
<circle cx="510.3" cy="368.5" r="2.0" fill="#1f421b"/>
<circle cx="530.2" cy="351.6" r="1.6" fill="#447a3a"/>
<circle cx="493.8" cy="392.5" r="1.7" fill="#9ccf88"/>
<circle cx="502.6" cy="392.4" r="1.0" fill="#1f421b"/>
<circle cx="502.5" cy="359.0" r="1.4" fill="#9ccf88"/>
<circle cx="513.9" cy="357.8" r="1.0" fill="#9ccf88"/>
<circle cx="509.1" cy="393.9" r="1.3" fill="#4f8a40"/>
<circle cx="521.9" cy="360.7" r="0.8" fill="#356530"/>
<circle cx="535.5" cy="367.7" r="1.5" fill="#28501f"/>
<circle cx="537.9" cy="358.7" r="1.2" fill="#9ccf88"/>
<circle cx="537.1" cy="351.2" r="1.9" fill="#70aa5c"/>
<circle cx="489.4" cy="397.5" r="1.9" fill="#28501f"/>
<circle cx="530.6" cy="356.0" r="2.1" fill="#4f8a40"/>
<circle cx="501.5" cy="366.0" r="2.1" fill="#70aa5c"/>
<circle cx="509.4" cy="381.6" r="1.2" fill="#9ccf88"/>
<circle cx="538.0" cy="397.2" r="2.1" fill="#28501f"/>
<circle cx="529.3" cy="383.0" r="1.7" fill="#70aa5c"/>
<circle cx="488.5" cy="363.0" r="2.1" fill="#4f8a40"/>
<circle cx="503.6" cy="352.4" r="0.9" fill="#70aa5c"/>
<circle cx="534.7" cy="391.4" r="0.9" fill="#356530"/>
<circle cx="502.9" cy="370.4" r="1.9" fill="#356530"/>
<circle cx="504.0" cy="377.6" r="2.1" fill="#70aa5c"/>
<circle cx="512.1" cy="364.9" r="1.0" fill="#9ccf88"/>
<circle cx="494.9" cy="362.9" r="1.5" fill="#1f421b"/>
<circle cx="511.1" cy="363.8" r="1.9" fill="#5c9a4c"/>
<circle cx="494.1" cy="374.7" r="1.5" fill="#356530"/>
<circle cx="491.8" cy="367.8" r="0.9" fill="#447a3a"/>
<circle cx="522.5" cy="394.9" r="1.6" fill="#447a3a"/>
<circle cx="490.8" cy="384.7" r="1.2" fill="#2e5a28"/>
<circle cx="502.9" cy="351.7" r="0.9" fill="#4f8a40"/>
<circle cx="531.5" cy="388.0" r="1.0" fill="#4f8a40"/>
<circle cx="512.5" cy="382.2" r="0.7" fill="#356530"/>
<circle cx="535.4" cy="379.8" r="1.5" fill="#1f421b"/>
<circle cx="518.3" cy="360.9" r="1.8" fill="#70aa5c"/>
<circle cx="511.3" cy="386.1" r="1.7" fill="#447a3a"/>
<circle cx="511.4" cy="390.2" r="1.1" fill="#447a3a"/>
<circle cx="532.8" cy="389.4" r="1.7" fill="#5c9a4c"/>
<circle cx="502.1" cy="365.4" r="1.6" fill="#28501f"/>
<circle cx="500.6" cy="378.2" r="1.4" fill="#70aa5c"/>
<circle cx="529.6" cy="399.1" r="1.6" fill="#4f8a40"/>
<circle cx="500.0" cy="371.5" r="2.1" fill="#356530"/>
<circle cx="495.4" cy="378.1" r="1.2" fill="#9ccf88"/>
<circle cx="528.1" cy="357.4" r="1.8" fill="#9ccf88"/>
<circle cx="500.2" cy="357.6" r="1.5" fill="#70aa5c"/>
<circle cx="526.3" cy="351.8" r="1.4" fill="#356530"/>
<circle cx="529.7" cy="358.9" r="1.5" fill="#356530"/>
<circle cx="496.5" cy="356.1" r="0.9" fill="#70aa5c"/>
<circle cx="497.0" cy="386.1" r="1.7" fill="#9ccf88"/>
<circle cx="523.4" cy="377.4" r="1.7" fill="#70aa5c"/>
<circle cx="517.9" cy="362.3" r="1.8" fill="#356530"/>
<circle cx="520.9" cy="381.2" r="0.8" fill="#70aa5c"/>
<circle cx="530.6" cy="377.6" r="1.6" fill="#447a3a"/>
<circle cx="505.5" cy="372.2" r="1.0" fill="#4f8a40"/>
<circle cx="529.4" cy="371.1" r="1.6" fill="#28501f"/>
<circle cx="519.7" cy="364.5" r="2.1" fill="#70aa5c"/>
<circle cx="514.5" cy="395.3" r="1.5" fill="#70aa5c"/>
<circle cx="496.4" cy="397.7" r="1.4" fill="#28501f"/>
<circle cx="508.0" cy="354.8" r="2.0" fill="#28501f"/>
<circle cx="508.2" cy="365.3" r="1.9" fill="#9ccf88"/>
<circle cx="497.0" cy="365.0" r="0.8" fill="#4f8a40"/>
<circle cx="530.1" cy="366.6" r="1.4" fill="#356530"/>
<circle cx="496.8" cy="352.1" r="1.0" fill="#4f8a40"/>
<circle cx="509.9" cy="382.7" r="1.6" fill="#2e5a28"/>
<circle cx="504.0" cy="383.6" r="1.3" fill="#1f421b"/>
<circle cx="492.5" cy="374.1" r="0.9" fill="#5c9a4c"/>
<circle cx="509.9" cy="358.6" r="1.8" fill="#1f421b"/>
<circle cx="506.9" cy="396.0" r="1.5" fill="#2e5a28"/>
<circle cx="533.6" cy="374.5" r="1.0" fill="#28501f"/>
<circle cx="525.9" cy="353.4" r="1.9" fill="#28501f"/>
<circle cx="494.3" cy="368.3" r="1.7" fill="#4f8a40"/>
<circle cx="537.2" cy="398.3" r="0.9" fill="#356530"/>
<circle cx="522.0" cy="363.0" r="1.7" fill="#2e5a28"/>
<circle cx="494.2" cy="393.5" r="1.1" fill="#356530"/>
<circle cx="494.6" cy="365.6" r="2.1" fill="#5c9a4c"/>
<circle cx="523.2" cy="368.2" r="1.6" fill="#1f421b"/>
<circle cx="522.5" cy="384.2" r="2.1" fill="#9ccf88"/>
<circle cx="498.5" cy="361.5" r="1.2" fill="#356530"/>
<circle cx="495.1" cy="354.6" r="2.1" fill="#5c9a4c"/>
<circle cx="518.2" cy="391.9" r="0.9" fill="#1f421b"/>
<circle cx="509.7" cy="388.7" r="1.8" fill="#28501f"/>
<circle cx="489.4" cy="382.1" r="1.8" fill="#2e5a28"/>
<circle cx="509.4" cy="384.3" r="1.8" fill="#9ccf88"/>
<circle cx="497.2" cy="364.1" r="0.9" fill="#70aa5c"/>
<circle cx="491.1" cy="377.6" r="1.9" fill="#5c9a4c"/>
<circle cx="514.2" cy="369.0" r="1.1" fill="#356530"/>
<circle cx="504.8" cy="398.7" r="1.5" fill="#28501f"/>
<circle cx="518.0" cy="352.4" r="2.1" fill="#1f421b"/>
<circle cx="515.0" cy="370.1" r="1.3" fill="#70aa5c"/>
<circle cx="531.0" cy="356.0" r="2.1" fill="#4f8a40"/>
<circle cx="519.4" cy="368.6" r="1.1" fill="#5c9a4c"/>
<circle cx="527.6" cy="355.8" r="0.8" fill="#1f421b"/>
<circle cx="525.5" cy="391.2" r="1.2" fill="#447a3a"/>
<circle cx="501.9" cy="368.9" r="2.1" fill="#4f8a40"/>
<circle cx="505.6" cy="394.3" r="1.1" fill="#70aa5c"/>
<circle cx="492.0" cy="387.3" r="1.9" fill="#70aa5c"/>
<circle cx="509.4" cy="387.5" r="1.4" fill="#4f8a40"/>
<circle cx="539.4" cy="389.3" r="1.8" fill="#5c9a4c"/>
<circle cx="521.8" cy="391.0" r="1.9" fill="#2e5a28"/>
<circle cx="513.2" cy="376.8" r="0.8" fill="#2e5a28"/>
<circle cx="506.4" cy="374.8" r="1.1" fill="#2e5a28"/>
<circle cx="502.5" cy="358.1" r="1.6" fill="#9ccf88"/>
<circle cx="510.8" cy="366.1" r="1.6" fill="#2e5a28"/>
<circle cx="518.7" cy="370.5" r="1.1" fill="#447a3a"/>
<circle cx="512.7" cy="375.5" r="1.8" fill="#4f8a40"/>
<circle cx="537.2" cy="385.7" r="1.3" fill="#4f8a40"/>
<circle cx="489.2" cy="383.5" r="1.4" fill="#28501f"/>
<circle cx="536.8" cy="389.4" r="2.0" fill="#28501f"/>
<circle cx="509.0" cy="374.0" r="1.3" fill="#28501f"/>
<circle cx="538.7" cy="368.6" r="1.5" fill="#28501f"/>
<circle cx="490.7" cy="355.5" r="1.8" fill="#4f8a40"/>
<ellipse cx="518.62" cy="394.144" rx="23.039999999999996" ry="6.8320000000000025" fill="#1f3f1c" opacity="0.45"/>
</g>
<ellipse cx="430.5" cy="371" rx="5" ry="4" fill="#f3ea2c"/>
<ellipse cx="436" cy="375.5" rx="5.5" ry="3.5" fill="#f3ea2c"/>
<ellipse cx="439" cy="368.5" rx="3.5" ry="3" fill="#f3ea2c"/>
<ellipse cx="446.5" cy="357.5" rx="6" ry="4.5" fill="#f3ea2c"/>
<ellipse cx="452.5" cy="361.5" rx="5" ry="3.5" fill="#f3ea2c"/>
<ellipse cx="457" cy="367" rx="4.5" ry="3.5" fill="#f3ea2c"/>
<ellipse cx="463.5" cy="359.5" rx="5" ry="4.5" fill="#f3ea2c"/>
<ellipse cx="468" cy="364.5" rx="4.5" ry="4.5" fill="#f3ea2c"/>
<ellipse cx="468" cy="372.5" rx="3.5" ry="3" fill="#f3ea2c"/>
<ellipse cx="443.5" cy="363.5" rx="3.5" ry="3" fill="#f3ea2c"/>
<ellipse cx="441.5" cy="373.5" rx="4" ry="3" fill="#f3ea2c"/>
<ellipse cx="461" cy="370.5" rx="3" ry="2.5" fill="#f3ea2c"/>
<ellipse cx="433" cy="366.5" rx="2.5" ry="2" fill="#f3ea2c"/>
<ellipse cx="456" cy="359" rx="3" ry="2.5" fill="#f3ea2c"/>
<circle cx="468.7" cy="363.0" r="0.6" fill="#fff45a"/>
<circle cx="457.0" cy="369.0" r="0.6" fill="#fff45a"/>
<circle cx="460.5" cy="371.2" r="0.9" fill="#d8c818"/>
<circle cx="437.4" cy="366.6" r="0.6" fill="#fff45a"/>
<circle cx="433.7" cy="367.3" r="1.2" fill="#f9f070"/>
<circle cx="448.0" cy="358.9" r="0.8" fill="#fff45a"/>
<circle cx="432.2" cy="365.7" r="0.7" fill="#fff45a"/>
<circle cx="448.3" cy="354.4" r="0.8" fill="#d8c818"/>
<circle cx="456.0" cy="357.3" r="0.8" fill="#fff45a"/>
<circle cx="441.1" cy="364.6" r="0.7" fill="#e2d21c"/>
<circle cx="453.9" cy="365.0" r="0.9" fill="#fff45a"/>
<circle cx="466.0" cy="372.5" r="1.2" fill="#d8c818"/>
<circle cx="435.2" cy="376.2" r="0.6" fill="#e2d21c"/>
<circle cx="441.2" cy="369.4" r="0.5" fill="#f9f070"/>
<circle cx="468.9" cy="374.0" r="1.1" fill="#fff45a"/>
<circle cx="438.8" cy="375.0" r="1.2" fill="#e2d21c"/>
<circle cx="443.5" cy="364.5" r="1.2" fill="#fff45a"/>
<circle cx="455.4" cy="360.3" r="1.0" fill="#d8c818"/>
<circle cx="445.7" cy="360.6" r="1.0" fill="#fff45a"/>
<circle cx="465.6" cy="358.4" r="0.8" fill="#e2d21c"/>
<circle cx="446.0" cy="356.4" r="0.6" fill="#f9f070"/>
<circle cx="436.1" cy="373.3" r="0.8" fill="#d8c818"/>
<circle cx="467.0" cy="366.3" r="1.0" fill="#fff45a"/>
<circle cx="464.5" cy="357.0" r="1.1" fill="#f9f070"/>
<circle cx="456.3" cy="357.7" r="0.7" fill="#f9f070"/>
<circle cx="427.4" cy="373.7" r="0.6" fill="#e2d21c"/>
<circle cx="436.8" cy="373.1" r="0.5" fill="#e2d21c"/>
<circle cx="432.6" cy="366.8" r="1.3" fill="#f9f070"/>
<circle cx="450.0" cy="361.8" r="0.6" fill="#fff45a"/>
<circle cx="461.2" cy="371.2" r="0.6" fill="#d8c818"/>
<circle cx="440.0" cy="369.6" r="0.8" fill="#e2d21c"/>
<circle cx="442.7" cy="374.6" r="1.2" fill="#d8c818"/>
<circle cx="454.5" cy="364.8" r="0.9" fill="#e2d21c"/>
<circle cx="433.5" cy="365.3" r="1.1" fill="#e2d21c"/>
<circle cx="454.0" cy="357.9" r="0.9" fill="#d8c818"/>
<circle cx="433.5" cy="375.4" r="1.3" fill="#fff45a"/>
<circle cx="438.9" cy="375.6" r="1.2" fill="#f9f070"/>
<circle cx="468.1" cy="373.1" r="1.1" fill="#f9f070"/>
<circle cx="437.7" cy="376.6" r="0.6" fill="#d8c818"/>
<circle cx="465.2" cy="367.0" r="1.1" fill="#fff45a"/>
</g>
<circle cx="471.8" cy="507.9" r="3.7" fill="#fff" stroke="#777" stroke-width="0.5"/>
<text x="471.8" y="509.09999999999997" font-size="3.2" text-anchor="middle" fill="#000" font-weight="bold" stroke="#000" stroke-width="0.16">5</text>
<line x1="476.0" y1="508.54999999999995" x2="594" y2="508.54999999999995" stroke="#000" stroke-width="1.0"/>
<text x="594" y="506.9" font-size="4.0" text-anchor="end" fill="#000" font-weight="bold" stroke="#000" stroke-width="0.3">Vista 3D</text>
</svg>
</body></html>
